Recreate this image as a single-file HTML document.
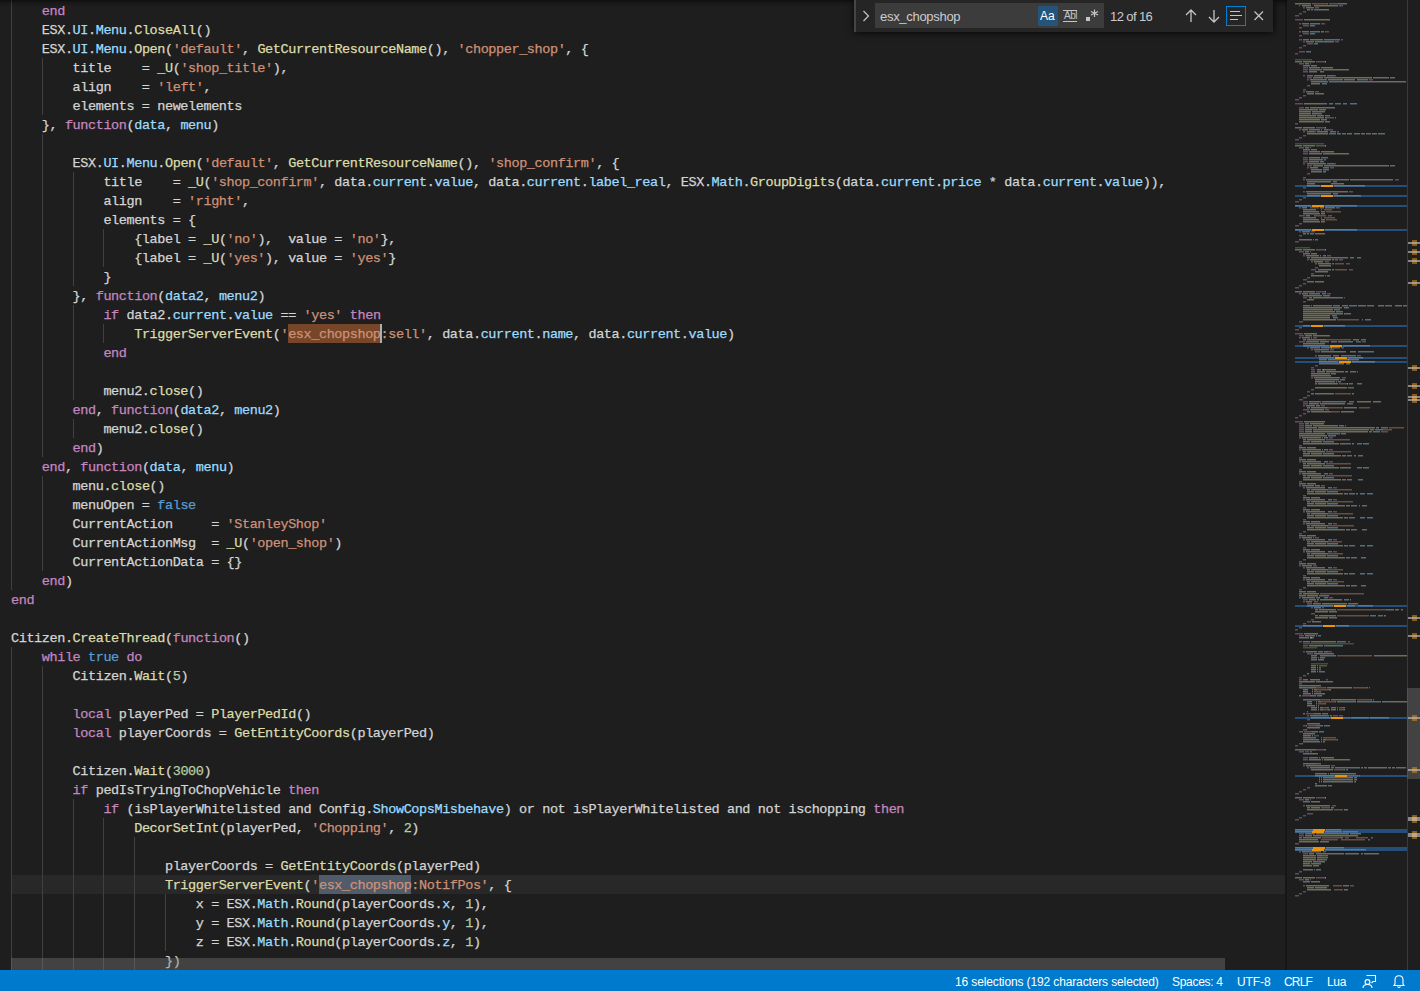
<!DOCTYPE html>
<html><head><meta charset="utf-8">
<style>
html,body{margin:0;padding:0;}
body{width:1420px;height:991px;overflow:hidden;background:#1e1e1e;position:relative;font-family:"Liberation Sans",sans-serif;}
#ed{position:absolute;left:0;top:0;width:1287px;height:970px;overflow:hidden;}
.ln{position:absolute;left:11px;height:19px;line-height:19px;white-space:pre;font-family:"Liberation Mono",monospace;font-size:13.5px;letter-spacing:-0.403px;padding-top:1px;-webkit-text-stroke:0.25px;box-sizing:border-box;height:20px;color:#d4d4d4;}
.ig{position:absolute;width:1px;background:#404040;}
.clh{position:absolute;left:11px;width:1276px;height:19px;background:#282828;}
.fm1{position:absolute;height:19px;background:#774527;}
.fm2{position:absolute;height:19px;background:#515c6a;}
.cur{position:absolute;width:2px;height:19px;background:#aeafad;}
#mmshadow{position:absolute;left:1285px;top:0;width:2px;height:970px;background:#161616;}
#mm{position:absolute;left:1287px;top:0;width:120px;height:958px;overflow:hidden;}
#vs{position:absolute;left:1407px;top:0;width:13px;height:970px;}
#vs .bd{position:absolute;left:0;top:0;width:1px;height:970px;background:#3a3a3a;}
#vs .sl{position:absolute;left:0px;top:688px;width:13px;height:91px;background:rgba(121,121,121,0.4);}
#hs{position:absolute;left:11px;top:958px;width:1274px;height:12px;}
#hs .sl{position:absolute;left:0;top:0;width:1214px;height:12px;background:rgba(121,121,121,0.4);}
#find{position:absolute;left:855px;top:0;width:418px;height:32px;background:#252526;box-shadow:0 0 8px #000;}
#find .sash{position:absolute;left:-1px;top:0;width:2px;height:32px;background:#454545;}
#find .inp{position:absolute;left:20px;top:3px;width:229px;height:25px;background:#3c3c3c;}
#find .txt{position:absolute;left:25px;top:9px;font-size:13px;color:#cccccc;letter-spacing:-0.3px;}
#sb{position:absolute;left:0;top:970px;width:1420px;height:21px;background:#007acc;color:#fff;font-size:12px;}
#sb span{position:absolute;top:5px;white-space:nowrap;letter-spacing:-0.3px;}
</style></head><body>
<div id="ed">
<div class="clh" style="top:875px"></div>
<div class="ig" style="left:11px;top:0px;height:590px"></div>
<div class="ig" style="left:11px;top:647px;height:323px"></div>
<div class="ig" style="left:42px;top:58px;height:57px"></div>
<div class="ig" style="left:42px;top:134px;height:323px"></div>
<div class="ig" style="left:42px;top:476px;height:95px"></div>
<div class="ig" style="left:42px;top:666px;height:304px"></div>
<div class="ig" style="left:73px;top:172px;height:114px"></div>
<div class="ig" style="left:73px;top:305px;height:95px"></div>
<div class="ig" style="left:73px;top:419px;height:19px"></div>
<div class="ig" style="left:73px;top:799px;height:171px"></div>
<div class="ig" style="left:103px;top:229px;height:38px"></div>
<div class="ig" style="left:103px;top:324px;height:19px"></div>
<div class="ig" style="left:103px;top:818px;height:152px"></div>
<div class="ig" style="left:134px;top:837px;height:133px"></div>
<div class="ig" style="left:165px;top:894px;height:57px"></div>
<div class="fm1" style="left:288.09px;top:324px;width:92.36px"></div>
<div class="fm2" style="left:318.88px;top:875px;width:92.36px"></div>
<div class="cur" style="left:380.46px;top:324px"></div>
<div class="ln" style="top:1px">    <span style="color:#c586c0">end</span></div>
<div class="ln" style="top:20px">    ESX.<span style="color:#9cdcfe">UI</span>.<span style="color:#9cdcfe">Menu</span>.<span style="color:#dcdcaa">CloseAll</span>()</div>
<div class="ln" style="top:39px">    ESX.<span style="color:#9cdcfe">UI</span>.<span style="color:#9cdcfe">Menu</span>.<span style="color:#dcdcaa">Open</span>(<span style="color:#ce9178">&#x27;default&#x27;</span>, <span style="color:#dcdcaa">GetCurrentResourceName</span>(), <span style="color:#ce9178">&#x27;chopper_shop&#x27;</span>, {</div>
<div class="ln" style="top:58px">        title    = <span style="color:#dcdcaa">_U</span>(<span style="color:#ce9178">&#x27;shop_title&#x27;</span>),</div>
<div class="ln" style="top:77px">        align    = <span style="color:#ce9178">&#x27;left&#x27;</span>,</div>
<div class="ln" style="top:96px">        elements = newelements</div>
<div class="ln" style="top:115px">    }, <span style="color:#c586c0">function</span>(<span style="color:#9cdcfe">data</span>, <span style="color:#9cdcfe">menu</span>)</div>
<div class="ln" style="top:153px">        ESX.<span style="color:#9cdcfe">UI</span>.<span style="color:#9cdcfe">Menu</span>.<span style="color:#dcdcaa">Open</span>(<span style="color:#ce9178">&#x27;default&#x27;</span>, <span style="color:#dcdcaa">GetCurrentResourceName</span>(), <span style="color:#ce9178">&#x27;shop_confirm&#x27;</span>, {</div>
<div class="ln" style="top:172px">            title    = <span style="color:#dcdcaa">_U</span>(<span style="color:#ce9178">&#x27;shop_confirm&#x27;</span>, data.<span style="color:#9cdcfe">current</span>.<span style="color:#9cdcfe">value</span>, data.<span style="color:#9cdcfe">current</span>.<span style="color:#9cdcfe">label_real</span>, ESX.<span style="color:#9cdcfe">Math</span>.<span style="color:#dcdcaa">GroupDigits</span>(data.<span style="color:#9cdcfe">current</span>.<span style="color:#9cdcfe">price</span> * data.<span style="color:#9cdcfe">current</span>.<span style="color:#9cdcfe">value</span>)),</div>
<div class="ln" style="top:191px">            align    = <span style="color:#ce9178">&#x27;right&#x27;</span>,</div>
<div class="ln" style="top:210px">            elements = {</div>
<div class="ln" style="top:229px">                {label = <span style="color:#dcdcaa">_U</span>(<span style="color:#ce9178">&#x27;no&#x27;</span>),  value = <span style="color:#ce9178">&#x27;no&#x27;</span>},</div>
<div class="ln" style="top:248px">                {label = <span style="color:#dcdcaa">_U</span>(<span style="color:#ce9178">&#x27;yes&#x27;</span>), value = <span style="color:#ce9178">&#x27;yes&#x27;</span>}</div>
<div class="ln" style="top:267px">            }</div>
<div class="ln" style="top:286px">        }, <span style="color:#c586c0">function</span>(<span style="color:#9cdcfe">data2</span>, <span style="color:#9cdcfe">menu2</span>)</div>
<div class="ln" style="top:305px">            <span style="color:#c586c0">if</span> data2.<span style="color:#9cdcfe">current</span>.<span style="color:#9cdcfe">value</span> == <span style="color:#ce9178">&#x27;yes&#x27;</span> <span style="color:#c586c0">then</span></div>
<div class="ln" style="top:324px">                <span style="color:#dcdcaa">TriggerServerEvent</span>(<span style="color:#ce9178">&#x27;esx_chopshop:sell&#x27;</span>, data.<span style="color:#9cdcfe">current</span>.<span style="color:#9cdcfe">name</span>, data.<span style="color:#9cdcfe">current</span>.<span style="color:#9cdcfe">value</span>)</div>
<div class="ln" style="top:343px">            <span style="color:#c586c0">end</span></div>
<div class="ln" style="top:381px">            menu2.<span style="color:#dcdcaa">close</span>()</div>
<div class="ln" style="top:400px">        <span style="color:#c586c0">end</span>, <span style="color:#c586c0">function</span>(<span style="color:#9cdcfe">data2</span>, <span style="color:#9cdcfe">menu2</span>)</div>
<div class="ln" style="top:419px">            menu2.<span style="color:#dcdcaa">close</span>()</div>
<div class="ln" style="top:438px">        <span style="color:#c586c0">end</span>)</div>
<div class="ln" style="top:457px">    <span style="color:#c586c0">end</span>, <span style="color:#c586c0">function</span>(<span style="color:#9cdcfe">data</span>, <span style="color:#9cdcfe">menu</span>)</div>
<div class="ln" style="top:476px">        menu.<span style="color:#dcdcaa">close</span>()</div>
<div class="ln" style="top:495px">        menuOpen = <span style="color:#569cd6">false</span></div>
<div class="ln" style="top:514px">        CurrentAction     = <span style="color:#ce9178">&#x27;StanleyShop&#x27;</span></div>
<div class="ln" style="top:533px">        CurrentActionMsg  = <span style="color:#dcdcaa">_U</span>(<span style="color:#ce9178">&#x27;open_shop&#x27;</span>)</div>
<div class="ln" style="top:552px">        CurrentActionData = {}</div>
<div class="ln" style="top:571px">    <span style="color:#c586c0">end</span>)</div>
<div class="ln" style="top:590px"><span style="color:#c586c0">end</span></div>
<div class="ln" style="top:628px">Citizen.<span style="color:#dcdcaa">CreateThread</span>(<span style="color:#c586c0">function</span>()</div>
<div class="ln" style="top:647px">    <span style="color:#c586c0">while</span> <span style="color:#569cd6">true</span> <span style="color:#c586c0">do</span></div>
<div class="ln" style="top:666px">        Citizen.<span style="color:#dcdcaa">Wait</span>(<span style="color:#b5cea8">5</span>)</div>
<div class="ln" style="top:704px">        <span style="color:#c586c0">local</span> playerPed = <span style="color:#dcdcaa">PlayerPedId</span>()</div>
<div class="ln" style="top:723px">        <span style="color:#c586c0">local</span> playerCoords = <span style="color:#dcdcaa">GetEntityCoords</span>(playerPed)</div>
<div class="ln" style="top:761px">        Citizen.<span style="color:#dcdcaa">Wait</span>(<span style="color:#b5cea8">3000</span>)</div>
<div class="ln" style="top:780px">        <span style="color:#c586c0">if</span> pedIsTryingToChopVehicle <span style="color:#c586c0">then</span></div>
<div class="ln" style="top:799px">            <span style="color:#c586c0">if</span> (isPlayerWhitelisted and Config.<span style="color:#9cdcfe">ShowCopsMisbehave</span>) or not isPlayerWhitelisted and not ischopping <span style="color:#c586c0">then</span></div>
<div class="ln" style="top:818px">                <span style="color:#dcdcaa">DecorSetInt</span>(playerPed, <span style="color:#ce9178">&#x27;Chopping&#x27;</span>, <span style="color:#b5cea8">2</span>)</div>
<div class="ln" style="top:856px">                    playerCoords = <span style="color:#dcdcaa">GetEntityCoords</span>(playerPed)</div>
<div class="ln" style="top:875px">                    <span style="color:#dcdcaa">TriggerServerEvent</span>(<span style="color:#ce9178">&#x27;esx_chopshop:NotifPos&#x27;</span>, {</div>
<div class="ln" style="top:894px">                        x = ESX.<span style="color:#9cdcfe">Math</span>.<span style="color:#dcdcaa">Round</span>(playerCoords.<span style="color:#9cdcfe">x</span>, <span style="color:#b5cea8">1</span>),</div>
<div class="ln" style="top:913px">                        y = ESX.<span style="color:#9cdcfe">Math</span>.<span style="color:#dcdcaa">Round</span>(playerCoords.<span style="color:#9cdcfe">y</span>, <span style="color:#b5cea8">1</span>),</div>
<div class="ln" style="top:932px">                        z = ESX.<span style="color:#9cdcfe">Math</span>.<span style="color:#dcdcaa">Round</span>(playerCoords.<span style="color:#9cdcfe">z</span>, <span style="color:#b5cea8">1</span>)</div>
<div class="ln" style="top:951px">                    })</div>
</div>
<div id="mmshadow"></div>
<div style="position:absolute;left:0;top:0;width:1287px;height:6px;box-shadow:#000 0 6px 6px -6px inset;"></div>
<div id="mm"><svg width="120" height="958" style="position:absolute;left:0;top:0">
<rect x="8" y="3" width="16" height="1" fill="#dcdcaa" fill-opacity="0.42"/><rect x="8" y="4" width="16" height="1" fill="#dcdcaa" fill-opacity="0.2"/>
<rect x="25" y="3" width="15" height="1" fill="#ce9178" fill-opacity="0.42"/><rect x="25" y="4" width="15" height="1" fill="#ce9178" fill-opacity="0.2"/>
<rect x="40" y="3" width="1" height="1" fill="#d4d4d4" fill-opacity="0.42"/><rect x="40" y="4" width="1" height="1" fill="#d4d4d4" fill-opacity="0.2"/>
<rect x="42" y="3" width="9" height="1" fill="#c586c0" fill-opacity="0.42"/><rect x="42" y="4" width="9" height="1" fill="#c586c0" fill-opacity="0.2"/>
<rect x="51" y="3" width="9" height="1" fill="#9cdcfe" fill-opacity="0.42"/><rect x="51" y="4" width="9" height="1" fill="#9cdcfe" fill-opacity="0.2"/>
<rect x="12" y="5" width="1" height="1" fill="#c586c0" fill-opacity="0.42"/><rect x="12" y="6" width="1" height="1" fill="#c586c0" fill-opacity="0.2"/>
<rect x="15" y="5" width="9" height="1" fill="#d4d4d4" fill-opacity="0.42"/><rect x="15" y="6" width="9" height="1" fill="#d4d4d4" fill-opacity="0.2"/>
<rect x="27" y="5" width="24" height="1" fill="#dcdcaa" fill-opacity="0.42"/><rect x="27" y="6" width="24" height="1" fill="#dcdcaa" fill-opacity="0.2"/>
<rect x="52" y="5" width="4" height="1" fill="#c586c0" fill-opacity="0.42"/><rect x="52" y="6" width="4" height="1" fill="#c586c0" fill-opacity="0.2"/>
<rect x="16" y="7" width="2" height="1" fill="#c586c0" fill-opacity="0.42"/><rect x="16" y="8" width="2" height="1" fill="#c586c0" fill-opacity="0.2"/>
<rect x="19" y="7" width="8" height="1" fill="#d4d4d4" fill-opacity="0.42"/><rect x="19" y="8" width="8" height="1" fill="#d4d4d4" fill-opacity="0.2"/>
<rect x="28" y="7" width="4" height="1" fill="#c586c0" fill-opacity="0.42"/><rect x="28" y="8" width="4" height="1" fill="#c586c0" fill-opacity="0.2"/>
<rect x="20" y="9" width="3" height="1" fill="#d4d4d4" fill-opacity="0.42"/><rect x="20" y="10" width="3" height="1" fill="#d4d4d4" fill-opacity="0.2"/>
<rect x="24" y="9" width="2" height="1" fill="#9cdcfe" fill-opacity="0.42"/><rect x="24" y="10" width="2" height="1" fill="#9cdcfe" fill-opacity="0.2"/>
<rect x="27" y="9" width="5" height="1" fill="#9cdcfe" fill-opacity="0.42"/><rect x="27" y="10" width="5" height="1" fill="#9cdcfe" fill-opacity="0.2"/>
<rect x="32" y="9" width="10" height="1" fill="#dcdcaa" fill-opacity="0.42"/><rect x="32" y="10" width="10" height="1" fill="#dcdcaa" fill-opacity="0.2"/>
<rect x="16" y="11" width="3" height="1" fill="#c586c0" fill-opacity="0.42"/><rect x="16" y="12" width="3" height="1" fill="#c586c0" fill-opacity="0.2"/>
<rect x="12" y="13" width="3" height="1" fill="#c586c0" fill-opacity="0.42"/><rect x="12" y="14" width="3" height="1" fill="#c586c0" fill-opacity="0.2"/>
<rect x="8" y="15" width="4" height="1" fill="#c586c0" fill-opacity="0.42"/><rect x="8" y="16" width="4" height="1" fill="#c586c0" fill-opacity="0.2"/>
<rect x="8" y="19" width="8" height="1" fill="#c586c0" fill-opacity="0.42"/><rect x="8" y="20" width="8" height="1" fill="#c586c0" fill-opacity="0.2"/>
<rect x="17" y="19" width="26" height="1" fill="#dcdcaa" fill-opacity="0.42"/><rect x="17" y="20" width="26" height="1" fill="#dcdcaa" fill-opacity="0.2"/>
<rect x="12" y="23" width="2" height="1" fill="#c586c0" fill-opacity="0.42"/><rect x="12" y="24" width="2" height="1" fill="#c586c0" fill-opacity="0.2"/>
<rect x="15" y="23" width="7" height="1" fill="#d4d4d4" fill-opacity="0.42"/><rect x="15" y="24" width="7" height="1" fill="#d4d4d4" fill-opacity="0.2"/>
<rect x="23" y="23" width="10" height="1" fill="#9cdcfe" fill-opacity="0.42"/><rect x="23" y="24" width="10" height="1" fill="#9cdcfe" fill-opacity="0.2"/>
<rect x="34" y="23" width="4" height="1" fill="#c586c0" fill-opacity="0.42"/><rect x="34" y="24" width="4" height="1" fill="#c586c0" fill-opacity="0.2"/>
<rect x="16" y="25" width="6" height="1" fill="#c586c0" fill-opacity="0.42"/><rect x="16" y="26" width="6" height="1" fill="#c586c0" fill-opacity="0.2"/>
<rect x="23" y="25" width="5" height="1" fill="#9cdcfe" fill-opacity="0.42"/><rect x="23" y="26" width="5" height="1" fill="#9cdcfe" fill-opacity="0.2"/>
<rect x="12" y="27" width="3" height="1" fill="#c586c0" fill-opacity="0.42"/><rect x="12" y="28" width="3" height="1" fill="#c586c0" fill-opacity="0.2"/>
<rect x="12" y="31" width="2" height="1" fill="#c586c0" fill-opacity="0.42"/><rect x="12" y="32" width="2" height="1" fill="#c586c0" fill-opacity="0.2"/>
<rect x="15" y="31" width="7" height="1" fill="#d4d4d4" fill-opacity="0.42"/><rect x="15" y="32" width="7" height="1" fill="#d4d4d4" fill-opacity="0.2"/>
<rect x="23" y="31" width="10" height="1" fill="#9cdcfe" fill-opacity="0.42"/><rect x="23" y="32" width="10" height="1" fill="#9cdcfe" fill-opacity="0.2"/>
<rect x="34" y="31" width="3" height="1" fill="#d4d4d4" fill-opacity="0.42"/><rect x="34" y="32" width="3" height="1" fill="#d4d4d4" fill-opacity="0.2"/>
<rect x="38" y="31" width="4" height="1" fill="#c586c0" fill-opacity="0.42"/><rect x="38" y="32" width="4" height="1" fill="#c586c0" fill-opacity="0.2"/>
<rect x="16" y="33" width="6" height="1" fill="#c586c0" fill-opacity="0.42"/><rect x="16" y="34" width="6" height="1" fill="#c586c0" fill-opacity="0.2"/>
<rect x="23" y="33" width="5" height="1" fill="#9cdcfe" fill-opacity="0.42"/><rect x="23" y="34" width="5" height="1" fill="#9cdcfe" fill-opacity="0.2"/>
<rect x="12" y="35" width="3" height="1" fill="#c586c0" fill-opacity="0.42"/><rect x="12" y="36" width="3" height="1" fill="#c586c0" fill-opacity="0.2"/>
<rect x="12" y="39" width="3" height="1" fill="#c586c0" fill-opacity="0.42"/><rect x="12" y="40" width="3" height="1" fill="#c586c0" fill-opacity="0.2"/>
<rect x="16" y="39" width="6" height="1" fill="#d4d4d4" fill-opacity="0.42"/><rect x="16" y="40" width="6" height="1" fill="#d4d4d4" fill-opacity="0.2"/>
<rect x="23" y="39" width="13" height="1" fill="#dcdcaa" fill-opacity="0.42"/><rect x="23" y="40" width="13" height="1" fill="#dcdcaa" fill-opacity="0.2"/>
<rect x="37" y="39" width="16" height="1" fill="#9cdcfe" fill-opacity="0.42"/><rect x="37" y="40" width="16" height="1" fill="#9cdcfe" fill-opacity="0.2"/>
<rect x="54" y="39" width="2" height="1" fill="#c586c0" fill-opacity="0.42"/><rect x="54" y="40" width="2" height="1" fill="#c586c0" fill-opacity="0.2"/>
<rect x="16" y="41" width="2" height="1" fill="#c586c0" fill-opacity="0.42"/><rect x="16" y="42" width="2" height="1" fill="#c586c0" fill-opacity="0.2"/>
<rect x="19" y="41" width="8" height="1" fill="#d4d4d4" fill-opacity="0.42"/><rect x="19" y="42" width="8" height="1" fill="#d4d4d4" fill-opacity="0.2"/>
<rect x="28" y="41" width="10" height="1" fill="#9cdcfe" fill-opacity="0.42"/><rect x="28" y="42" width="10" height="1" fill="#9cdcfe" fill-opacity="0.2"/>
<rect x="38" y="41" width="9" height="1" fill="#d4d4d4" fill-opacity="0.42"/><rect x="38" y="42" width="9" height="1" fill="#d4d4d4" fill-opacity="0.2"/>
<rect x="48" y="41" width="4" height="1" fill="#c586c0" fill-opacity="0.42"/><rect x="48" y="42" width="4" height="1" fill="#c586c0" fill-opacity="0.2"/>
<rect x="20" y="43" width="6" height="1" fill="#c586c0" fill-opacity="0.42"/><rect x="20" y="44" width="6" height="1" fill="#c586c0" fill-opacity="0.2"/>
<rect x="27" y="43" width="4" height="1" fill="#9cdcfe" fill-opacity="0.42"/><rect x="27" y="44" width="4" height="1" fill="#9cdcfe" fill-opacity="0.2"/>
<rect x="16" y="45" width="3" height="1" fill="#c586c0" fill-opacity="0.42"/><rect x="16" y="46" width="3" height="1" fill="#c586c0" fill-opacity="0.2"/>
<rect x="12" y="47" width="3" height="1" fill="#c586c0" fill-opacity="0.42"/><rect x="12" y="48" width="3" height="1" fill="#c586c0" fill-opacity="0.2"/>
<rect x="12" y="51" width="6" height="1" fill="#c586c0" fill-opacity="0.42"/><rect x="12" y="52" width="6" height="1" fill="#c586c0" fill-opacity="0.2"/>
<rect x="19" y="51" width="5" height="1" fill="#9cdcfe" fill-opacity="0.42"/><rect x="19" y="52" width="5" height="1" fill="#9cdcfe" fill-opacity="0.2"/>
<rect x="8" y="53" width="3" height="1" fill="#c586c0" fill-opacity="0.42"/><rect x="8" y="54" width="3" height="1" fill="#c586c0" fill-opacity="0.2"/>
<rect x="8" y="59" width="17" height="1" fill="#6a9955" fill-opacity="0.42"/><rect x="8" y="60" width="17" height="1" fill="#6a9955" fill-opacity="0.2"/>
<rect x="8" y="61" width="7" height="1" fill="#d4d4d4" fill-opacity="0.42"/><rect x="8" y="62" width="7" height="1" fill="#d4d4d4" fill-opacity="0.2"/>
<rect x="16" y="61" width="12" height="1" fill="#dcdcaa" fill-opacity="0.42"/><rect x="16" y="62" width="12" height="1" fill="#dcdcaa" fill-opacity="0.2"/>
<rect x="29" y="61" width="10" height="1" fill="#c586c0" fill-opacity="0.42"/><rect x="29" y="62" width="10" height="1" fill="#c586c0" fill-opacity="0.2"/>
<rect x="38" y="61" width="1" height="1" fill="#d4d4d4" fill-opacity="0.42"/><rect x="38" y="62" width="1" height="1" fill="#d4d4d4" fill-opacity="0.2"/>
<rect x="12" y="63" width="5" height="1" fill="#c586c0" fill-opacity="0.42"/><rect x="12" y="64" width="5" height="1" fill="#c586c0" fill-opacity="0.2"/>
<rect x="18" y="63" width="4" height="1" fill="#9cdcfe" fill-opacity="0.42"/><rect x="18" y="64" width="4" height="1" fill="#9cdcfe" fill-opacity="0.2"/>
<rect x="23" y="63" width="1" height="1" fill="#c586c0" fill-opacity="0.42"/><rect x="23" y="64" width="1" height="1" fill="#c586c0" fill-opacity="0.2"/>
<rect x="16" y="65" width="7" height="1" fill="#d4d4d4" fill-opacity="0.42"/><rect x="16" y="66" width="7" height="1" fill="#d4d4d4" fill-opacity="0.2"/>
<rect x="24" y="65" width="6" height="1" fill="#dcdcaa" fill-opacity="0.42"/><rect x="24" y="66" width="6" height="1" fill="#dcdcaa" fill-opacity="0.2"/>
<rect x="16" y="67" width="5" height="1" fill="#c586c0" fill-opacity="0.42"/><rect x="16" y="68" width="5" height="1" fill="#c586c0" fill-opacity="0.2"/>
<rect x="22" y="67" width="11" height="1" fill="#d4d4d4" fill-opacity="0.42"/><rect x="22" y="68" width="11" height="1" fill="#d4d4d4" fill-opacity="0.2"/>
<rect x="34" y="67" width="12" height="1" fill="#dcdcaa" fill-opacity="0.42"/><rect x="34" y="68" width="12" height="1" fill="#dcdcaa" fill-opacity="0.2"/>
<rect x="16" y="69" width="5" height="1" fill="#c586c0" fill-opacity="0.42"/><rect x="16" y="70" width="5" height="1" fill="#c586c0" fill-opacity="0.2"/>
<rect x="22" y="69" width="13" height="1" fill="#d4d4d4" fill-opacity="0.42"/><rect x="22" y="70" width="13" height="1" fill="#d4d4d4" fill-opacity="0.2"/>
<rect x="36" y="69" width="26" height="1" fill="#dcdcaa" fill-opacity="0.42"/><rect x="36" y="70" width="26" height="1" fill="#dcdcaa" fill-opacity="0.2"/>
<rect x="16" y="71" width="5" height="1" fill="#c586c0" fill-opacity="0.42"/><rect x="16" y="72" width="5" height="1" fill="#c586c0" fill-opacity="0.2"/>
<rect x="22" y="71" width="8" height="1" fill="#d4d4d4" fill-opacity="0.42"/><rect x="22" y="72" width="8" height="1" fill="#d4d4d4" fill-opacity="0.2"/>
<rect x="33" y="71" width="4" height="1" fill="#9cdcfe" fill-opacity="0.42"/><rect x="33" y="72" width="4" height="1" fill="#9cdcfe" fill-opacity="0.2"/>
<rect x="16" y="75" width="2" height="1" fill="#c586c0" fill-opacity="0.42"/><rect x="16" y="76" width="2" height="1" fill="#c586c0" fill-opacity="0.2"/>
<rect x="20" y="75" width="6" height="1" fill="#d4d4d4" fill-opacity="0.42"/><rect x="20" y="76" width="6" height="1" fill="#d4d4d4" fill-opacity="0.2"/>
<rect x="27" y="75" width="12" height="1" fill="#dcdcaa" fill-opacity="0.42"/><rect x="27" y="76" width="12" height="1" fill="#dcdcaa" fill-opacity="0.2"/>
<rect x="40" y="75" width="7" height="1" fill="#9cdcfe" fill-opacity="0.42"/><rect x="40" y="76" width="7" height="1" fill="#9cdcfe" fill-opacity="0.2"/>
<rect x="47" y="75" width="2" height="1" fill="#c586c0" fill-opacity="0.42"/><rect x="47" y="76" width="2" height="1" fill="#c586c0" fill-opacity="0.2"/>
<rect x="20" y="77" width="5" height="1" fill="#c586c0" fill-opacity="0.42"/><rect x="20" y="78" width="5" height="1" fill="#c586c0" fill-opacity="0.2"/>
<rect x="26" y="77" width="10" height="1" fill="#d4d4d4" fill-opacity="0.42"/><rect x="26" y="78" width="10" height="1" fill="#d4d4d4" fill-opacity="0.2"/>
<rect x="37" y="77" width="48" height="1" fill="#dcdcaa" fill-opacity="0.42"/><rect x="37" y="78" width="48" height="1" fill="#dcdcaa" fill-opacity="0.2"/>
<rect x="86" y="77" width="16" height="1" fill="#d4d4d4" fill-opacity="0.42"/><rect x="86" y="78" width="16" height="1" fill="#d4d4d4" fill-opacity="0.2"/>
<rect x="103" y="77" width="5" height="1" fill="#9cdcfe" fill-opacity="0.42"/><rect x="103" y="78" width="5" height="1" fill="#9cdcfe" fill-opacity="0.2"/>
<rect x="20" y="79" width="2" height="1" fill="#c586c0" fill-opacity="0.42"/><rect x="20" y="80" width="2" height="1" fill="#c586c0" fill-opacity="0.2"/>
<rect x="23" y="79" width="7" height="1" fill="#d4d4d4" fill-opacity="0.42"/><rect x="23" y="80" width="7" height="1" fill="#d4d4d4" fill-opacity="0.2"/>
<rect x="30" y="79" width="10" height="1" fill="#9cdcfe" fill-opacity="0.42"/><rect x="30" y="80" width="10" height="1" fill="#9cdcfe" fill-opacity="0.2"/>
<rect x="41" y="79" width="15" height="1" fill="#d4d4d4" fill-opacity="0.42"/><rect x="41" y="80" width="15" height="1" fill="#d4d4d4" fill-opacity="0.2"/>
<rect x="57" y="79" width="11" height="1" fill="#d4d4d4" fill-opacity="0.42"/><rect x="57" y="80" width="11" height="1" fill="#d4d4d4" fill-opacity="0.2"/>
<rect x="70" y="79" width="11" height="1" fill="#9cdcfe" fill-opacity="0.42"/><rect x="70" y="80" width="11" height="1" fill="#9cdcfe" fill-opacity="0.2"/>
<rect x="82" y="79" width="4" height="1" fill="#c586c0" fill-opacity="0.42"/><rect x="82" y="80" width="4" height="1" fill="#c586c0" fill-opacity="0.2"/>
<rect x="24" y="81" width="17" height="1" fill="#dcdcaa" fill-opacity="0.42"/><rect x="24" y="82" width="17" height="1" fill="#dcdcaa" fill-opacity="0.2"/>
<rect x="42" y="81" width="11" height="1" fill="#9cdcfe" fill-opacity="0.42"/><rect x="42" y="82" width="11" height="1" fill="#9cdcfe" fill-opacity="0.2"/>
<rect x="53" y="81" width="66" height="1" fill="#d4d4d4" fill-opacity="0.42"/><rect x="53" y="82" width="66" height="1" fill="#d4d4d4" fill-opacity="0.2"/>
<rect x="24" y="83" width="9" height="1" fill="#d4d4d4" fill-opacity="0.42"/><rect x="24" y="84" width="9" height="1" fill="#d4d4d4" fill-opacity="0.2"/>
<rect x="35" y="83" width="5" height="1" fill="#9cdcfe" fill-opacity="0.42"/><rect x="35" y="84" width="5" height="1" fill="#9cdcfe" fill-opacity="0.2"/>
<rect x="20" y="85" width="3" height="1" fill="#c586c0" fill-opacity="0.42"/><rect x="20" y="86" width="3" height="1" fill="#c586c0" fill-opacity="0.2"/>
<rect x="16" y="89" width="3" height="1" fill="#c586c0" fill-opacity="0.42"/><rect x="16" y="90" width="3" height="1" fill="#c586c0" fill-opacity="0.2"/>
<rect x="16" y="91" width="2" height="1" fill="#c586c0" fill-opacity="0.42"/><rect x="16" y="92" width="2" height="1" fill="#c586c0" fill-opacity="0.2"/>
<rect x="19" y="91" width="8" height="1" fill="#d4d4d4" fill-opacity="0.42"/><rect x="19" y="92" width="8" height="1" fill="#d4d4d4" fill-opacity="0.2"/>
<rect x="28" y="91" width="4" height="1" fill="#c586c0" fill-opacity="0.42"/><rect x="28" y="92" width="4" height="1" fill="#c586c0" fill-opacity="0.2"/>
<rect x="20" y="93" width="7" height="1" fill="#d4d4d4" fill-opacity="0.42"/><rect x="20" y="94" width="7" height="1" fill="#d4d4d4" fill-opacity="0.2"/>
<rect x="28" y="93" width="9" height="1" fill="#dcdcaa" fill-opacity="0.42"/><rect x="28" y="94" width="9" height="1" fill="#dcdcaa" fill-opacity="0.2"/>
<rect x="16" y="95" width="3" height="1" fill="#c586c0" fill-opacity="0.42"/><rect x="16" y="96" width="3" height="1" fill="#c586c0" fill-opacity="0.2"/>
<rect x="12" y="97" width="3" height="1" fill="#c586c0" fill-opacity="0.42"/><rect x="12" y="98" width="3" height="1" fill="#c586c0" fill-opacity="0.2"/>
<rect x="8" y="99" width="4" height="1" fill="#c586c0" fill-opacity="0.42"/><rect x="8" y="100" width="4" height="1" fill="#c586c0" fill-opacity="0.2"/>
<rect x="8" y="103" width="8" height="1" fill="#c586c0" fill-opacity="0.42"/><rect x="8" y="104" width="8" height="1" fill="#c586c0" fill-opacity="0.2"/>
<rect x="17" y="103" width="17" height="1" fill="#dcdcaa" fill-opacity="0.42"/><rect x="17" y="104" width="17" height="1" fill="#dcdcaa" fill-opacity="0.2"/>
<rect x="34" y="103" width="6" height="1" fill="#9cdcfe" fill-opacity="0.42"/><rect x="34" y="104" width="6" height="1" fill="#9cdcfe" fill-opacity="0.2"/>
<rect x="42" y="103" width="4" height="1" fill="#9cdcfe" fill-opacity="0.42"/><rect x="42" y="104" width="4" height="1" fill="#9cdcfe" fill-opacity="0.2"/>
<rect x="48" y="103" width="6" height="1" fill="#9cdcfe" fill-opacity="0.42"/><rect x="48" y="104" width="6" height="1" fill="#9cdcfe" fill-opacity="0.2"/>
<rect x="56" y="103" width="4" height="1" fill="#9cdcfe" fill-opacity="0.42"/><rect x="56" y="104" width="4" height="1" fill="#9cdcfe" fill-opacity="0.2"/>
<rect x="63" y="103" width="7" height="1" fill="#9cdcfe" fill-opacity="0.42"/><rect x="63" y="104" width="7" height="1" fill="#9cdcfe" fill-opacity="0.2"/>
<rect x="12" y="107" width="5" height="1" fill="#c586c0" fill-opacity="0.42"/><rect x="12" y="108" width="5" height="1" fill="#c586c0" fill-opacity="0.2"/>
<rect x="18" y="107" width="4" height="1" fill="#d4d4d4" fill-opacity="0.42"/><rect x="18" y="108" width="4" height="1" fill="#d4d4d4" fill-opacity="0.2"/>
<rect x="23" y="107" width="2" height="1" fill="#d4d4d4" fill-opacity="0.42"/><rect x="23" y="108" width="2" height="1" fill="#d4d4d4" fill-opacity="0.2"/>
<rect x="25" y="107" width="15" height="1" fill="#dcdcaa" fill-opacity="0.42"/><rect x="25" y="108" width="15" height="1" fill="#dcdcaa" fill-opacity="0.2"/>
<rect x="40" y="107" width="8" height="1" fill="#d4d4d4" fill-opacity="0.42"/><rect x="40" y="108" width="8" height="1" fill="#d4d4d4" fill-opacity="0.2"/>
<rect x="12" y="109" width="13" height="1" fill="#dcdcaa" fill-opacity="0.42"/><rect x="12" y="110" width="13" height="1" fill="#dcdcaa" fill-opacity="0.2"/>
<rect x="25" y="109" width="6" height="1" fill="#d4d4d4" fill-opacity="0.42"/><rect x="25" y="110" width="6" height="1" fill="#d4d4d4" fill-opacity="0.2"/>
<rect x="32" y="109" width="7" height="1" fill="#d4d4d4" fill-opacity="0.42"/><rect x="32" y="110" width="7" height="1" fill="#d4d4d4" fill-opacity="0.2"/>
<rect x="12" y="111" width="12" height="1" fill="#dcdcaa" fill-opacity="0.42"/><rect x="12" y="112" width="12" height="1" fill="#dcdcaa" fill-opacity="0.2"/>
<rect x="25" y="111" width="7" height="1" fill="#d4d4d4" fill-opacity="0.42"/><rect x="25" y="112" width="7" height="1" fill="#d4d4d4" fill-opacity="0.2"/>
<rect x="32" y="111" width="6" height="1" fill="#d4d4d4" fill-opacity="0.42"/><rect x="32" y="112" width="6" height="1" fill="#d4d4d4" fill-opacity="0.2"/>
<rect x="12" y="113" width="12" height="1" fill="#dcdcaa" fill-opacity="0.42"/><rect x="12" y="114" width="12" height="1" fill="#dcdcaa" fill-opacity="0.2"/>
<rect x="25" y="113" width="6" height="1" fill="#d4d4d4" fill-opacity="0.42"/><rect x="25" y="114" width="6" height="1" fill="#d4d4d4" fill-opacity="0.2"/>
<rect x="31" y="113" width="4" height="1" fill="#b5cea8" fill-opacity="0.42"/><rect x="31" y="114" width="4" height="1" fill="#b5cea8" fill-opacity="0.2"/>
<rect x="12" y="115" width="17" height="1" fill="#dcdcaa" fill-opacity="0.42"/><rect x="12" y="116" width="17" height="1" fill="#dcdcaa" fill-opacity="0.2"/>
<rect x="30" y="115" width="7" height="1" fill="#d4d4d4" fill-opacity="0.42"/><rect x="30" y="116" width="7" height="1" fill="#d4d4d4" fill-opacity="0.2"/>
<rect x="38" y="115" width="5" height="1" fill="#9cdcfe" fill-opacity="0.42"/><rect x="38" y="116" width="5" height="1" fill="#9cdcfe" fill-opacity="0.2"/>
<rect x="12" y="117" width="25" height="1" fill="#dcdcaa" fill-opacity="0.42"/><rect x="12" y="118" width="25" height="1" fill="#dcdcaa" fill-opacity="0.2"/>
<rect x="38" y="117" width="2" height="1" fill="#d4d4d4" fill-opacity="0.42"/><rect x="38" y="118" width="2" height="1" fill="#d4d4d4" fill-opacity="0.2"/>
<rect x="40" y="117" width="7" height="1" fill="#ce9178" fill-opacity="0.42"/><rect x="40" y="118" width="7" height="1" fill="#ce9178" fill-opacity="0.2"/>
<rect x="48" y="117" width="1" height="1" fill="#d4d4d4" fill-opacity="0.42"/><rect x="48" y="118" width="1" height="1" fill="#d4d4d4" fill-opacity="0.2"/>
<rect x="12" y="119" width="21" height="1" fill="#dcdcaa" fill-opacity="0.42"/><rect x="12" y="120" width="21" height="1" fill="#dcdcaa" fill-opacity="0.2"/>
<rect x="34" y="119" width="6" height="1" fill="#d4d4d4" fill-opacity="0.42"/><rect x="34" y="120" width="6" height="1" fill="#d4d4d4" fill-opacity="0.2"/>
<rect x="12" y="121" width="25" height="1" fill="#dcdcaa" fill-opacity="0.42"/><rect x="12" y="122" width="25" height="1" fill="#dcdcaa" fill-opacity="0.2"/>
<rect x="38" y="121" width="5" height="1" fill="#d4d4d4" fill-opacity="0.42"/><rect x="38" y="122" width="5" height="1" fill="#d4d4d4" fill-opacity="0.2"/>
<rect x="8" y="123" width="3" height="1" fill="#c586c0" fill-opacity="0.42"/><rect x="8" y="124" width="3" height="1" fill="#c586c0" fill-opacity="0.2"/>
<rect x="8" y="127" width="7" height="1" fill="#d4d4d4" fill-opacity="0.42"/><rect x="8" y="128" width="7" height="1" fill="#d4d4d4" fill-opacity="0.2"/>
<rect x="16" y="127" width="12" height="1" fill="#dcdcaa" fill-opacity="0.42"/><rect x="16" y="128" width="12" height="1" fill="#dcdcaa" fill-opacity="0.2"/>
<rect x="29" y="127" width="10" height="1" fill="#c586c0" fill-opacity="0.42"/><rect x="29" y="128" width="10" height="1" fill="#c586c0" fill-opacity="0.2"/>
<rect x="38" y="127" width="1" height="1" fill="#d4d4d4" fill-opacity="0.42"/><rect x="38" y="128" width="1" height="1" fill="#d4d4d4" fill-opacity="0.2"/>
<rect x="12" y="129" width="2" height="1" fill="#c586c0" fill-opacity="0.42"/><rect x="12" y="130" width="2" height="1" fill="#c586c0" fill-opacity="0.2"/>
<rect x="15" y="129" width="6" height="1" fill="#d4d4d4" fill-opacity="0.42"/><rect x="15" y="130" width="6" height="1" fill="#d4d4d4" fill-opacity="0.2"/>
<rect x="22" y="129" width="11" height="1" fill="#9cdcfe" fill-opacity="0.42"/><rect x="22" y="130" width="11" height="1" fill="#9cdcfe" fill-opacity="0.2"/>
<rect x="34" y="129" width="1" height="1" fill="#d4d4d4" fill-opacity="0.42"/><rect x="34" y="130" width="1" height="1" fill="#d4d4d4" fill-opacity="0.2"/>
<rect x="37" y="129" width="4" height="1" fill="#9cdcfe" fill-opacity="0.42"/><rect x="37" y="130" width="4" height="1" fill="#9cdcfe" fill-opacity="0.2"/>
<rect x="41" y="129" width="5" height="1" fill="#c586c0" fill-opacity="0.42"/><rect x="41" y="130" width="5" height="1" fill="#c586c0" fill-opacity="0.2"/>
<rect x="16" y="131" width="2" height="1" fill="#c586c0" fill-opacity="0.42"/><rect x="16" y="132" width="2" height="1" fill="#c586c0" fill-opacity="0.2"/>
<rect x="20" y="131" width="7" height="1" fill="#d4d4d4" fill-opacity="0.42"/><rect x="20" y="132" width="7" height="1" fill="#d4d4d4" fill-opacity="0.2"/>
<rect x="27" y="131" width="2" height="1" fill="#c586c0" fill-opacity="0.42"/><rect x="27" y="132" width="2" height="1" fill="#c586c0" fill-opacity="0.2"/>
<rect x="30" y="131" width="11" height="1" fill="#dcdcaa" fill-opacity="0.42"/><rect x="30" y="132" width="11" height="1" fill="#dcdcaa" fill-opacity="0.2"/>
<rect x="43" y="131" width="6" height="1" fill="#9cdcfe" fill-opacity="0.42"/><rect x="43" y="132" width="6" height="1" fill="#9cdcfe" fill-opacity="0.2"/>
<rect x="50" y="131" width="2" height="1" fill="#c586c0" fill-opacity="0.42"/><rect x="50" y="132" width="2" height="1" fill="#c586c0" fill-opacity="0.2"/>
<rect x="20" y="133" width="21" height="1" fill="#dcdcaa" fill-opacity="0.42"/><rect x="20" y="134" width="21" height="1" fill="#dcdcaa" fill-opacity="0.2"/>
<rect x="42" y="133" width="7" height="1" fill="#9cdcfe" fill-opacity="0.42"/><rect x="42" y="134" width="7" height="1" fill="#9cdcfe" fill-opacity="0.2"/>
<rect x="50" y="133" width="4" height="1" fill="#d4d4d4" fill-opacity="0.42"/><rect x="50" y="134" width="4" height="1" fill="#d4d4d4" fill-opacity="0.2"/>
<rect x="55" y="133" width="4" height="1" fill="#9cdcfe" fill-opacity="0.42"/><rect x="55" y="134" width="4" height="1" fill="#9cdcfe" fill-opacity="0.2"/>
<rect x="60" y="133" width="5" height="1" fill="#d4d4d4" fill-opacity="0.42"/><rect x="60" y="134" width="5" height="1" fill="#d4d4d4" fill-opacity="0.2"/>
<rect x="67" y="133" width="6" height="1" fill="#9cdcfe" fill-opacity="0.42"/><rect x="67" y="134" width="6" height="1" fill="#9cdcfe" fill-opacity="0.2"/>
<rect x="74" y="133" width="4" height="1" fill="#d4d4d4" fill-opacity="0.42"/><rect x="74" y="134" width="4" height="1" fill="#d4d4d4" fill-opacity="0.2"/>
<rect x="79" y="133" width="5" height="1" fill="#9cdcfe" fill-opacity="0.42"/><rect x="79" y="134" width="5" height="1" fill="#9cdcfe" fill-opacity="0.2"/>
<rect x="85" y="133" width="5" height="1" fill="#d4d4d4" fill-opacity="0.42"/><rect x="85" y="134" width="5" height="1" fill="#d4d4d4" fill-opacity="0.2"/>
<rect x="91" y="133" width="7" height="1" fill="#9cdcfe" fill-opacity="0.42"/><rect x="91" y="134" width="7" height="1" fill="#9cdcfe" fill-opacity="0.2"/>
<rect x="16" y="135" width="3" height="1" fill="#c586c0" fill-opacity="0.42"/><rect x="16" y="136" width="3" height="1" fill="#c586c0" fill-opacity="0.2"/>
<rect x="12" y="137" width="3" height="1" fill="#c586c0" fill-opacity="0.42"/><rect x="12" y="138" width="3" height="1" fill="#c586c0" fill-opacity="0.2"/>
<rect x="8" y="139" width="4" height="1" fill="#c586c0" fill-opacity="0.42"/><rect x="8" y="140" width="4" height="1" fill="#c586c0" fill-opacity="0.2"/>
<rect x="8" y="143" width="29" height="1" fill="#6a9955" fill-opacity="0.42"/><rect x="8" y="144" width="29" height="1" fill="#6a9955" fill-opacity="0.2"/>
<rect x="8" y="145" width="7" height="1" fill="#d4d4d4" fill-opacity="0.42"/><rect x="8" y="146" width="7" height="1" fill="#d4d4d4" fill-opacity="0.2"/>
<rect x="16" y="145" width="12" height="1" fill="#dcdcaa" fill-opacity="0.42"/><rect x="16" y="146" width="12" height="1" fill="#dcdcaa" fill-opacity="0.2"/>
<rect x="29" y="145" width="10" height="1" fill="#c586c0" fill-opacity="0.42"/><rect x="29" y="146" width="10" height="1" fill="#c586c0" fill-opacity="0.2"/>
<rect x="38" y="145" width="1" height="1" fill="#d4d4d4" fill-opacity="0.42"/><rect x="38" y="146" width="1" height="1" fill="#d4d4d4" fill-opacity="0.2"/>
<rect x="12" y="147" width="5" height="1" fill="#c586c0" fill-opacity="0.42"/><rect x="12" y="148" width="5" height="1" fill="#c586c0" fill-opacity="0.2"/>
<rect x="18" y="147" width="4" height="1" fill="#9cdcfe" fill-opacity="0.42"/><rect x="18" y="148" width="4" height="1" fill="#9cdcfe" fill-opacity="0.2"/>
<rect x="23" y="147" width="1" height="1" fill="#c586c0" fill-opacity="0.42"/><rect x="23" y="148" width="1" height="1" fill="#c586c0" fill-opacity="0.2"/>
<rect x="16" y="149" width="7" height="1" fill="#d4d4d4" fill-opacity="0.42"/><rect x="16" y="150" width="7" height="1" fill="#d4d4d4" fill-opacity="0.2"/>
<rect x="24" y="149" width="6" height="1" fill="#dcdcaa" fill-opacity="0.42"/><rect x="24" y="150" width="6" height="1" fill="#dcdcaa" fill-opacity="0.2"/>
<rect x="16" y="151" width="5" height="1" fill="#c586c0" fill-opacity="0.42"/><rect x="16" y="152" width="5" height="1" fill="#c586c0" fill-opacity="0.2"/>
<rect x="22" y="151" width="11" height="1" fill="#d4d4d4" fill-opacity="0.42"/><rect x="22" y="152" width="11" height="1" fill="#d4d4d4" fill-opacity="0.2"/>
<rect x="34" y="151" width="13" height="1" fill="#dcdcaa" fill-opacity="0.42"/><rect x="34" y="152" width="13" height="1" fill="#dcdcaa" fill-opacity="0.2"/>
<rect x="16" y="153" width="5" height="1" fill="#c586c0" fill-opacity="0.42"/><rect x="16" y="154" width="5" height="1" fill="#c586c0" fill-opacity="0.2"/>
<rect x="22" y="153" width="13" height="1" fill="#d4d4d4" fill-opacity="0.42"/><rect x="22" y="154" width="13" height="1" fill="#d4d4d4" fill-opacity="0.2"/>
<rect x="36" y="153" width="26" height="1" fill="#dcdcaa" fill-opacity="0.42"/><rect x="36" y="154" width="26" height="1" fill="#dcdcaa" fill-opacity="0.2"/>
<rect x="16" y="157" width="5" height="1" fill="#c586c0" fill-opacity="0.42"/><rect x="16" y="158" width="5" height="1" fill="#c586c0" fill-opacity="0.2"/>
<rect x="22" y="157" width="11" height="1" fill="#d4d4d4" fill-opacity="0.42"/><rect x="22" y="158" width="11" height="1" fill="#d4d4d4" fill-opacity="0.2"/>
<rect x="34" y="157" width="7" height="1" fill="#9cdcfe" fill-opacity="0.42"/><rect x="34" y="158" width="7" height="1" fill="#9cdcfe" fill-opacity="0.2"/>
<rect x="16" y="159" width="5" height="1" fill="#c586c0" fill-opacity="0.42"/><rect x="16" y="160" width="5" height="1" fill="#c586c0" fill-opacity="0.2"/>
<rect x="22" y="159" width="14" height="1" fill="#d4d4d4" fill-opacity="0.42"/><rect x="22" y="160" width="14" height="1" fill="#d4d4d4" fill-opacity="0.2"/>
<rect x="37" y="159" width="2" height="1" fill="#9cdcfe" fill-opacity="0.42"/><rect x="37" y="160" width="2" height="1" fill="#9cdcfe" fill-opacity="0.2"/>
<rect x="16" y="161" width="5" height="1" fill="#c586c0" fill-opacity="0.42"/><rect x="16" y="162" width="5" height="1" fill="#c586c0" fill-opacity="0.2"/>
<rect x="22" y="161" width="10" height="1" fill="#d4d4d4" fill-opacity="0.42"/><rect x="22" y="162" width="10" height="1" fill="#d4d4d4" fill-opacity="0.2"/>
<rect x="33" y="161" width="4" height="1" fill="#9cdcfe" fill-opacity="0.42"/><rect x="33" y="162" width="4" height="1" fill="#9cdcfe" fill-opacity="0.2"/>
<rect x="16" y="163" width="2" height="1" fill="#c586c0" fill-opacity="0.42"/><rect x="16" y="164" width="2" height="1" fill="#c586c0" fill-opacity="0.2"/>
<rect x="20" y="163" width="7" height="1" fill="#d4d4d4" fill-opacity="0.42"/><rect x="20" y="164" width="7" height="1" fill="#d4d4d4" fill-opacity="0.2"/>
<rect x="27" y="163" width="12" height="1" fill="#dcdcaa" fill-opacity="0.42"/><rect x="27" y="164" width="12" height="1" fill="#dcdcaa" fill-opacity="0.2"/>
<rect x="40" y="163" width="7" height="1" fill="#9cdcfe" fill-opacity="0.42"/><rect x="40" y="164" width="7" height="1" fill="#9cdcfe" fill-opacity="0.2"/>
<rect x="47" y="163" width="2" height="1" fill="#c586c0" fill-opacity="0.42"/><rect x="47" y="164" width="2" height="1" fill="#c586c0" fill-opacity="0.2"/>
<rect x="20" y="165" width="5" height="1" fill="#c586c0" fill-opacity="0.42"/><rect x="20" y="166" width="5" height="1" fill="#c586c0" fill-opacity="0.2"/>
<rect x="26" y="165" width="10" height="1" fill="#d4d4d4" fill-opacity="0.42"/><rect x="26" y="166" width="10" height="1" fill="#d4d4d4" fill-opacity="0.2"/>
<rect x="37" y="165" width="24" height="1" fill="#dcdcaa" fill-opacity="0.42"/><rect x="37" y="166" width="24" height="1" fill="#dcdcaa" fill-opacity="0.2"/>
<rect x="61" y="165" width="41" height="1" fill="#d4d4d4" fill-opacity="0.42"/><rect x="61" y="166" width="41" height="1" fill="#d4d4d4" fill-opacity="0.2"/>
<rect x="103" y="165" width="5" height="1" fill="#9cdcfe" fill-opacity="0.42"/><rect x="103" y="166" width="5" height="1" fill="#9cdcfe" fill-opacity="0.2"/>
<rect x="20" y="167" width="2" height="1" fill="#c586c0" fill-opacity="0.42"/><rect x="20" y="168" width="2" height="1" fill="#c586c0" fill-opacity="0.2"/>
<rect x="23" y="167" width="8" height="1" fill="#d4d4d4" fill-opacity="0.42"/><rect x="23" y="168" width="8" height="1" fill="#d4d4d4" fill-opacity="0.2"/>
<rect x="36" y="167" width="6" height="1" fill="#9cdcfe" fill-opacity="0.42"/><rect x="36" y="168" width="6" height="1" fill="#9cdcfe" fill-opacity="0.2"/>
<rect x="43" y="167" width="4" height="1" fill="#c586c0" fill-opacity="0.42"/><rect x="43" y="168" width="4" height="1" fill="#c586c0" fill-opacity="0.2"/>
<rect x="24" y="169" width="11" height="1" fill="#d4d4d4" fill-opacity="0.42"/><rect x="24" y="170" width="11" height="1" fill="#d4d4d4" fill-opacity="0.2"/>
<rect x="36" y="169" width="6" height="1" fill="#9cdcfe" fill-opacity="0.42"/><rect x="36" y="170" width="6" height="1" fill="#9cdcfe" fill-opacity="0.2"/>
<rect x="24" y="171" width="11" height="1" fill="#d4d4d4" fill-opacity="0.42"/><rect x="24" y="172" width="11" height="1" fill="#d4d4d4" fill-opacity="0.2"/>
<rect x="36" y="171" width="3" height="1" fill="#d4d4d4" fill-opacity="0.42"/><rect x="36" y="172" width="3" height="1" fill="#d4d4d4" fill-opacity="0.2"/>
<rect x="20" y="173" width="3" height="1" fill="#c586c0" fill-opacity="0.42"/><rect x="20" y="174" width="3" height="1" fill="#c586c0" fill-opacity="0.2"/>
<rect x="16" y="177" width="3" height="1" fill="#c586c0" fill-opacity="0.42"/><rect x="16" y="178" width="3" height="1" fill="#c586c0" fill-opacity="0.2"/>
<rect x="16" y="179" width="2" height="1" fill="#c586c0" fill-opacity="0.42"/><rect x="16" y="180" width="2" height="1" fill="#c586c0" fill-opacity="0.2"/>
<rect x="19" y="179" width="43" height="1" fill="#d4d4d4" fill-opacity="0.42"/><rect x="19" y="180" width="43" height="1" fill="#d4d4d4" fill-opacity="0.2"/>
<rect x="63" y="179" width="43" height="1" fill="#d4d4d4" fill-opacity="0.42"/><rect x="63" y="180" width="43" height="1" fill="#d4d4d4" fill-opacity="0.2"/>
<rect x="108" y="179" width="4" height="1" fill="#c586c0" fill-opacity="0.42"/><rect x="108" y="180" width="4" height="1" fill="#c586c0" fill-opacity="0.2"/>
<rect x="20" y="181" width="24" height="1" fill="#d4d4d4" fill-opacity="0.42"/><rect x="20" y="182" width="24" height="1" fill="#d4d4d4" fill-opacity="0.2"/>
<rect x="46" y="181" width="4" height="1" fill="#9cdcfe" fill-opacity="0.42"/><rect x="46" y="182" width="4" height="1" fill="#9cdcfe" fill-opacity="0.2"/>
<rect x="20" y="183" width="8" height="1" fill="#d4d4d4" fill-opacity="0.42"/><rect x="20" y="184" width="8" height="1" fill="#d4d4d4" fill-opacity="0.2"/>
<rect x="44" y="183" width="13" height="1" fill="#d4d4d4" fill-opacity="0.42"/><rect x="44" y="184" width="13" height="1" fill="#d4d4d4" fill-opacity="0.2"/>
<rect x="8" y="185" width="112" height="2" fill="#264f78"/>
<rect x="20" y="185" width="13" height="1" fill="#d4d4d4" fill-opacity="0.32"/><rect x="20" y="186" width="13" height="1" fill="#d4d4d4" fill-opacity="0.16"/>
<rect x="34" y="185" width="12" height="2" fill="#e8940f"/>
<rect x="47" y="185" width="31" height="1" fill="#d4d4d4" fill-opacity="0.32"/><rect x="47" y="186" width="31" height="1" fill="#d4d4d4" fill-opacity="0.16"/>
<rect x="16" y="187" width="3" height="1" fill="#c586c0" fill-opacity="0.42"/><rect x="16" y="188" width="3" height="1" fill="#c586c0" fill-opacity="0.2"/>
<rect x="16" y="191" width="2" height="1" fill="#c586c0" fill-opacity="0.42"/><rect x="16" y="192" width="2" height="1" fill="#c586c0" fill-opacity="0.2"/>
<rect x="19" y="191" width="42" height="1" fill="#d4d4d4" fill-opacity="0.42"/><rect x="19" y="192" width="42" height="1" fill="#d4d4d4" fill-opacity="0.2"/>
<rect x="62" y="191" width="4" height="1" fill="#c586c0" fill-opacity="0.42"/><rect x="62" y="192" width="4" height="1" fill="#c586c0" fill-opacity="0.2"/>
<rect x="20" y="193" width="24" height="1" fill="#d4d4d4" fill-opacity="0.42"/><rect x="20" y="194" width="24" height="1" fill="#d4d4d4" fill-opacity="0.2"/>
<rect x="46" y="193" width="5" height="1" fill="#9cdcfe" fill-opacity="0.42"/><rect x="46" y="194" width="5" height="1" fill="#9cdcfe" fill-opacity="0.2"/>
<rect x="8" y="195" width="112" height="2" fill="#264f78"/>
<rect x="20" y="195" width="13" height="1" fill="#d4d4d4" fill-opacity="0.32"/><rect x="20" y="196" width="13" height="1" fill="#d4d4d4" fill-opacity="0.16"/>
<rect x="34" y="195" width="12" height="2" fill="#e8940f"/>
<rect x="47" y="195" width="27" height="1" fill="#d4d4d4" fill-opacity="0.32"/><rect x="47" y="196" width="27" height="1" fill="#d4d4d4" fill-opacity="0.16"/>
<rect x="16" y="197" width="3" height="1" fill="#c586c0" fill-opacity="0.42"/><rect x="16" y="198" width="3" height="1" fill="#c586c0" fill-opacity="0.2"/>
<rect x="12" y="199" width="3" height="1" fill="#c586c0" fill-opacity="0.42"/><rect x="12" y="200" width="3" height="1" fill="#c586c0" fill-opacity="0.2"/>
<rect x="8" y="201" width="4" height="1" fill="#c586c0" fill-opacity="0.42"/><rect x="8" y="202" width="4" height="1" fill="#c586c0" fill-opacity="0.2"/>
<rect x="8" y="205" width="112" height="2" fill="#264f78"/>
<rect x="8" y="205" width="16" height="1" fill="#d4d4d4" fill-opacity="0.32"/><rect x="8" y="206" width="16" height="1" fill="#d4d4d4" fill-opacity="0.16"/>
<rect x="25" y="205" width="12" height="2" fill="#e8940f"/>
<rect x="38" y="205" width="18" height="1" fill="#d4d4d4" fill-opacity="0.32"/><rect x="38" y="206" width="18" height="1" fill="#d4d4d4" fill-opacity="0.16"/>
<rect x="56" y="205" width="14" height="1" fill="#9cdcfe" fill-opacity="0.32"/><rect x="56" y="206" width="14" height="1" fill="#9cdcfe" fill-opacity="0.16"/>
<rect x="12" y="207" width="2" height="1" fill="#c586c0" fill-opacity="0.42"/><rect x="12" y="208" width="2" height="1" fill="#c586c0" fill-opacity="0.2"/>
<rect x="15" y="207" width="5" height="1" fill="#d4d4d4" fill-opacity="0.42"/><rect x="15" y="208" width="5" height="1" fill="#d4d4d4" fill-opacity="0.2"/>
<rect x="23" y="207" width="9" height="1" fill="#ce9178" fill-opacity="0.42"/><rect x="23" y="208" width="9" height="1" fill="#ce9178" fill-opacity="0.2"/>
<rect x="33" y="207" width="4" height="1" fill="#d4d4d4" fill-opacity="0.42"/><rect x="33" y="208" width="4" height="1" fill="#d4d4d4" fill-opacity="0.2"/>
<rect x="38" y="207" width="10" height="1" fill="#dcdcaa" fill-opacity="0.42"/><rect x="38" y="208" width="10" height="1" fill="#dcdcaa" fill-opacity="0.2"/>
<rect x="49" y="207" width="4" height="1" fill="#c586c0" fill-opacity="0.42"/><rect x="49" y="208" width="4" height="1" fill="#c586c0" fill-opacity="0.2"/>
<rect x="16" y="209" width="13" height="1" fill="#d4d4d4" fill-opacity="0.42"/><rect x="16" y="210" width="13" height="1" fill="#d4d4d4" fill-opacity="0.2"/>
<rect x="34" y="209" width="1" height="1" fill="#d4d4d4" fill-opacity="0.42"/><rect x="34" y="210" width="1" height="1" fill="#d4d4d4" fill-opacity="0.2"/>
<rect x="37" y="209" width="8" height="1" fill="#ce9178" fill-opacity="0.42"/><rect x="37" y="210" width="8" height="1" fill="#ce9178" fill-opacity="0.2"/>
<rect x="16" y="211" width="16" height="1" fill="#d4d4d4" fill-opacity="0.42"/><rect x="16" y="212" width="16" height="1" fill="#d4d4d4" fill-opacity="0.2"/>
<rect x="34" y="211" width="2" height="1" fill="#d4d4d4" fill-opacity="0.42"/><rect x="34" y="212" width="2" height="1" fill="#d4d4d4" fill-opacity="0.2"/>
<rect x="36" y="211" width="2" height="1" fill="#dcdcaa" fill-opacity="0.42"/><rect x="36" y="212" width="2" height="1" fill="#dcdcaa" fill-opacity="0.2"/>
<rect x="39" y="211" width="15" height="1" fill="#ce9178" fill-opacity="0.42"/><rect x="39" y="212" width="15" height="1" fill="#ce9178" fill-opacity="0.2"/>
<rect x="16" y="213" width="17" height="1" fill="#d4d4d4" fill-opacity="0.42"/><rect x="16" y="214" width="17" height="1" fill="#d4d4d4" fill-opacity="0.2"/>
<rect x="34" y="213" width="4" height="1" fill="#d4d4d4" fill-opacity="0.42"/><rect x="34" y="214" width="4" height="1" fill="#d4d4d4" fill-opacity="0.2"/>
<rect x="12" y="215" width="6" height="1" fill="#c586c0" fill-opacity="0.42"/><rect x="12" y="216" width="6" height="1" fill="#c586c0" fill-opacity="0.2"/>
<rect x="19" y="215" width="4" height="1" fill="#d4d4d4" fill-opacity="0.42"/><rect x="19" y="216" width="4" height="1" fill="#d4d4d4" fill-opacity="0.2"/>
<rect x="27" y="215" width="12" height="1" fill="#ce9178" fill-opacity="0.42"/><rect x="27" y="216" width="12" height="1" fill="#ce9178" fill-opacity="0.2"/>
<rect x="41" y="215" width="4" height="1" fill="#c586c0" fill-opacity="0.42"/><rect x="41" y="216" width="4" height="1" fill="#c586c0" fill-opacity="0.2"/>
<rect x="16" y="217" width="13" height="1" fill="#d4d4d4" fill-opacity="0.42"/><rect x="16" y="218" width="13" height="1" fill="#d4d4d4" fill-opacity="0.2"/>
<rect x="34" y="217" width="1" height="1" fill="#d4d4d4" fill-opacity="0.42"/><rect x="34" y="218" width="1" height="1" fill="#d4d4d4" fill-opacity="0.2"/>
<rect x="37" y="217" width="11" height="1" fill="#ce9178" fill-opacity="0.42"/><rect x="37" y="218" width="11" height="1" fill="#ce9178" fill-opacity="0.2"/>
<rect x="16" y="219" width="16" height="1" fill="#d4d4d4" fill-opacity="0.42"/><rect x="16" y="220" width="16" height="1" fill="#d4d4d4" fill-opacity="0.2"/>
<rect x="34" y="219" width="2" height="1" fill="#d4d4d4" fill-opacity="0.42"/><rect x="34" y="220" width="2" height="1" fill="#d4d4d4" fill-opacity="0.2"/>
<rect x="36" y="219" width="2" height="1" fill="#dcdcaa" fill-opacity="0.42"/><rect x="36" y="220" width="2" height="1" fill="#dcdcaa" fill-opacity="0.2"/>
<rect x="39" y="219" width="11" height="1" fill="#ce9178" fill-opacity="0.42"/><rect x="39" y="220" width="11" height="1" fill="#ce9178" fill-opacity="0.2"/>
<rect x="16" y="221" width="17" height="1" fill="#d4d4d4" fill-opacity="0.42"/><rect x="16" y="222" width="17" height="1" fill="#d4d4d4" fill-opacity="0.2"/>
<rect x="34" y="221" width="4" height="1" fill="#d4d4d4" fill-opacity="0.42"/><rect x="34" y="222" width="4" height="1" fill="#d4d4d4" fill-opacity="0.2"/>
<rect x="12" y="223" width="3" height="1" fill="#c586c0" fill-opacity="0.42"/><rect x="12" y="224" width="3" height="1" fill="#c586c0" fill-opacity="0.2"/>
<rect x="8" y="225" width="4" height="1" fill="#c586c0" fill-opacity="0.42"/><rect x="8" y="226" width="4" height="1" fill="#c586c0" fill-opacity="0.2"/>
<rect x="8" y="229" width="112" height="2" fill="#264f78"/>
<rect x="8" y="229" width="16" height="1" fill="#d4d4d4" fill-opacity="0.32"/><rect x="8" y="230" width="16" height="1" fill="#d4d4d4" fill-opacity="0.16"/>
<rect x="25" y="229" width="12" height="2" fill="#e8940f"/>
<rect x="38" y="229" width="18" height="1" fill="#d4d4d4" fill-opacity="0.32"/><rect x="38" y="230" width="18" height="1" fill="#d4d4d4" fill-opacity="0.16"/>
<rect x="56" y="229" width="14" height="1" fill="#9cdcfe" fill-opacity="0.32"/><rect x="56" y="230" width="14" height="1" fill="#9cdcfe" fill-opacity="0.16"/>
<rect x="12" y="231" width="2" height="1" fill="#c586c0" fill-opacity="0.42"/><rect x="12" y="232" width="2" height="1" fill="#c586c0" fill-opacity="0.2"/>
<rect x="15" y="231" width="8" height="1" fill="#d4d4d4" fill-opacity="0.42"/><rect x="15" y="232" width="8" height="1" fill="#d4d4d4" fill-opacity="0.2"/>
<rect x="24" y="231" width="4" height="1" fill="#c586c0" fill-opacity="0.42"/><rect x="24" y="232" width="4" height="1" fill="#c586c0" fill-opacity="0.2"/>
<rect x="16" y="233" width="3" height="1" fill="#d4d4d4" fill-opacity="0.42"/><rect x="16" y="234" width="3" height="1" fill="#d4d4d4" fill-opacity="0.2"/>
<rect x="20" y="233" width="2" height="1" fill="#9cdcfe" fill-opacity="0.42"/><rect x="20" y="234" width="2" height="1" fill="#9cdcfe" fill-opacity="0.2"/>
<rect x="23" y="233" width="4" height="1" fill="#9cdcfe" fill-opacity="0.42"/><rect x="23" y="234" width="4" height="1" fill="#9cdcfe" fill-opacity="0.2"/>
<rect x="28" y="233" width="10" height="1" fill="#dcdcaa" fill-opacity="0.42"/><rect x="28" y="234" width="10" height="1" fill="#dcdcaa" fill-opacity="0.2"/>
<rect x="12" y="235" width="3" height="1" fill="#c586c0" fill-opacity="0.42"/><rect x="12" y="236" width="3" height="1" fill="#c586c0" fill-opacity="0.2"/>
<rect x="12" y="239" width="13" height="1" fill="#d4d4d4" fill-opacity="0.42"/><rect x="12" y="240" width="13" height="1" fill="#d4d4d4" fill-opacity="0.2"/>
<rect x="26" y="239" width="1" height="1" fill="#d4d4d4" fill-opacity="0.42"/><rect x="26" y="240" width="1" height="1" fill="#d4d4d4" fill-opacity="0.2"/>
<rect x="28" y="239" width="3" height="1" fill="#9cdcfe" fill-opacity="0.42"/><rect x="28" y="240" width="3" height="1" fill="#9cdcfe" fill-opacity="0.2"/>
<rect x="8" y="241" width="4" height="1" fill="#c586c0" fill-opacity="0.42"/><rect x="8" y="242" width="4" height="1" fill="#c586c0" fill-opacity="0.2"/>
<rect x="8" y="247" width="15" height="1" fill="#6a9955" fill-opacity="0.42"/><rect x="8" y="248" width="15" height="1" fill="#6a9955" fill-opacity="0.2"/>
<rect x="8" y="249" width="7" height="1" fill="#d4d4d4" fill-opacity="0.42"/><rect x="8" y="250" width="7" height="1" fill="#d4d4d4" fill-opacity="0.2"/>
<rect x="16" y="249" width="12" height="1" fill="#dcdcaa" fill-opacity="0.42"/><rect x="16" y="250" width="12" height="1" fill="#dcdcaa" fill-opacity="0.2"/>
<rect x="29" y="249" width="10" height="1" fill="#c586c0" fill-opacity="0.42"/><rect x="29" y="250" width="10" height="1" fill="#c586c0" fill-opacity="0.2"/>
<rect x="38" y="249" width="1" height="1" fill="#d4d4d4" fill-opacity="0.42"/><rect x="38" y="250" width="1" height="1" fill="#d4d4d4" fill-opacity="0.2"/>
<rect x="12" y="251" width="5" height="1" fill="#c586c0" fill-opacity="0.42"/><rect x="12" y="252" width="5" height="1" fill="#c586c0" fill-opacity="0.2"/>
<rect x="18" y="251" width="4" height="1" fill="#9cdcfe" fill-opacity="0.42"/><rect x="18" y="252" width="4" height="1" fill="#9cdcfe" fill-opacity="0.2"/>
<rect x="23" y="251" width="1" height="1" fill="#c586c0" fill-opacity="0.42"/><rect x="23" y="252" width="1" height="1" fill="#c586c0" fill-opacity="0.2"/>
<rect x="16" y="253" width="7" height="1" fill="#d4d4d4" fill-opacity="0.42"/><rect x="16" y="254" width="7" height="1" fill="#d4d4d4" fill-opacity="0.2"/>
<rect x="24" y="253" width="6" height="1" fill="#dcdcaa" fill-opacity="0.42"/><rect x="24" y="254" width="6" height="1" fill="#dcdcaa" fill-opacity="0.2"/>
<rect x="16" y="255" width="2" height="1" fill="#c586c0" fill-opacity="0.42"/><rect x="16" y="256" width="2" height="1" fill="#c586c0" fill-opacity="0.2"/>
<rect x="19" y="255" width="13" height="1" fill="#d4d4d4" fill-opacity="0.42"/><rect x="19" y="256" width="13" height="1" fill="#d4d4d4" fill-opacity="0.2"/>
<rect x="33" y="255" width="1" height="1" fill="#d4d4d4" fill-opacity="0.42"/><rect x="33" y="256" width="1" height="1" fill="#d4d4d4" fill-opacity="0.2"/>
<rect x="36" y="255" width="3" height="1" fill="#9cdcfe" fill-opacity="0.42"/><rect x="36" y="256" width="3" height="1" fill="#9cdcfe" fill-opacity="0.2"/>
<rect x="40" y="255" width="4" height="1" fill="#c586c0" fill-opacity="0.42"/><rect x="40" y="256" width="4" height="1" fill="#c586c0" fill-opacity="0.2"/>
<rect x="20" y="257" width="3" height="1" fill="#d4d4d4" fill-opacity="0.42"/><rect x="20" y="258" width="3" height="1" fill="#d4d4d4" fill-opacity="0.2"/>
<rect x="24" y="257" width="20" height="1" fill="#dcdcaa" fill-opacity="0.42"/><rect x="24" y="258" width="20" height="1" fill="#dcdcaa" fill-opacity="0.2"/>
<rect x="44" y="257" width="17" height="1" fill="#d4d4d4" fill-opacity="0.42"/><rect x="44" y="258" width="17" height="1" fill="#d4d4d4" fill-opacity="0.2"/>
<rect x="63" y="257" width="4" height="1" fill="#9cdcfe" fill-opacity="0.42"/><rect x="63" y="258" width="4" height="1" fill="#9cdcfe" fill-opacity="0.2"/>
<rect x="70" y="257" width="4" height="1" fill="#9cdcfe" fill-opacity="0.42"/><rect x="70" y="258" width="4" height="1" fill="#9cdcfe" fill-opacity="0.2"/>
<rect x="20" y="259" width="2" height="1" fill="#c586c0" fill-opacity="0.42"/><rect x="20" y="260" width="2" height="1" fill="#c586c0" fill-opacity="0.2"/>
<rect x="23" y="259" width="21" height="1" fill="#dcdcaa" fill-opacity="0.42"/><rect x="23" y="260" width="21" height="1" fill="#dcdcaa" fill-opacity="0.2"/>
<rect x="45" y="259" width="2" height="1" fill="#d4d4d4" fill-opacity="0.42"/><rect x="45" y="260" width="2" height="1" fill="#d4d4d4" fill-opacity="0.2"/>
<rect x="48" y="259" width="3" height="1" fill="#b5cea8" fill-opacity="0.42"/><rect x="48" y="260" width="3" height="1" fill="#b5cea8" fill-opacity="0.2"/>
<rect x="52" y="259" width="4" height="1" fill="#c586c0" fill-opacity="0.42"/><rect x="52" y="260" width="4" height="1" fill="#c586c0" fill-opacity="0.2"/>
<rect x="24" y="261" width="2" height="1" fill="#c586c0" fill-opacity="0.42"/><rect x="24" y="262" width="2" height="1" fill="#c586c0" fill-opacity="0.2"/>
<rect x="27" y="261" width="9" height="1" fill="#dcdcaa" fill-opacity="0.42"/><rect x="27" y="262" width="9" height="1" fill="#dcdcaa" fill-opacity="0.2"/>
<rect x="38" y="261" width="4" height="1" fill="#c586c0" fill-opacity="0.42"/><rect x="38" y="262" width="4" height="1" fill="#c586c0" fill-opacity="0.2"/>
<rect x="28" y="263" width="2" height="1" fill="#c586c0" fill-opacity="0.42"/><rect x="28" y="264" width="2" height="1" fill="#c586c0" fill-opacity="0.2"/>
<rect x="31" y="263" width="13" height="1" fill="#d4d4d4" fill-opacity="0.42"/><rect x="31" y="264" width="13" height="1" fill="#d4d4d4" fill-opacity="0.2"/>
<rect x="45" y="263" width="2" height="1" fill="#d4d4d4" fill-opacity="0.42"/><rect x="45" y="264" width="2" height="1" fill="#d4d4d4" fill-opacity="0.2"/>
<rect x="48" y="263" width="9" height="1" fill="#ce9178" fill-opacity="0.42"/><rect x="48" y="264" width="9" height="1" fill="#ce9178" fill-opacity="0.2"/>
<rect x="59" y="263" width="4" height="1" fill="#c586c0" fill-opacity="0.42"/><rect x="59" y="264" width="4" height="1" fill="#c586c0" fill-opacity="0.2"/>
<rect x="32" y="265" width="12" height="1" fill="#dcdcaa" fill-opacity="0.42"/><rect x="32" y="266" width="12" height="1" fill="#dcdcaa" fill-opacity="0.2"/>
<rect x="28" y="267" width="3" height="1" fill="#c586c0" fill-opacity="0.42"/><rect x="28" y="268" width="3" height="1" fill="#c586c0" fill-opacity="0.2"/>
<rect x="24" y="269" width="5" height="1" fill="#c586c0" fill-opacity="0.42"/><rect x="24" y="270" width="5" height="1" fill="#c586c0" fill-opacity="0.2"/>
<rect x="31" y="269" width="13" height="1" fill="#d4d4d4" fill-opacity="0.42"/><rect x="31" y="270" width="13" height="1" fill="#d4d4d4" fill-opacity="0.2"/>
<rect x="45" y="269" width="2" height="1" fill="#d4d4d4" fill-opacity="0.42"/><rect x="45" y="270" width="2" height="1" fill="#d4d4d4" fill-opacity="0.2"/>
<rect x="48" y="269" width="12" height="1" fill="#ce9178" fill-opacity="0.42"/><rect x="48" y="270" width="12" height="1" fill="#ce9178" fill-opacity="0.2"/>
<rect x="62" y="269" width="4" height="1" fill="#c586c0" fill-opacity="0.42"/><rect x="62" y="270" width="4" height="1" fill="#c586c0" fill-opacity="0.2"/>
<rect x="28" y="271" width="13" height="1" fill="#dcdcaa" fill-opacity="0.42"/><rect x="28" y="272" width="13" height="1" fill="#dcdcaa" fill-opacity="0.2"/>
<rect x="24" y="273" width="3" height="1" fill="#c586c0" fill-opacity="0.42"/><rect x="24" y="274" width="3" height="1" fill="#c586c0" fill-opacity="0.2"/>
<rect x="24" y="275" width="13" height="1" fill="#d4d4d4" fill-opacity="0.42"/><rect x="24" y="276" width="13" height="1" fill="#d4d4d4" fill-opacity="0.2"/>
<rect x="38" y="275" width="1" height="1" fill="#d4d4d4" fill-opacity="0.42"/><rect x="38" y="276" width="1" height="1" fill="#d4d4d4" fill-opacity="0.2"/>
<rect x="40" y="275" width="3" height="1" fill="#9cdcfe" fill-opacity="0.42"/><rect x="40" y="276" width="3" height="1" fill="#9cdcfe" fill-opacity="0.2"/>
<rect x="20" y="277" width="3" height="1" fill="#c586c0" fill-opacity="0.42"/><rect x="20" y="278" width="3" height="1" fill="#c586c0" fill-opacity="0.2"/>
<rect x="16" y="279" width="4" height="1" fill="#c586c0" fill-opacity="0.42"/><rect x="16" y="280" width="4" height="1" fill="#c586c0" fill-opacity="0.2"/>
<rect x="20" y="281" width="7" height="1" fill="#d4d4d4" fill-opacity="0.42"/><rect x="20" y="282" width="7" height="1" fill="#d4d4d4" fill-opacity="0.2"/>
<rect x="28" y="281" width="9" height="1" fill="#dcdcaa" fill-opacity="0.42"/><rect x="28" y="282" width="9" height="1" fill="#dcdcaa" fill-opacity="0.2"/>
<rect x="16" y="283" width="3" height="1" fill="#c586c0" fill-opacity="0.42"/><rect x="16" y="284" width="3" height="1" fill="#c586c0" fill-opacity="0.2"/>
<rect x="12" y="285" width="3" height="1" fill="#c586c0" fill-opacity="0.42"/><rect x="12" y="286" width="3" height="1" fill="#c586c0" fill-opacity="0.2"/>
<rect x="8" y="287" width="4" height="1" fill="#c586c0" fill-opacity="0.42"/><rect x="8" y="288" width="4" height="1" fill="#c586c0" fill-opacity="0.2"/>
<rect x="8" y="291" width="7" height="1" fill="#d4d4d4" fill-opacity="0.42"/><rect x="8" y="292" width="7" height="1" fill="#d4d4d4" fill-opacity="0.2"/>
<rect x="16" y="291" width="12" height="1" fill="#dcdcaa" fill-opacity="0.42"/><rect x="16" y="292" width="12" height="1" fill="#dcdcaa" fill-opacity="0.2"/>
<rect x="29" y="291" width="10" height="1" fill="#c586c0" fill-opacity="0.42"/><rect x="29" y="292" width="10" height="1" fill="#c586c0" fill-opacity="0.2"/>
<rect x="38" y="291" width="1" height="1" fill="#d4d4d4" fill-opacity="0.42"/><rect x="38" y="292" width="1" height="1" fill="#d4d4d4" fill-opacity="0.2"/>
<rect x="12" y="293" width="2" height="1" fill="#c586c0" fill-opacity="0.42"/><rect x="12" y="294" width="2" height="1" fill="#c586c0" fill-opacity="0.2"/>
<rect x="15" y="293" width="6" height="1" fill="#d4d4d4" fill-opacity="0.42"/><rect x="15" y="294" width="6" height="1" fill="#d4d4d4" fill-opacity="0.2"/>
<rect x="22" y="293" width="10" height="1" fill="#9cdcfe" fill-opacity="0.42"/><rect x="22" y="294" width="10" height="1" fill="#9cdcfe" fill-opacity="0.2"/>
<rect x="32" y="293" width="1" height="1" fill="#d4d4d4" fill-opacity="0.42"/><rect x="32" y="294" width="1" height="1" fill="#d4d4d4" fill-opacity="0.2"/>
<rect x="35" y="293" width="4" height="1" fill="#9cdcfe" fill-opacity="0.42"/><rect x="35" y="294" width="4" height="1" fill="#9cdcfe" fill-opacity="0.2"/>
<rect x="40" y="293" width="4" height="1" fill="#c586c0" fill-opacity="0.42"/><rect x="40" y="294" width="4" height="1" fill="#c586c0" fill-opacity="0.2"/>
<rect x="16" y="295" width="19" height="1" fill="#dcdcaa" fill-opacity="0.42"/><rect x="16" y="296" width="19" height="1" fill="#dcdcaa" fill-opacity="0.2"/>
<rect x="36" y="295" width="7" height="1" fill="#9cdcfe" fill-opacity="0.42"/><rect x="36" y="296" width="7" height="1" fill="#9cdcfe" fill-opacity="0.2"/>
<rect x="16" y="297" width="4" height="1" fill="#c586c0" fill-opacity="0.42"/><rect x="16" y="298" width="4" height="1" fill="#c586c0" fill-opacity="0.2"/>
<rect x="22" y="297" width="3" height="1" fill="#d4d4d4" fill-opacity="0.42"/><rect x="22" y="298" width="3" height="1" fill="#d4d4d4" fill-opacity="0.2"/>
<rect x="26" y="297" width="15" height="1" fill="#dcdcaa" fill-opacity="0.42"/><rect x="26" y="298" width="15" height="1" fill="#dcdcaa" fill-opacity="0.2"/>
<rect x="41" y="297" width="7" height="1" fill="#d4d4d4" fill-opacity="0.42"/><rect x="41" y="298" width="7" height="1" fill="#d4d4d4" fill-opacity="0.2"/>
<rect x="48" y="297" width="8" height="1" fill="#9cdcfe" fill-opacity="0.42"/><rect x="48" y="298" width="8" height="1" fill="#9cdcfe" fill-opacity="0.2"/>
<rect x="57" y="297" width="1" height="1" fill="#c586c0" fill-opacity="0.42"/><rect x="57" y="298" width="1" height="1" fill="#c586c0" fill-opacity="0.2"/>
<rect x="20" y="299" width="7" height="1" fill="#d4d4d4" fill-opacity="0.42"/><rect x="20" y="300" width="7" height="1" fill="#d4d4d4" fill-opacity="0.2"/>
<rect x="16" y="301" width="3" height="1" fill="#c586c0" fill-opacity="0.42"/><rect x="16" y="302" width="3" height="1" fill="#c586c0" fill-opacity="0.2"/>
<rect x="16" y="305" width="7" height="1" fill="#d4d4d4" fill-opacity="0.42"/><rect x="16" y="306" width="7" height="1" fill="#d4d4d4" fill-opacity="0.2"/>
<rect x="24" y="305" width="1" height="1" fill="#d4d4d4" fill-opacity="0.42"/><rect x="24" y="306" width="1" height="1" fill="#d4d4d4" fill-opacity="0.2"/>
<rect x="26" y="305" width="12" height="1" fill="#dcdcaa" fill-opacity="0.42"/><rect x="26" y="306" width="12" height="1" fill="#dcdcaa" fill-opacity="0.2"/>
<rect x="38" y="305" width="7" height="1" fill="#d4d4d4" fill-opacity="0.42"/><rect x="38" y="306" width="7" height="1" fill="#d4d4d4" fill-opacity="0.2"/>
<rect x="46" y="305" width="7" height="1" fill="#9cdcfe" fill-opacity="0.42"/><rect x="46" y="306" width="7" height="1" fill="#9cdcfe" fill-opacity="0.2"/>
<rect x="55" y="305" width="6" height="1" fill="#d4d4d4" fill-opacity="0.42"/><rect x="55" y="306" width="6" height="1" fill="#d4d4d4" fill-opacity="0.2"/>
<rect x="62" y="305" width="8" height="1" fill="#9cdcfe" fill-opacity="0.42"/><rect x="62" y="306" width="8" height="1" fill="#9cdcfe" fill-opacity="0.2"/>
<rect x="71" y="305" width="8" height="1" fill="#d4d4d4" fill-opacity="0.42"/><rect x="71" y="306" width="8" height="1" fill="#d4d4d4" fill-opacity="0.2"/>
<rect x="80" y="305" width="7" height="1" fill="#9cdcfe" fill-opacity="0.42"/><rect x="80" y="306" width="7" height="1" fill="#9cdcfe" fill-opacity="0.2"/>
<rect x="91" y="305" width="6" height="1" fill="#d4d4d4" fill-opacity="0.42"/><rect x="91" y="306" width="6" height="1" fill="#d4d4d4" fill-opacity="0.2"/>
<rect x="98" y="305" width="7" height="1" fill="#9cdcfe" fill-opacity="0.42"/><rect x="98" y="306" width="7" height="1" fill="#9cdcfe" fill-opacity="0.2"/>
<rect x="108" y="305" width="7" height="1" fill="#d4d4d4" fill-opacity="0.42"/><rect x="108" y="306" width="7" height="1" fill="#d4d4d4" fill-opacity="0.2"/>
<rect x="116" y="305" width="4" height="1" fill="#9cdcfe" fill-opacity="0.42"/><rect x="116" y="306" width="4" height="1" fill="#9cdcfe" fill-opacity="0.2"/>
<rect x="16" y="307" width="39" height="1" fill="#dcdcaa" fill-opacity="0.42"/><rect x="16" y="308" width="39" height="1" fill="#dcdcaa" fill-opacity="0.2"/>
<rect x="57" y="307" width="5" height="1" fill="#9cdcfe" fill-opacity="0.42"/><rect x="57" y="308" width="5" height="1" fill="#9cdcfe" fill-opacity="0.2"/>
<rect x="16" y="309" width="28" height="1" fill="#dcdcaa" fill-opacity="0.42"/><rect x="16" y="310" width="28" height="1" fill="#dcdcaa" fill-opacity="0.2"/>
<rect x="44" y="309" width="2" height="1" fill="#d4d4d4" fill-opacity="0.42"/><rect x="44" y="310" width="2" height="1" fill="#d4d4d4" fill-opacity="0.2"/>
<rect x="47" y="309" width="6" height="1" fill="#9cdcfe" fill-opacity="0.42"/><rect x="47" y="310" width="6" height="1" fill="#9cdcfe" fill-opacity="0.2"/>
<rect x="16" y="311" width="32" height="1" fill="#dcdcaa" fill-opacity="0.42"/><rect x="16" y="312" width="32" height="1" fill="#dcdcaa" fill-opacity="0.2"/>
<rect x="49" y="311" width="2" height="1" fill="#d4d4d4" fill-opacity="0.42"/><rect x="49" y="312" width="2" height="1" fill="#d4d4d4" fill-opacity="0.2"/>
<rect x="51" y="311" width="5" height="1" fill="#9cdcfe" fill-opacity="0.42"/><rect x="51" y="312" width="5" height="1" fill="#9cdcfe" fill-opacity="0.2"/>
<rect x="16" y="313" width="40" height="1" fill="#dcdcaa" fill-opacity="0.42"/><rect x="16" y="314" width="40" height="1" fill="#dcdcaa" fill-opacity="0.2"/>
<rect x="57" y="313" width="1" height="1" fill="#d4d4d4" fill-opacity="0.42"/><rect x="57" y="314" width="1" height="1" fill="#d4d4d4" fill-opacity="0.2"/>
<rect x="58" y="313" width="6" height="1" fill="#9cdcfe" fill-opacity="0.42"/><rect x="58" y="314" width="6" height="1" fill="#9cdcfe" fill-opacity="0.2"/>
<rect x="16" y="315" width="27" height="1" fill="#dcdcaa" fill-opacity="0.42"/><rect x="16" y="316" width="27" height="1" fill="#dcdcaa" fill-opacity="0.2"/>
<rect x="45" y="315" width="5" height="1" fill="#9cdcfe" fill-opacity="0.42"/><rect x="45" y="316" width="5" height="1" fill="#9cdcfe" fill-opacity="0.2"/>
<rect x="16" y="317" width="27" height="1" fill="#dcdcaa" fill-opacity="0.42"/><rect x="16" y="318" width="27" height="1" fill="#dcdcaa" fill-opacity="0.2"/>
<rect x="46" y="317" width="5" height="1" fill="#9cdcfe" fill-opacity="0.42"/><rect x="46" y="318" width="5" height="1" fill="#9cdcfe" fill-opacity="0.2"/>
<rect x="16" y="319" width="33" height="1" fill="#dcdcaa" fill-opacity="0.42"/><rect x="16" y="320" width="33" height="1" fill="#dcdcaa" fill-opacity="0.2"/>
<rect x="50" y="319" width="22" height="1" fill="#ce9178" fill-opacity="0.42"/><rect x="50" y="320" width="22" height="1" fill="#ce9178" fill-opacity="0.2"/>
<rect x="75" y="319" width="1" height="1" fill="#d4d4d4" fill-opacity="0.42"/><rect x="75" y="320" width="1" height="1" fill="#d4d4d4" fill-opacity="0.2"/>
<rect x="78" y="319" width="6" height="1" fill="#9cdcfe" fill-opacity="0.42"/><rect x="78" y="320" width="6" height="1" fill="#9cdcfe" fill-opacity="0.2"/>
<rect x="12" y="321" width="4" height="1" fill="#c586c0" fill-opacity="0.42"/><rect x="12" y="322" width="4" height="1" fill="#c586c0" fill-opacity="0.2"/>
<rect x="8" y="325" width="112" height="2" fill="#264f78"/>
<rect x="16" y="325" width="7" height="1" fill="#d4d4d4" fill-opacity="0.32"/><rect x="16" y="326" width="7" height="1" fill="#d4d4d4" fill-opacity="0.16"/>
<rect x="24" y="325" width="12" height="2" fill="#e8940f"/>
<rect x="37" y="325" width="21" height="1" fill="#d4d4d4" fill-opacity="0.32"/><rect x="37" y="326" width="21" height="1" fill="#d4d4d4" fill-opacity="0.16"/>
<rect x="12" y="327" width="3" height="1" fill="#c586c0" fill-opacity="0.42"/><rect x="12" y="328" width="3" height="1" fill="#c586c0" fill-opacity="0.2"/>
<rect x="8" y="329" width="4" height="1" fill="#c586c0" fill-opacity="0.42"/><rect x="8" y="330" width="4" height="1" fill="#c586c0" fill-opacity="0.2"/>
<rect x="8" y="333" width="8" height="1" fill="#c586c0" fill-opacity="0.42"/><rect x="8" y="334" width="8" height="1" fill="#c586c0" fill-opacity="0.2"/>
<rect x="17" y="333" width="13" height="1" fill="#dcdcaa" fill-opacity="0.42"/><rect x="17" y="334" width="13" height="1" fill="#dcdcaa" fill-opacity="0.2"/>
<rect x="12" y="335" width="5" height="1" fill="#c586c0" fill-opacity="0.42"/><rect x="12" y="336" width="5" height="1" fill="#c586c0" fill-opacity="0.2"/>
<rect x="18" y="335" width="7" height="1" fill="#d4d4d4" fill-opacity="0.42"/><rect x="18" y="336" width="7" height="1" fill="#d4d4d4" fill-opacity="0.2"/>
<rect x="26" y="335" width="17" height="1" fill="#dcdcaa" fill-opacity="0.42"/><rect x="26" y="336" width="17" height="1" fill="#dcdcaa" fill-opacity="0.2"/>
<rect x="12" y="337" width="2" height="1" fill="#c586c0" fill-opacity="0.42"/><rect x="12" y="338" width="2" height="1" fill="#c586c0" fill-opacity="0.2"/>
<rect x="15" y="337" width="8" height="1" fill="#d4d4d4" fill-opacity="0.42"/><rect x="15" y="338" width="8" height="1" fill="#d4d4d4" fill-opacity="0.2"/>
<rect x="24" y="337" width="1" height="1" fill="#d4d4d4" fill-opacity="0.42"/><rect x="24" y="338" width="1" height="1" fill="#d4d4d4" fill-opacity="0.2"/>
<rect x="26" y="337" width="4" height="1" fill="#c586c0" fill-opacity="0.42"/><rect x="26" y="338" width="4" height="1" fill="#c586c0" fill-opacity="0.2"/>
<rect x="16" y="339" width="3" height="1" fill="#d4d4d4" fill-opacity="0.42"/><rect x="16" y="340" width="3" height="1" fill="#d4d4d4" fill-opacity="0.2"/>
<rect x="20" y="339" width="19" height="1" fill="#dcdcaa" fill-opacity="0.42"/><rect x="20" y="340" width="19" height="1" fill="#dcdcaa" fill-opacity="0.2"/>
<rect x="39" y="339" width="25" height="1" fill="#ce9178" fill-opacity="0.42"/><rect x="39" y="340" width="25" height="1" fill="#ce9178" fill-opacity="0.2"/>
<rect x="66" y="339" width="1" height="1" fill="#d4d4d4" fill-opacity="0.42"/><rect x="66" y="340" width="1" height="1" fill="#d4d4d4" fill-opacity="0.2"/>
<rect x="67" y="339" width="5" height="1" fill="#9cdcfe" fill-opacity="0.42"/><rect x="67" y="340" width="5" height="1" fill="#9cdcfe" fill-opacity="0.2"/>
<rect x="74" y="339" width="5" height="1" fill="#9cdcfe" fill-opacity="0.42"/><rect x="74" y="340" width="5" height="1" fill="#9cdcfe" fill-opacity="0.2"/>
<rect x="12" y="341" width="6" height="1" fill="#c586c0" fill-opacity="0.42"/><rect x="12" y="342" width="6" height="1" fill="#c586c0" fill-opacity="0.2"/>
<rect x="19" y="341" width="13" height="1" fill="#d4d4d4" fill-opacity="0.42"/><rect x="19" y="342" width="13" height="1" fill="#d4d4d4" fill-opacity="0.2"/>
<rect x="33" y="341" width="9" height="1" fill="#d4d4d4" fill-opacity="0.42"/><rect x="33" y="342" width="9" height="1" fill="#d4d4d4" fill-opacity="0.2"/>
<rect x="44" y="341" width="6" height="1" fill="#9cdcfe" fill-opacity="0.42"/><rect x="44" y="342" width="6" height="1" fill="#9cdcfe" fill-opacity="0.2"/>
<rect x="51" y="341" width="15" height="1" fill="#9cdcfe" fill-opacity="0.42"/><rect x="51" y="342" width="15" height="1" fill="#9cdcfe" fill-opacity="0.2"/>
<rect x="69" y="341" width="5" height="1" fill="#b5cea8" fill-opacity="0.42"/><rect x="69" y="342" width="5" height="1" fill="#b5cea8" fill-opacity="0.2"/>
<rect x="75" y="341" width="4" height="1" fill="#c586c0" fill-opacity="0.42"/><rect x="75" y="342" width="4" height="1" fill="#c586c0" fill-opacity="0.2"/>
<rect x="16" y="343" width="22" height="1" fill="#d4d4d4" fill-opacity="0.42"/><rect x="16" y="344" width="22" height="1" fill="#d4d4d4" fill-opacity="0.2"/>
<rect x="8" y="345" width="112" height="2" fill="#264f78"/>
<rect x="16" y="345" width="26" height="1" fill="#d4d4d4" fill-opacity="0.32"/><rect x="16" y="346" width="26" height="1" fill="#d4d4d4" fill-opacity="0.16"/>
<rect x="43" y="345" width="12" height="2" fill="#e8940f"/>
<rect x="56" y="345" width="27" height="1" fill="#d4d4d4" fill-opacity="0.32"/><rect x="56" y="346" width="27" height="1" fill="#d4d4d4" fill-opacity="0.16"/>
<rect x="20" y="347" width="2" height="1" fill="#c586c0" fill-opacity="0.42"/><rect x="20" y="348" width="2" height="1" fill="#c586c0" fill-opacity="0.2"/>
<rect x="23" y="347" width="10" height="1" fill="#d4d4d4" fill-opacity="0.42"/><rect x="23" y="348" width="10" height="1" fill="#d4d4d4" fill-opacity="0.2"/>
<rect x="34" y="347" width="11" height="1" fill="#d4d4d4" fill-opacity="0.42"/><rect x="34" y="348" width="11" height="1" fill="#d4d4d4" fill-opacity="0.2"/>
<rect x="44" y="347" width="9" height="1" fill="#9cdcfe" fill-opacity="0.42"/><rect x="44" y="348" width="9" height="1" fill="#9cdcfe" fill-opacity="0.2"/>
<rect x="54" y="347" width="3" height="1" fill="#c586c0" fill-opacity="0.42"/><rect x="54" y="348" width="3" height="1" fill="#c586c0" fill-opacity="0.2"/>
<rect x="24" y="349" width="2" height="1" fill="#c586c0" fill-opacity="0.42"/><rect x="24" y="350" width="2" height="1" fill="#c586c0" fill-opacity="0.2"/>
<rect x="27" y="349" width="7" height="1" fill="#d4d4d4" fill-opacity="0.42"/><rect x="27" y="350" width="7" height="1" fill="#d4d4d4" fill-opacity="0.2"/>
<rect x="34" y="349" width="8" height="1" fill="#9cdcfe" fill-opacity="0.42"/><rect x="34" y="350" width="8" height="1" fill="#9cdcfe" fill-opacity="0.2"/>
<rect x="43" y="349" width="4" height="1" fill="#c586c0" fill-opacity="0.42"/><rect x="43" y="350" width="4" height="1" fill="#c586c0" fill-opacity="0.2"/>
<rect x="28" y="351" width="5" height="1" fill="#c586c0" fill-opacity="0.42"/><rect x="28" y="352" width="5" height="1" fill="#c586c0" fill-opacity="0.2"/>
<rect x="34" y="351" width="14" height="1" fill="#d4d4d4" fill-opacity="0.42"/><rect x="34" y="352" width="14" height="1" fill="#d4d4d4" fill-opacity="0.2"/>
<rect x="48" y="351" width="11" height="1" fill="#d4d4d4" fill-opacity="0.42"/><rect x="48" y="352" width="11" height="1" fill="#d4d4d4" fill-opacity="0.2"/>
<rect x="63" y="351" width="6" height="1" fill="#d4d4d4" fill-opacity="0.42"/><rect x="63" y="352" width="6" height="1" fill="#d4d4d4" fill-opacity="0.2"/>
<rect x="71" y="351" width="16" height="1" fill="#9cdcfe" fill-opacity="0.42"/><rect x="71" y="352" width="16" height="1" fill="#9cdcfe" fill-opacity="0.2"/>
<rect x="28" y="355" width="2" height="1" fill="#c586c0" fill-opacity="0.42"/><rect x="28" y="356" width="2" height="1" fill="#c586c0" fill-opacity="0.2"/>
<rect x="31" y="355" width="12" height="1" fill="#d4d4d4" fill-opacity="0.42"/><rect x="31" y="356" width="12" height="1" fill="#d4d4d4" fill-opacity="0.2"/>
<rect x="43" y="355" width="1" height="1" fill="#d4d4d4" fill-opacity="0.42"/><rect x="43" y="356" width="1" height="1" fill="#d4d4d4" fill-opacity="0.2"/>
<rect x="46" y="355" width="6" height="1" fill="#d4d4d4" fill-opacity="0.42"/><rect x="46" y="356" width="6" height="1" fill="#d4d4d4" fill-opacity="0.2"/>
<rect x="54" y="355" width="15" height="1" fill="#9cdcfe" fill-opacity="0.42"/><rect x="54" y="356" width="15" height="1" fill="#9cdcfe" fill-opacity="0.2"/>
<rect x="70" y="355" width="4" height="1" fill="#c586c0" fill-opacity="0.42"/><rect x="70" y="356" width="4" height="1" fill="#c586c0" fill-opacity="0.2"/>
<rect x="8" y="357" width="112" height="2" fill="#264f78"/>
<rect x="32" y="357" width="15" height="1" fill="#d4d4d4" fill-opacity="0.32"/><rect x="32" y="358" width="15" height="1" fill="#d4d4d4" fill-opacity="0.16"/>
<rect x="48" y="357" width="12" height="2" fill="#e8940f"/>
<rect x="61" y="357" width="15" height="1" fill="#d4d4d4" fill-opacity="0.32"/><rect x="61" y="358" width="15" height="1" fill="#d4d4d4" fill-opacity="0.16"/>
<rect x="32" y="359" width="8" height="1" fill="#d4d4d4" fill-opacity="0.42"/><rect x="32" y="360" width="8" height="1" fill="#d4d4d4" fill-opacity="0.2"/>
<rect x="41" y="359" width="2" height="1" fill="#d4d4d4" fill-opacity="0.42"/><rect x="41" y="360" width="2" height="1" fill="#d4d4d4" fill-opacity="0.2"/>
<rect x="43" y="359" width="19" height="1" fill="#dcdcaa" fill-opacity="0.42"/><rect x="43" y="360" width="19" height="1" fill="#dcdcaa" fill-opacity="0.2"/>
<rect x="61" y="359" width="11" height="1" fill="#d4d4d4" fill-opacity="0.42"/><rect x="61" y="360" width="11" height="1" fill="#d4d4d4" fill-opacity="0.2"/>
<rect x="8" y="361" width="112" height="2" fill="#264f78"/>
<rect x="32" y="361" width="19" height="1" fill="#d4d4d4" fill-opacity="0.32"/><rect x="32" y="362" width="19" height="1" fill="#d4d4d4" fill-opacity="0.16"/>
<rect x="52" y="361" width="12" height="2" fill="#e8940f"/>
<rect x="65" y="361" width="23" height="1" fill="#d4d4d4" fill-opacity="0.32"/><rect x="65" y="362" width="23" height="1" fill="#d4d4d4" fill-opacity="0.16"/>
<rect x="32" y="363" width="24" height="1" fill="#d4d4d4" fill-opacity="0.42"/><rect x="32" y="364" width="24" height="1" fill="#d4d4d4" fill-opacity="0.2"/>
<rect x="56" y="363" width="1" height="1" fill="#d4d4d4" fill-opacity="0.42"/><rect x="56" y="364" width="1" height="1" fill="#d4d4d4" fill-opacity="0.2"/>
<rect x="59" y="363" width="4" height="1" fill="#9cdcfe" fill-opacity="0.42"/><rect x="59" y="364" width="4" height="1" fill="#9cdcfe" fill-opacity="0.2"/>
<rect x="28" y="365" width="3" height="1" fill="#c586c0" fill-opacity="0.42"/><rect x="28" y="366" width="3" height="1" fill="#c586c0" fill-opacity="0.2"/>
<rect x="24" y="367" width="3" height="1" fill="#c586c0" fill-opacity="0.42"/><rect x="24" y="368" width="3" height="1" fill="#c586c0" fill-opacity="0.2"/>
<rect x="24" y="369" width="4" height="1" fill="#c586c0" fill-opacity="0.42"/><rect x="24" y="370" width="4" height="1" fill="#c586c0" fill-opacity="0.2"/>
<rect x="30" y="369" width="4" height="1" fill="#d4d4d4" fill-opacity="0.42"/><rect x="30" y="370" width="4" height="1" fill="#d4d4d4" fill-opacity="0.2"/>
<rect x="35" y="369" width="2" height="1" fill="#d4d4d4" fill-opacity="0.42"/><rect x="35" y="370" width="2" height="1" fill="#d4d4d4" fill-opacity="0.2"/>
<rect x="36" y="369" width="13" height="1" fill="#dcdcaa" fill-opacity="0.42"/><rect x="36" y="370" width="13" height="1" fill="#dcdcaa" fill-opacity="0.2"/>
<rect x="24" y="371" width="4" height="1" fill="#c586c0" fill-opacity="0.42"/><rect x="24" y="372" width="4" height="1" fill="#c586c0" fill-opacity="0.2"/>
<rect x="30" y="371" width="8" height="1" fill="#d4d4d4" fill-opacity="0.42"/><rect x="30" y="372" width="8" height="1" fill="#d4d4d4" fill-opacity="0.2"/>
<rect x="39" y="371" width="18" height="1" fill="#dcdcaa" fill-opacity="0.42"/><rect x="39" y="372" width="18" height="1" fill="#dcdcaa" fill-opacity="0.2"/>
<rect x="58" y="371" width="3" height="1" fill="#d4d4d4" fill-opacity="0.42"/><rect x="58" y="372" width="3" height="1" fill="#d4d4d4" fill-opacity="0.2"/>
<rect x="63" y="371" width="6" height="1" fill="#9cdcfe" fill-opacity="0.42"/><rect x="63" y="372" width="6" height="1" fill="#9cdcfe" fill-opacity="0.2"/>
<rect x="70" y="371" width="1" height="1" fill="#d4d4d4" fill-opacity="0.42"/><rect x="70" y="372" width="1" height="1" fill="#d4d4d4" fill-opacity="0.2"/>
<rect x="24" y="373" width="19" height="1" fill="#d4d4d4" fill-opacity="0.42"/><rect x="24" y="374" width="19" height="1" fill="#d4d4d4" fill-opacity="0.2"/>
<rect x="44" y="373" width="1" height="1" fill="#d4d4d4" fill-opacity="0.42"/><rect x="44" y="374" width="1" height="1" fill="#d4d4d4" fill-opacity="0.2"/>
<rect x="45" y="373" width="4" height="1" fill="#9cdcfe" fill-opacity="0.42"/><rect x="45" y="374" width="4" height="1" fill="#9cdcfe" fill-opacity="0.2"/>
<rect x="24" y="375" width="20" height="1" fill="#dcdcaa" fill-opacity="0.42"/><rect x="24" y="376" width="20" height="1" fill="#dcdcaa" fill-opacity="0.2"/>
<rect x="24" y="377" width="2" height="1" fill="#c586c0" fill-opacity="0.42"/><rect x="24" y="378" width="2" height="1" fill="#c586c0" fill-opacity="0.2"/>
<rect x="27" y="377" width="26" height="1" fill="#d4d4d4" fill-opacity="0.42"/><rect x="27" y="378" width="26" height="1" fill="#d4d4d4" fill-opacity="0.2"/>
<rect x="55" y="377" width="4" height="1" fill="#c586c0" fill-opacity="0.42"/><rect x="55" y="378" width="4" height="1" fill="#c586c0" fill-opacity="0.2"/>
<rect x="28" y="379" width="24" height="1" fill="#d4d4d4" fill-opacity="0.42"/><rect x="28" y="380" width="24" height="1" fill="#d4d4d4" fill-opacity="0.2"/>
<rect x="53" y="379" width="1" height="1" fill="#d4d4d4" fill-opacity="0.42"/><rect x="53" y="380" width="1" height="1" fill="#d4d4d4" fill-opacity="0.2"/>
<rect x="54" y="379" width="4" height="1" fill="#9cdcfe" fill-opacity="0.42"/><rect x="54" y="380" width="4" height="1" fill="#9cdcfe" fill-opacity="0.2"/>
<rect x="28" y="381" width="20" height="1" fill="#d4d4d4" fill-opacity="0.42"/><rect x="28" y="382" width="20" height="1" fill="#d4d4d4" fill-opacity="0.2"/>
<rect x="49" y="381" width="1" height="1" fill="#d4d4d4" fill-opacity="0.42"/><rect x="49" y="382" width="1" height="1" fill="#d4d4d4" fill-opacity="0.2"/>
<rect x="51" y="381" width="3" height="1" fill="#9cdcfe" fill-opacity="0.42"/><rect x="51" y="382" width="3" height="1" fill="#9cdcfe" fill-opacity="0.2"/>
<rect x="28" y="383" width="2" height="1" fill="#d4d4d4" fill-opacity="0.42"/><rect x="28" y="384" width="2" height="1" fill="#d4d4d4" fill-opacity="0.2"/>
<rect x="31" y="383" width="20" height="1" fill="#dcdcaa" fill-opacity="0.42"/><rect x="31" y="384" width="20" height="1" fill="#dcdcaa" fill-opacity="0.2"/>
<rect x="52" y="383" width="9" height="1" fill="#ce9178" fill-opacity="0.42"/><rect x="52" y="384" width="9" height="1" fill="#ce9178" fill-opacity="0.2"/>
<rect x="60" y="383" width="1" height="1" fill="#d4d4d4" fill-opacity="0.42"/><rect x="60" y="384" width="1" height="1" fill="#d4d4d4" fill-opacity="0.2"/>
<rect x="62" y="383" width="4" height="1" fill="#9cdcfe" fill-opacity="0.42"/><rect x="62" y="384" width="4" height="1" fill="#9cdcfe" fill-opacity="0.2"/>
<rect x="70" y="383" width="5" height="1" fill="#9cdcfe" fill-opacity="0.42"/><rect x="70" y="384" width="5" height="1" fill="#9cdcfe" fill-opacity="0.2"/>
<rect x="28" y="387" width="32" height="1" fill="#dcdcaa" fill-opacity="0.42"/><rect x="28" y="388" width="32" height="1" fill="#dcdcaa" fill-opacity="0.2"/>
<rect x="61" y="387" width="6" height="1" fill="#b5cea8" fill-opacity="0.42"/><rect x="61" y="388" width="6" height="1" fill="#b5cea8" fill-opacity="0.2"/>
<rect x="24" y="389" width="3" height="1" fill="#c586c0" fill-opacity="0.42"/><rect x="24" y="390" width="3" height="1" fill="#c586c0" fill-opacity="0.2"/>
<rect x="20" y="391" width="3" height="1" fill="#c586c0" fill-opacity="0.42"/><rect x="20" y="392" width="3" height="1" fill="#c586c0" fill-opacity="0.2"/>
<rect x="24" y="393" width="3" height="1" fill="#d4d4d4" fill-opacity="0.42"/><rect x="24" y="394" width="3" height="1" fill="#d4d4d4" fill-opacity="0.2"/>
<rect x="28" y="393" width="19" height="1" fill="#dcdcaa" fill-opacity="0.42"/><rect x="28" y="394" width="19" height="1" fill="#dcdcaa" fill-opacity="0.2"/>
<rect x="48" y="393" width="16" height="1" fill="#ce9178" fill-opacity="0.42"/><rect x="48" y="394" width="16" height="1" fill="#ce9178" fill-opacity="0.2"/>
<rect x="65" y="393" width="2" height="1" fill="#d4d4d4" fill-opacity="0.42"/><rect x="65" y="394" width="2" height="1" fill="#d4d4d4" fill-opacity="0.2"/>
<rect x="20" y="395" width="3" height="1" fill="#c586c0" fill-opacity="0.42"/><rect x="20" y="396" width="3" height="1" fill="#c586c0" fill-opacity="0.2"/>
<rect x="16" y="397" width="4" height="1" fill="#c586c0" fill-opacity="0.42"/><rect x="16" y="398" width="4" height="1" fill="#c586c0" fill-opacity="0.2"/>
<rect x="12" y="399" width="4" height="1" fill="#c586c0" fill-opacity="0.42"/><rect x="12" y="400" width="4" height="1" fill="#c586c0" fill-opacity="0.2"/>
<rect x="16" y="401" width="5" height="1" fill="#c586c0" fill-opacity="0.42"/><rect x="16" y="402" width="5" height="1" fill="#c586c0" fill-opacity="0.2"/>
<rect x="22" y="401" width="12" height="1" fill="#d4d4d4" fill-opacity="0.42"/><rect x="22" y="402" width="12" height="1" fill="#d4d4d4" fill-opacity="0.2"/>
<rect x="35" y="401" width="9" height="1" fill="#d4d4d4" fill-opacity="0.42"/><rect x="35" y="402" width="9" height="1" fill="#d4d4d4" fill-opacity="0.2"/>
<rect x="44" y="401" width="15" height="1" fill="#9cdcfe" fill-opacity="0.42"/><rect x="44" y="402" width="15" height="1" fill="#9cdcfe" fill-opacity="0.2"/>
<rect x="62" y="401" width="5" height="1" fill="#b5cea8" fill-opacity="0.42"/><rect x="62" y="402" width="5" height="1" fill="#b5cea8" fill-opacity="0.2"/>
<rect x="70" y="401" width="14" height="1" fill="#dcdcaa" fill-opacity="0.42"/><rect x="70" y="402" width="14" height="1" fill="#dcdcaa" fill-opacity="0.2"/>
<rect x="86" y="401" width="8" height="1" fill="#d4d4d4" fill-opacity="0.42"/><rect x="86" y="402" width="8" height="1" fill="#d4d4d4" fill-opacity="0.2"/>
<rect x="16" y="403" width="5" height="1" fill="#c586c0" fill-opacity="0.42"/><rect x="16" y="404" width="5" height="1" fill="#c586c0" fill-opacity="0.2"/>
<rect x="22" y="403" width="10" height="1" fill="#d4d4d4" fill-opacity="0.42"/><rect x="22" y="404" width="10" height="1" fill="#d4d4d4" fill-opacity="0.2"/>
<rect x="33" y="403" width="5" height="1" fill="#d4d4d4" fill-opacity="0.42"/><rect x="33" y="404" width="5" height="1" fill="#d4d4d4" fill-opacity="0.2"/>
<rect x="38" y="403" width="20" height="1" fill="#dcdcaa" fill-opacity="0.42"/><rect x="38" y="404" width="20" height="1" fill="#dcdcaa" fill-opacity="0.2"/>
<rect x="60" y="403" width="6" height="1" fill="#b5cea8" fill-opacity="0.42"/><rect x="60" y="404" width="6" height="1" fill="#b5cea8" fill-opacity="0.2"/>
<rect x="16" y="405" width="2" height="1" fill="#c586c0" fill-opacity="0.42"/><rect x="16" y="406" width="2" height="1" fill="#c586c0" fill-opacity="0.2"/>
<rect x="19" y="405" width="9" height="1" fill="#d4d4d4" fill-opacity="0.42"/><rect x="19" y="406" width="9" height="1" fill="#d4d4d4" fill-opacity="0.2"/>
<rect x="29" y="405" width="4" height="1" fill="#d4d4d4" fill-opacity="0.42"/><rect x="29" y="406" width="4" height="1" fill="#d4d4d4" fill-opacity="0.2"/>
<rect x="34" y="405" width="4" height="1" fill="#c586c0" fill-opacity="0.42"/><rect x="34" y="406" width="4" height="1" fill="#c586c0" fill-opacity="0.2"/>
<rect x="20" y="407" width="3" height="1" fill="#d4d4d4" fill-opacity="0.42"/><rect x="20" y="408" width="3" height="1" fill="#d4d4d4" fill-opacity="0.2"/>
<rect x="24" y="407" width="17" height="1" fill="#dcdcaa" fill-opacity="0.42"/><rect x="24" y="408" width="17" height="1" fill="#dcdcaa" fill-opacity="0.2"/>
<rect x="41" y="407" width="15" height="1" fill="#ce9178" fill-opacity="0.42"/><rect x="41" y="408" width="15" height="1" fill="#ce9178" fill-opacity="0.2"/>
<rect x="57" y="407" width="13" height="1" fill="#d4d4d4" fill-opacity="0.42"/><rect x="57" y="408" width="13" height="1" fill="#d4d4d4" fill-opacity="0.2"/>
<rect x="72" y="407" width="11" height="1" fill="#ce9178" fill-opacity="0.42"/><rect x="72" y="408" width="11" height="1" fill="#ce9178" fill-opacity="0.2"/>
<rect x="16" y="409" width="6" height="1" fill="#c586c0" fill-opacity="0.42"/><rect x="16" y="410" width="6" height="1" fill="#c586c0" fill-opacity="0.2"/>
<rect x="23" y="409" width="10" height="1" fill="#d4d4d4" fill-opacity="0.42"/><rect x="23" y="410" width="10" height="1" fill="#d4d4d4" fill-opacity="0.2"/>
<rect x="33" y="409" width="4" height="1" fill="#d4d4d4" fill-opacity="0.42"/><rect x="33" y="410" width="4" height="1" fill="#d4d4d4" fill-opacity="0.2"/>
<rect x="38" y="409" width="4" height="1" fill="#c586c0" fill-opacity="0.42"/><rect x="38" y="410" width="4" height="1" fill="#c586c0" fill-opacity="0.2"/>
<rect x="20" y="411" width="3" height="1" fill="#d4d4d4" fill-opacity="0.42"/><rect x="20" y="412" width="3" height="1" fill="#d4d4d4" fill-opacity="0.2"/>
<rect x="24" y="411" width="20" height="1" fill="#dcdcaa" fill-opacity="0.42"/><rect x="24" y="412" width="20" height="1" fill="#dcdcaa" fill-opacity="0.2"/>
<rect x="44" y="411" width="9" height="1" fill="#ce9178" fill-opacity="0.42"/><rect x="44" y="412" width="9" height="1" fill="#ce9178" fill-opacity="0.2"/>
<rect x="54" y="411" width="13" height="1" fill="#d4d4d4" fill-opacity="0.42"/><rect x="54" y="412" width="13" height="1" fill="#d4d4d4" fill-opacity="0.2"/>
<rect x="16" y="413" width="3" height="1" fill="#c586c0" fill-opacity="0.42"/><rect x="16" y="414" width="3" height="1" fill="#c586c0" fill-opacity="0.2"/>
<rect x="12" y="415" width="3" height="1" fill="#c586c0" fill-opacity="0.42"/><rect x="12" y="416" width="3" height="1" fill="#c586c0" fill-opacity="0.2"/>
<rect x="8" y="417" width="3" height="1" fill="#c586c0" fill-opacity="0.42"/><rect x="8" y="418" width="3" height="1" fill="#c586c0" fill-opacity="0.2"/>
<rect x="8" y="421" width="8" height="1" fill="#c586c0" fill-opacity="0.42"/><rect x="8" y="422" width="8" height="1" fill="#c586c0" fill-opacity="0.2"/>
<rect x="17" y="421" width="21" height="1" fill="#dcdcaa" fill-opacity="0.42"/><rect x="17" y="422" width="21" height="1" fill="#dcdcaa" fill-opacity="0.2"/>
<rect x="12" y="423" width="5" height="1" fill="#c586c0" fill-opacity="0.42"/><rect x="12" y="424" width="5" height="1" fill="#c586c0" fill-opacity="0.2"/>
<rect x="18" y="423" width="4" height="1" fill="#d4d4d4" fill-opacity="0.42"/><rect x="18" y="424" width="4" height="1" fill="#d4d4d4" fill-opacity="0.2"/>
<rect x="23" y="423" width="2" height="1" fill="#d4d4d4" fill-opacity="0.42"/><rect x="23" y="424" width="2" height="1" fill="#d4d4d4" fill-opacity="0.2"/>
<rect x="25" y="423" width="12" height="1" fill="#dcdcaa" fill-opacity="0.42"/><rect x="25" y="424" width="12" height="1" fill="#dcdcaa" fill-opacity="0.2"/>
<rect x="12" y="425" width="5" height="1" fill="#c586c0" fill-opacity="0.42"/><rect x="12" y="426" width="5" height="1" fill="#c586c0" fill-opacity="0.2"/>
<rect x="18" y="425" width="7" height="1" fill="#d4d4d4" fill-opacity="0.42"/><rect x="18" y="426" width="7" height="1" fill="#d4d4d4" fill-opacity="0.2"/>
<rect x="26" y="425" width="2" height="1" fill="#d4d4d4" fill-opacity="0.42"/><rect x="26" y="426" width="2" height="1" fill="#d4d4d4" fill-opacity="0.2"/>
<rect x="28" y="425" width="19" height="1" fill="#dcdcaa" fill-opacity="0.42"/><rect x="28" y="426" width="19" height="1" fill="#dcdcaa" fill-opacity="0.2"/>
<rect x="47" y="425" width="4" height="1" fill="#d4d4d4" fill-opacity="0.42"/><rect x="47" y="426" width="4" height="1" fill="#d4d4d4" fill-opacity="0.2"/>
<rect x="52" y="425" width="5" height="1" fill="#9cdcfe" fill-opacity="0.42"/><rect x="52" y="426" width="5" height="1" fill="#9cdcfe" fill-opacity="0.2"/>
<rect x="58" y="425" width="1" height="1" fill="#d4d4d4" fill-opacity="0.42"/><rect x="58" y="426" width="1" height="1" fill="#d4d4d4" fill-opacity="0.2"/>
<rect x="12" y="427" width="5" height="1" fill="#c586c0" fill-opacity="0.42"/><rect x="12" y="428" width="5" height="1" fill="#c586c0" fill-opacity="0.2"/>
<rect x="18" y="427" width="12" height="1" fill="#d4d4d4" fill-opacity="0.42"/><rect x="18" y="428" width="12" height="1" fill="#d4d4d4" fill-opacity="0.2"/>
<rect x="31" y="427" width="2" height="1" fill="#d4d4d4" fill-opacity="0.42"/><rect x="31" y="428" width="2" height="1" fill="#d4d4d4" fill-opacity="0.2"/>
<rect x="33" y="427" width="55" height="1" fill="#dcdcaa" fill-opacity="0.42"/><rect x="33" y="428" width="55" height="1" fill="#dcdcaa" fill-opacity="0.2"/>
<rect x="89" y="427" width="3" height="1" fill="#d4d4d4" fill-opacity="0.42"/><rect x="89" y="428" width="3" height="1" fill="#d4d4d4" fill-opacity="0.2"/>
<rect x="94" y="427" width="7" height="1" fill="#9cdcfe" fill-opacity="0.42"/><rect x="94" y="428" width="7" height="1" fill="#9cdcfe" fill-opacity="0.2"/>
<rect x="102" y="427" width="15" height="1" fill="#ce9178" fill-opacity="0.42"/><rect x="102" y="428" width="15" height="1" fill="#ce9178" fill-opacity="0.2"/>
<rect x="12" y="429" width="5" height="1" fill="#c586c0" fill-opacity="0.42"/><rect x="12" y="430" width="5" height="1" fill="#c586c0" fill-opacity="0.2"/>
<rect x="18" y="429" width="7" height="1" fill="#d4d4d4" fill-opacity="0.42"/><rect x="18" y="430" width="7" height="1" fill="#d4d4d4" fill-opacity="0.2"/>
<rect x="26" y="429" width="1" height="1" fill="#d4d4d4" fill-opacity="0.42"/><rect x="26" y="430" width="1" height="1" fill="#d4d4d4" fill-opacity="0.2"/>
<rect x="27" y="429" width="55" height="1" fill="#dcdcaa" fill-opacity="0.42"/><rect x="27" y="430" width="55" height="1" fill="#dcdcaa" fill-opacity="0.2"/>
<rect x="83" y="429" width="4" height="1" fill="#d4d4d4" fill-opacity="0.42"/><rect x="83" y="430" width="4" height="1" fill="#d4d4d4" fill-opacity="0.2"/>
<rect x="88" y="429" width="8" height="1" fill="#9cdcfe" fill-opacity="0.42"/><rect x="88" y="430" width="8" height="1" fill="#9cdcfe" fill-opacity="0.2"/>
<rect x="96" y="429" width="9" height="1" fill="#ce9178" fill-opacity="0.42"/><rect x="96" y="430" width="9" height="1" fill="#ce9178" fill-opacity="0.2"/>
<rect x="12" y="431" width="5" height="1" fill="#c586c0" fill-opacity="0.42"/><rect x="12" y="432" width="5" height="1" fill="#c586c0" fill-opacity="0.2"/>
<rect x="18" y="431" width="7" height="1" fill="#d4d4d4" fill-opacity="0.42"/><rect x="18" y="432" width="7" height="1" fill="#d4d4d4" fill-opacity="0.2"/>
<rect x="26" y="431" width="1" height="1" fill="#d4d4d4" fill-opacity="0.42"/><rect x="26" y="432" width="1" height="1" fill="#d4d4d4" fill-opacity="0.2"/>
<rect x="27" y="431" width="54" height="1" fill="#dcdcaa" fill-opacity="0.42"/><rect x="27" y="432" width="54" height="1" fill="#dcdcaa" fill-opacity="0.2"/>
<rect x="82" y="431" width="3" height="1" fill="#d4d4d4" fill-opacity="0.42"/><rect x="82" y="432" width="3" height="1" fill="#d4d4d4" fill-opacity="0.2"/>
<rect x="86" y="431" width="7" height="1" fill="#9cdcfe" fill-opacity="0.42"/><rect x="86" y="432" width="7" height="1" fill="#9cdcfe" fill-opacity="0.2"/>
<rect x="94" y="431" width="7" height="1" fill="#ce9178" fill-opacity="0.42"/><rect x="94" y="432" width="7" height="1" fill="#ce9178" fill-opacity="0.2"/>
<rect x="12" y="433" width="26" height="1" fill="#dcdcaa" fill-opacity="0.42"/><rect x="12" y="434" width="26" height="1" fill="#dcdcaa" fill-opacity="0.2"/>
<rect x="40" y="433" width="7" height="1" fill="#9cdcfe" fill-opacity="0.42"/><rect x="40" y="434" width="7" height="1" fill="#9cdcfe" fill-opacity="0.2"/>
<rect x="47" y="433" width="6" height="1" fill="#9cdcfe" fill-opacity="0.42"/><rect x="47" y="434" width="6" height="1" fill="#9cdcfe" fill-opacity="0.2"/>
<rect x="54" y="433" width="5" height="1" fill="#9cdcfe" fill-opacity="0.42"/><rect x="54" y="434" width="5" height="1" fill="#9cdcfe" fill-opacity="0.2"/>
<rect x="12" y="435" width="28" height="1" fill="#dcdcaa" fill-opacity="0.42"/><rect x="12" y="436" width="28" height="1" fill="#dcdcaa" fill-opacity="0.2"/>
<rect x="41" y="435" width="2" height="1" fill="#d4d4d4" fill-opacity="0.42"/><rect x="41" y="436" width="2" height="1" fill="#d4d4d4" fill-opacity="0.2"/>
<rect x="43" y="435" width="6" height="1" fill="#9cdcfe" fill-opacity="0.42"/><rect x="43" y="436" width="6" height="1" fill="#9cdcfe" fill-opacity="0.2"/>
<rect x="12" y="437" width="2" height="1" fill="#c586c0" fill-opacity="0.42"/><rect x="12" y="438" width="2" height="1" fill="#c586c0" fill-opacity="0.2"/>
<rect x="15" y="437" width="19" height="1" fill="#d4d4d4" fill-opacity="0.42"/><rect x="15" y="438" width="19" height="1" fill="#d4d4d4" fill-opacity="0.2"/>
<rect x="35" y="437" width="1" height="1" fill="#d4d4d4" fill-opacity="0.42"/><rect x="35" y="438" width="1" height="1" fill="#d4d4d4" fill-opacity="0.2"/>
<rect x="37" y="437" width="4" height="1" fill="#9cdcfe" fill-opacity="0.42"/><rect x="37" y="438" width="4" height="1" fill="#9cdcfe" fill-opacity="0.2"/>
<rect x="42" y="437" width="4" height="1" fill="#c586c0" fill-opacity="0.42"/><rect x="42" y="438" width="4" height="1" fill="#c586c0" fill-opacity="0.2"/>
<rect x="16" y="439" width="3" height="1" fill="#d4d4d4" fill-opacity="0.42"/><rect x="16" y="440" width="3" height="1" fill="#d4d4d4" fill-opacity="0.2"/>
<rect x="20" y="439" width="18" height="1" fill="#dcdcaa" fill-opacity="0.42"/><rect x="20" y="440" width="18" height="1" fill="#dcdcaa" fill-opacity="0.2"/>
<rect x="39" y="439" width="24" height="1" fill="#ce9178" fill-opacity="0.42"/><rect x="39" y="440" width="24" height="1" fill="#ce9178" fill-opacity="0.2"/>
<rect x="16" y="441" width="7" height="1" fill="#d4d4d4" fill-opacity="0.42"/><rect x="16" y="442" width="7" height="1" fill="#d4d4d4" fill-opacity="0.2"/>
<rect x="24" y="441" width="11" height="1" fill="#dcdcaa" fill-opacity="0.42"/><rect x="24" y="442" width="11" height="1" fill="#dcdcaa" fill-opacity="0.2"/>
<rect x="36" y="441" width="11" height="1" fill="#9cdcfe" fill-opacity="0.42"/><rect x="36" y="442" width="11" height="1" fill="#9cdcfe" fill-opacity="0.2"/>
<rect x="16" y="443" width="36" height="1" fill="#dcdcaa" fill-opacity="0.42"/><rect x="16" y="444" width="36" height="1" fill="#dcdcaa" fill-opacity="0.2"/>
<rect x="53" y="443" width="5" height="1" fill="#d4d4d4" fill-opacity="0.42"/><rect x="53" y="444" width="5" height="1" fill="#d4d4d4" fill-opacity="0.2"/>
<rect x="58" y="443" width="6" height="1" fill="#9cdcfe" fill-opacity="0.42"/><rect x="58" y="444" width="6" height="1" fill="#9cdcfe" fill-opacity="0.2"/>
<rect x="65" y="443" width="2" height="1" fill="#d4d4d4" fill-opacity="0.42"/><rect x="65" y="444" width="2" height="1" fill="#d4d4d4" fill-opacity="0.2"/>
<rect x="70" y="443" width="5" height="1" fill="#9cdcfe" fill-opacity="0.42"/><rect x="70" y="444" width="5" height="1" fill="#9cdcfe" fill-opacity="0.2"/>
<rect x="76" y="443" width="6" height="1" fill="#9cdcfe" fill-opacity="0.42"/><rect x="76" y="444" width="6" height="1" fill="#9cdcfe" fill-opacity="0.2"/>
<rect x="12" y="445" width="3" height="1" fill="#c586c0" fill-opacity="0.42"/><rect x="12" y="446" width="3" height="1" fill="#c586c0" fill-opacity="0.2"/>
<rect x="12" y="447" width="7" height="1" fill="#d4d4d4" fill-opacity="0.42"/><rect x="12" y="448" width="7" height="1" fill="#d4d4d4" fill-opacity="0.2"/>
<rect x="20" y="447" width="9" height="1" fill="#dcdcaa" fill-opacity="0.42"/><rect x="20" y="448" width="9" height="1" fill="#dcdcaa" fill-opacity="0.2"/>
<rect x="12" y="449" width="2" height="1" fill="#c586c0" fill-opacity="0.42"/><rect x="12" y="450" width="2" height="1" fill="#c586c0" fill-opacity="0.2"/>
<rect x="15" y="449" width="19" height="1" fill="#d4d4d4" fill-opacity="0.42"/><rect x="15" y="450" width="19" height="1" fill="#d4d4d4" fill-opacity="0.2"/>
<rect x="35" y="449" width="1" height="1" fill="#d4d4d4" fill-opacity="0.42"/><rect x="35" y="450" width="1" height="1" fill="#d4d4d4" fill-opacity="0.2"/>
<rect x="37" y="449" width="4" height="1" fill="#9cdcfe" fill-opacity="0.42"/><rect x="37" y="450" width="4" height="1" fill="#9cdcfe" fill-opacity="0.2"/>
<rect x="42" y="449" width="4" height="1" fill="#c586c0" fill-opacity="0.42"/><rect x="42" y="450" width="4" height="1" fill="#c586c0" fill-opacity="0.2"/>
<rect x="16" y="451" width="3" height="1" fill="#d4d4d4" fill-opacity="0.42"/><rect x="16" y="452" width="3" height="1" fill="#d4d4d4" fill-opacity="0.2"/>
<rect x="20" y="451" width="18" height="1" fill="#dcdcaa" fill-opacity="0.42"/><rect x="20" y="452" width="18" height="1" fill="#dcdcaa" fill-opacity="0.2"/>
<rect x="39" y="451" width="25" height="1" fill="#ce9178" fill-opacity="0.42"/><rect x="39" y="452" width="25" height="1" fill="#ce9178" fill-opacity="0.2"/>
<rect x="16" y="453" width="7" height="1" fill="#d4d4d4" fill-opacity="0.42"/><rect x="16" y="454" width="7" height="1" fill="#d4d4d4" fill-opacity="0.2"/>
<rect x="24" y="453" width="11" height="1" fill="#dcdcaa" fill-opacity="0.42"/><rect x="24" y="454" width="11" height="1" fill="#dcdcaa" fill-opacity="0.2"/>
<rect x="36" y="453" width="11" height="1" fill="#9cdcfe" fill-opacity="0.42"/><rect x="36" y="454" width="11" height="1" fill="#9cdcfe" fill-opacity="0.2"/>
<rect x="16" y="455" width="38" height="1" fill="#dcdcaa" fill-opacity="0.42"/><rect x="16" y="456" width="38" height="1" fill="#dcdcaa" fill-opacity="0.2"/>
<rect x="55" y="455" width="4" height="1" fill="#d4d4d4" fill-opacity="0.42"/><rect x="55" y="456" width="4" height="1" fill="#d4d4d4" fill-opacity="0.2"/>
<rect x="60" y="455" width="5" height="1" fill="#9cdcfe" fill-opacity="0.42"/><rect x="60" y="456" width="5" height="1" fill="#9cdcfe" fill-opacity="0.2"/>
<rect x="67" y="455" width="2" height="1" fill="#d4d4d4" fill-opacity="0.42"/><rect x="67" y="456" width="2" height="1" fill="#d4d4d4" fill-opacity="0.2"/>
<rect x="71" y="455" width="5" height="1" fill="#9cdcfe" fill-opacity="0.42"/><rect x="71" y="456" width="5" height="1" fill="#9cdcfe" fill-opacity="0.2"/>
<rect x="12" y="457" width="3" height="1" fill="#c586c0" fill-opacity="0.42"/><rect x="12" y="458" width="3" height="1" fill="#c586c0" fill-opacity="0.2"/>
<rect x="12" y="459" width="7" height="1" fill="#d4d4d4" fill-opacity="0.42"/><rect x="12" y="460" width="7" height="1" fill="#d4d4d4" fill-opacity="0.2"/>
<rect x="20" y="459" width="9" height="1" fill="#dcdcaa" fill-opacity="0.42"/><rect x="20" y="460" width="9" height="1" fill="#dcdcaa" fill-opacity="0.2"/>
<rect x="12" y="461" width="2" height="1" fill="#c586c0" fill-opacity="0.42"/><rect x="12" y="462" width="2" height="1" fill="#c586c0" fill-opacity="0.2"/>
<rect x="15" y="461" width="19" height="1" fill="#d4d4d4" fill-opacity="0.42"/><rect x="15" y="462" width="19" height="1" fill="#d4d4d4" fill-opacity="0.2"/>
<rect x="37" y="461" width="4" height="1" fill="#9cdcfe" fill-opacity="0.42"/><rect x="37" y="462" width="4" height="1" fill="#9cdcfe" fill-opacity="0.2"/>
<rect x="42" y="461" width="4" height="1" fill="#c586c0" fill-opacity="0.42"/><rect x="42" y="462" width="4" height="1" fill="#c586c0" fill-opacity="0.2"/>
<rect x="16" y="463" width="3" height="1" fill="#d4d4d4" fill-opacity="0.42"/><rect x="16" y="464" width="3" height="1" fill="#d4d4d4" fill-opacity="0.2"/>
<rect x="20" y="463" width="18" height="1" fill="#dcdcaa" fill-opacity="0.42"/><rect x="20" y="464" width="18" height="1" fill="#dcdcaa" fill-opacity="0.2"/>
<rect x="39" y="463" width="25" height="1" fill="#ce9178" fill-opacity="0.42"/><rect x="39" y="464" width="25" height="1" fill="#ce9178" fill-opacity="0.2"/>
<rect x="16" y="465" width="7" height="1" fill="#d4d4d4" fill-opacity="0.42"/><rect x="16" y="466" width="7" height="1" fill="#d4d4d4" fill-opacity="0.2"/>
<rect x="24" y="465" width="11" height="1" fill="#dcdcaa" fill-opacity="0.42"/><rect x="24" y="466" width="11" height="1" fill="#dcdcaa" fill-opacity="0.2"/>
<rect x="36" y="465" width="11" height="1" fill="#9cdcfe" fill-opacity="0.42"/><rect x="36" y="466" width="11" height="1" fill="#9cdcfe" fill-opacity="0.2"/>
<rect x="16" y="467" width="36" height="1" fill="#dcdcaa" fill-opacity="0.42"/><rect x="16" y="468" width="36" height="1" fill="#dcdcaa" fill-opacity="0.2"/>
<rect x="53" y="467" width="5" height="1" fill="#d4d4d4" fill-opacity="0.42"/><rect x="53" y="468" width="5" height="1" fill="#d4d4d4" fill-opacity="0.2"/>
<rect x="58" y="467" width="6" height="1" fill="#9cdcfe" fill-opacity="0.42"/><rect x="58" y="468" width="6" height="1" fill="#9cdcfe" fill-opacity="0.2"/>
<rect x="70" y="467" width="5" height="1" fill="#9cdcfe" fill-opacity="0.42"/><rect x="70" y="468" width="5" height="1" fill="#9cdcfe" fill-opacity="0.2"/>
<rect x="76" y="467" width="6" height="1" fill="#9cdcfe" fill-opacity="0.42"/><rect x="76" y="468" width="6" height="1" fill="#9cdcfe" fill-opacity="0.2"/>
<rect x="12" y="469" width="3" height="1" fill="#c586c0" fill-opacity="0.42"/><rect x="12" y="470" width="3" height="1" fill="#c586c0" fill-opacity="0.2"/>
<rect x="12" y="471" width="7" height="1" fill="#d4d4d4" fill-opacity="0.42"/><rect x="12" y="472" width="7" height="1" fill="#d4d4d4" fill-opacity="0.2"/>
<rect x="20" y="471" width="9" height="1" fill="#dcdcaa" fill-opacity="0.42"/><rect x="20" y="472" width="9" height="1" fill="#dcdcaa" fill-opacity="0.2"/>
<rect x="12" y="473" width="2" height="1" fill="#c586c0" fill-opacity="0.42"/><rect x="12" y="474" width="2" height="1" fill="#c586c0" fill-opacity="0.2"/>
<rect x="15" y="473" width="19" height="1" fill="#d4d4d4" fill-opacity="0.42"/><rect x="15" y="474" width="19" height="1" fill="#d4d4d4" fill-opacity="0.2"/>
<rect x="37" y="473" width="4" height="1" fill="#9cdcfe" fill-opacity="0.42"/><rect x="37" y="474" width="4" height="1" fill="#9cdcfe" fill-opacity="0.2"/>
<rect x="42" y="473" width="4" height="1" fill="#c586c0" fill-opacity="0.42"/><rect x="42" y="474" width="4" height="1" fill="#c586c0" fill-opacity="0.2"/>
<rect x="16" y="475" width="3" height="1" fill="#d4d4d4" fill-opacity="0.42"/><rect x="16" y="476" width="3" height="1" fill="#d4d4d4" fill-opacity="0.2"/>
<rect x="20" y="475" width="18" height="1" fill="#dcdcaa" fill-opacity="0.42"/><rect x="20" y="476" width="18" height="1" fill="#dcdcaa" fill-opacity="0.2"/>
<rect x="39" y="475" width="26" height="1" fill="#ce9178" fill-opacity="0.42"/><rect x="39" y="476" width="26" height="1" fill="#ce9178" fill-opacity="0.2"/>
<rect x="16" y="477" width="7" height="1" fill="#d4d4d4" fill-opacity="0.42"/><rect x="16" y="478" width="7" height="1" fill="#d4d4d4" fill-opacity="0.2"/>
<rect x="24" y="477" width="11" height="1" fill="#dcdcaa" fill-opacity="0.42"/><rect x="24" y="478" width="11" height="1" fill="#dcdcaa" fill-opacity="0.2"/>
<rect x="36" y="477" width="11" height="1" fill="#9cdcfe" fill-opacity="0.42"/><rect x="36" y="478" width="11" height="1" fill="#9cdcfe" fill-opacity="0.2"/>
<rect x="16" y="479" width="38" height="1" fill="#dcdcaa" fill-opacity="0.42"/><rect x="16" y="480" width="38" height="1" fill="#dcdcaa" fill-opacity="0.2"/>
<rect x="55" y="479" width="4" height="1" fill="#d4d4d4" fill-opacity="0.42"/><rect x="55" y="480" width="4" height="1" fill="#d4d4d4" fill-opacity="0.2"/>
<rect x="60" y="479" width="5" height="1" fill="#9cdcfe" fill-opacity="0.42"/><rect x="60" y="480" width="5" height="1" fill="#9cdcfe" fill-opacity="0.2"/>
<rect x="71" y="479" width="5" height="1" fill="#9cdcfe" fill-opacity="0.42"/><rect x="71" y="480" width="5" height="1" fill="#9cdcfe" fill-opacity="0.2"/>
<rect x="12" y="481" width="3" height="1" fill="#c586c0" fill-opacity="0.42"/><rect x="12" y="482" width="3" height="1" fill="#c586c0" fill-opacity="0.2"/>
<rect x="12" y="483" width="7" height="1" fill="#d4d4d4" fill-opacity="0.42"/><rect x="12" y="484" width="7" height="1" fill="#d4d4d4" fill-opacity="0.2"/>
<rect x="20" y="483" width="9" height="1" fill="#dcdcaa" fill-opacity="0.42"/><rect x="20" y="484" width="9" height="1" fill="#dcdcaa" fill-opacity="0.2"/>
<rect x="12" y="485" width="2" height="1" fill="#c586c0" fill-opacity="0.42"/><rect x="12" y="486" width="2" height="1" fill="#c586c0" fill-opacity="0.2"/>
<rect x="15" y="485" width="12" height="1" fill="#d4d4d4" fill-opacity="0.42"/><rect x="15" y="486" width="12" height="1" fill="#d4d4d4" fill-opacity="0.2"/>
<rect x="28" y="485" width="5" height="1" fill="#d4d4d4" fill-opacity="0.42"/><rect x="28" y="486" width="5" height="1" fill="#d4d4d4" fill-opacity="0.2"/>
<rect x="34" y="485" width="4" height="1" fill="#c586c0" fill-opacity="0.42"/><rect x="34" y="486" width="4" height="1" fill="#c586c0" fill-opacity="0.2"/>
<rect x="16" y="487" width="2" height="1" fill="#c586c0" fill-opacity="0.42"/><rect x="16" y="488" width="2" height="1" fill="#c586c0" fill-opacity="0.2"/>
<rect x="19" y="487" width="19" height="1" fill="#d4d4d4" fill-opacity="0.42"/><rect x="19" y="488" width="19" height="1" fill="#d4d4d4" fill-opacity="0.2"/>
<rect x="41" y="487" width="4" height="1" fill="#9cdcfe" fill-opacity="0.42"/><rect x="41" y="488" width="4" height="1" fill="#9cdcfe" fill-opacity="0.2"/>
<rect x="46" y="487" width="4" height="1" fill="#c586c0" fill-opacity="0.42"/><rect x="46" y="488" width="4" height="1" fill="#c586c0" fill-opacity="0.2"/>
<rect x="20" y="489" width="3" height="1" fill="#d4d4d4" fill-opacity="0.42"/><rect x="20" y="490" width="3" height="1" fill="#d4d4d4" fill-opacity="0.2"/>
<rect x="24" y="489" width="17" height="1" fill="#dcdcaa" fill-opacity="0.42"/><rect x="24" y="490" width="17" height="1" fill="#dcdcaa" fill-opacity="0.2"/>
<rect x="41" y="489" width="24" height="1" fill="#ce9178" fill-opacity="0.42"/><rect x="41" y="490" width="24" height="1" fill="#ce9178" fill-opacity="0.2"/>
<rect x="20" y="491" width="7" height="1" fill="#d4d4d4" fill-opacity="0.42"/><rect x="20" y="492" width="7" height="1" fill="#d4d4d4" fill-opacity="0.2"/>
<rect x="28" y="491" width="11" height="1" fill="#dcdcaa" fill-opacity="0.42"/><rect x="28" y="492" width="11" height="1" fill="#dcdcaa" fill-opacity="0.2"/>
<rect x="40" y="491" width="11" height="1" fill="#9cdcfe" fill-opacity="0.42"/><rect x="40" y="492" width="11" height="1" fill="#9cdcfe" fill-opacity="0.2"/>
<rect x="20" y="493" width="36" height="1" fill="#dcdcaa" fill-opacity="0.42"/><rect x="20" y="494" width="36" height="1" fill="#dcdcaa" fill-opacity="0.2"/>
<rect x="57" y="493" width="4" height="1" fill="#d4d4d4" fill-opacity="0.42"/><rect x="57" y="494" width="4" height="1" fill="#d4d4d4" fill-opacity="0.2"/>
<rect x="62" y="493" width="6" height="1" fill="#9cdcfe" fill-opacity="0.42"/><rect x="62" y="494" width="6" height="1" fill="#9cdcfe" fill-opacity="0.2"/>
<rect x="69" y="493" width="2" height="1" fill="#d4d4d4" fill-opacity="0.42"/><rect x="69" y="494" width="2" height="1" fill="#d4d4d4" fill-opacity="0.2"/>
<rect x="73" y="493" width="5" height="1" fill="#9cdcfe" fill-opacity="0.42"/><rect x="73" y="494" width="5" height="1" fill="#9cdcfe" fill-opacity="0.2"/>
<rect x="80" y="493" width="6" height="1" fill="#9cdcfe" fill-opacity="0.42"/><rect x="80" y="494" width="6" height="1" fill="#9cdcfe" fill-opacity="0.2"/>
<rect x="16" y="495" width="3" height="1" fill="#c586c0" fill-opacity="0.42"/><rect x="16" y="496" width="3" height="1" fill="#c586c0" fill-opacity="0.2"/>
<rect x="16" y="497" width="7" height="1" fill="#d4d4d4" fill-opacity="0.42"/><rect x="16" y="498" width="7" height="1" fill="#d4d4d4" fill-opacity="0.2"/>
<rect x="24" y="497" width="9" height="1" fill="#dcdcaa" fill-opacity="0.42"/><rect x="24" y="498" width="9" height="1" fill="#dcdcaa" fill-opacity="0.2"/>
<rect x="16" y="499" width="2" height="1" fill="#c586c0" fill-opacity="0.42"/><rect x="16" y="500" width="2" height="1" fill="#c586c0" fill-opacity="0.2"/>
<rect x="19" y="499" width="19" height="1" fill="#d4d4d4" fill-opacity="0.42"/><rect x="19" y="500" width="19" height="1" fill="#d4d4d4" fill-opacity="0.2"/>
<rect x="41" y="499" width="4" height="1" fill="#9cdcfe" fill-opacity="0.42"/><rect x="41" y="500" width="4" height="1" fill="#9cdcfe" fill-opacity="0.2"/>
<rect x="46" y="499" width="4" height="1" fill="#c586c0" fill-opacity="0.42"/><rect x="46" y="500" width="4" height="1" fill="#c586c0" fill-opacity="0.2"/>
<rect x="20" y="501" width="3" height="1" fill="#d4d4d4" fill-opacity="0.42"/><rect x="20" y="502" width="3" height="1" fill="#d4d4d4" fill-opacity="0.2"/>
<rect x="24" y="501" width="17" height="1" fill="#dcdcaa" fill-opacity="0.42"/><rect x="24" y="502" width="17" height="1" fill="#dcdcaa" fill-opacity="0.2"/>
<rect x="41" y="501" width="25" height="1" fill="#ce9178" fill-opacity="0.42"/><rect x="41" y="502" width="25" height="1" fill="#ce9178" fill-opacity="0.2"/>
<rect x="20" y="503" width="7" height="1" fill="#d4d4d4" fill-opacity="0.42"/><rect x="20" y="504" width="7" height="1" fill="#d4d4d4" fill-opacity="0.2"/>
<rect x="28" y="503" width="11" height="1" fill="#dcdcaa" fill-opacity="0.42"/><rect x="28" y="504" width="11" height="1" fill="#dcdcaa" fill-opacity="0.2"/>
<rect x="40" y="503" width="11" height="1" fill="#9cdcfe" fill-opacity="0.42"/><rect x="40" y="504" width="11" height="1" fill="#9cdcfe" fill-opacity="0.2"/>
<rect x="20" y="505" width="38" height="1" fill="#dcdcaa" fill-opacity="0.42"/><rect x="20" y="506" width="38" height="1" fill="#dcdcaa" fill-opacity="0.2"/>
<rect x="59" y="505" width="4" height="1" fill="#d4d4d4" fill-opacity="0.42"/><rect x="59" y="506" width="4" height="1" fill="#d4d4d4" fill-opacity="0.2"/>
<rect x="64" y="505" width="6" height="1" fill="#9cdcfe" fill-opacity="0.42"/><rect x="64" y="506" width="6" height="1" fill="#9cdcfe" fill-opacity="0.2"/>
<rect x="72" y="505" width="1" height="1" fill="#d4d4d4" fill-opacity="0.42"/><rect x="72" y="506" width="1" height="1" fill="#d4d4d4" fill-opacity="0.2"/>
<rect x="75" y="505" width="5" height="1" fill="#9cdcfe" fill-opacity="0.42"/><rect x="75" y="506" width="5" height="1" fill="#9cdcfe" fill-opacity="0.2"/>
<rect x="16" y="507" width="3" height="1" fill="#c586c0" fill-opacity="0.42"/><rect x="16" y="508" width="3" height="1" fill="#c586c0" fill-opacity="0.2"/>
<rect x="16" y="509" width="7" height="1" fill="#d4d4d4" fill-opacity="0.42"/><rect x="16" y="510" width="7" height="1" fill="#d4d4d4" fill-opacity="0.2"/>
<rect x="24" y="509" width="9" height="1" fill="#dcdcaa" fill-opacity="0.42"/><rect x="24" y="510" width="9" height="1" fill="#dcdcaa" fill-opacity="0.2"/>
<rect x="16" y="511" width="2" height="1" fill="#c586c0" fill-opacity="0.42"/><rect x="16" y="512" width="2" height="1" fill="#c586c0" fill-opacity="0.2"/>
<rect x="19" y="511" width="19" height="1" fill="#d4d4d4" fill-opacity="0.42"/><rect x="19" y="512" width="19" height="1" fill="#d4d4d4" fill-opacity="0.2"/>
<rect x="41" y="511" width="4" height="1" fill="#9cdcfe" fill-opacity="0.42"/><rect x="41" y="512" width="4" height="1" fill="#9cdcfe" fill-opacity="0.2"/>
<rect x="46" y="511" width="4" height="1" fill="#c586c0" fill-opacity="0.42"/><rect x="46" y="512" width="4" height="1" fill="#c586c0" fill-opacity="0.2"/>
<rect x="20" y="513" width="3" height="1" fill="#d4d4d4" fill-opacity="0.42"/><rect x="20" y="514" width="3" height="1" fill="#d4d4d4" fill-opacity="0.2"/>
<rect x="24" y="513" width="17" height="1" fill="#dcdcaa" fill-opacity="0.42"/><rect x="24" y="514" width="17" height="1" fill="#dcdcaa" fill-opacity="0.2"/>
<rect x="41" y="513" width="25" height="1" fill="#ce9178" fill-opacity="0.42"/><rect x="41" y="514" width="25" height="1" fill="#ce9178" fill-opacity="0.2"/>
<rect x="20" y="515" width="7" height="1" fill="#d4d4d4" fill-opacity="0.42"/><rect x="20" y="516" width="7" height="1" fill="#d4d4d4" fill-opacity="0.2"/>
<rect x="28" y="515" width="11" height="1" fill="#dcdcaa" fill-opacity="0.42"/><rect x="28" y="516" width="11" height="1" fill="#dcdcaa" fill-opacity="0.2"/>
<rect x="40" y="515" width="11" height="1" fill="#9cdcfe" fill-opacity="0.42"/><rect x="40" y="516" width="11" height="1" fill="#9cdcfe" fill-opacity="0.2"/>
<rect x="20" y="517" width="36" height="1" fill="#dcdcaa" fill-opacity="0.42"/><rect x="20" y="518" width="36" height="1" fill="#dcdcaa" fill-opacity="0.2"/>
<rect x="57" y="517" width="4" height="1" fill="#d4d4d4" fill-opacity="0.42"/><rect x="57" y="518" width="4" height="1" fill="#d4d4d4" fill-opacity="0.2"/>
<rect x="62" y="517" width="6" height="1" fill="#9cdcfe" fill-opacity="0.42"/><rect x="62" y="518" width="6" height="1" fill="#9cdcfe" fill-opacity="0.2"/>
<rect x="73" y="517" width="5" height="1" fill="#9cdcfe" fill-opacity="0.42"/><rect x="73" y="518" width="5" height="1" fill="#9cdcfe" fill-opacity="0.2"/>
<rect x="80" y="517" width="6" height="1" fill="#9cdcfe" fill-opacity="0.42"/><rect x="80" y="518" width="6" height="1" fill="#9cdcfe" fill-opacity="0.2"/>
<rect x="16" y="519" width="3" height="1" fill="#c586c0" fill-opacity="0.42"/><rect x="16" y="520" width="3" height="1" fill="#c586c0" fill-opacity="0.2"/>
<rect x="16" y="521" width="7" height="1" fill="#d4d4d4" fill-opacity="0.42"/><rect x="16" y="522" width="7" height="1" fill="#d4d4d4" fill-opacity="0.2"/>
<rect x="24" y="521" width="9" height="1" fill="#dcdcaa" fill-opacity="0.42"/><rect x="24" y="522" width="9" height="1" fill="#dcdcaa" fill-opacity="0.2"/>
<rect x="16" y="523" width="2" height="1" fill="#c586c0" fill-opacity="0.42"/><rect x="16" y="524" width="2" height="1" fill="#c586c0" fill-opacity="0.2"/>
<rect x="19" y="523" width="19" height="1" fill="#d4d4d4" fill-opacity="0.42"/><rect x="19" y="524" width="19" height="1" fill="#d4d4d4" fill-opacity="0.2"/>
<rect x="41" y="523" width="4" height="1" fill="#9cdcfe" fill-opacity="0.42"/><rect x="41" y="524" width="4" height="1" fill="#9cdcfe" fill-opacity="0.2"/>
<rect x="46" y="523" width="4" height="1" fill="#c586c0" fill-opacity="0.42"/><rect x="46" y="524" width="4" height="1" fill="#c586c0" fill-opacity="0.2"/>
<rect x="20" y="525" width="3" height="1" fill="#d4d4d4" fill-opacity="0.42"/><rect x="20" y="526" width="3" height="1" fill="#d4d4d4" fill-opacity="0.2"/>
<rect x="24" y="525" width="17" height="1" fill="#dcdcaa" fill-opacity="0.42"/><rect x="24" y="526" width="17" height="1" fill="#dcdcaa" fill-opacity="0.2"/>
<rect x="41" y="525" width="26" height="1" fill="#ce9178" fill-opacity="0.42"/><rect x="41" y="526" width="26" height="1" fill="#ce9178" fill-opacity="0.2"/>
<rect x="20" y="527" width="7" height="1" fill="#d4d4d4" fill-opacity="0.42"/><rect x="20" y="528" width="7" height="1" fill="#d4d4d4" fill-opacity="0.2"/>
<rect x="28" y="527" width="11" height="1" fill="#dcdcaa" fill-opacity="0.42"/><rect x="28" y="528" width="11" height="1" fill="#dcdcaa" fill-opacity="0.2"/>
<rect x="40" y="527" width="11" height="1" fill="#9cdcfe" fill-opacity="0.42"/><rect x="40" y="528" width="11" height="1" fill="#9cdcfe" fill-opacity="0.2"/>
<rect x="20" y="529" width="38" height="1" fill="#dcdcaa" fill-opacity="0.42"/><rect x="20" y="530" width="38" height="1" fill="#dcdcaa" fill-opacity="0.2"/>
<rect x="59" y="529" width="4" height="1" fill="#d4d4d4" fill-opacity="0.42"/><rect x="59" y="530" width="4" height="1" fill="#d4d4d4" fill-opacity="0.2"/>
<rect x="64" y="529" width="6" height="1" fill="#9cdcfe" fill-opacity="0.42"/><rect x="64" y="530" width="6" height="1" fill="#9cdcfe" fill-opacity="0.2"/>
<rect x="75" y="529" width="5" height="1" fill="#9cdcfe" fill-opacity="0.42"/><rect x="75" y="530" width="5" height="1" fill="#9cdcfe" fill-opacity="0.2"/>
<rect x="16" y="531" width="3" height="1" fill="#c586c0" fill-opacity="0.42"/><rect x="16" y="532" width="3" height="1" fill="#c586c0" fill-opacity="0.2"/>
<rect x="12" y="533" width="3" height="1" fill="#c586c0" fill-opacity="0.42"/><rect x="12" y="534" width="3" height="1" fill="#c586c0" fill-opacity="0.2"/>
<rect x="12" y="535" width="7" height="1" fill="#d4d4d4" fill-opacity="0.42"/><rect x="12" y="536" width="7" height="1" fill="#d4d4d4" fill-opacity="0.2"/>
<rect x="20" y="535" width="9" height="1" fill="#dcdcaa" fill-opacity="0.42"/><rect x="20" y="536" width="9" height="1" fill="#dcdcaa" fill-opacity="0.2"/>
<rect x="12" y="537" width="2" height="1" fill="#c586c0" fill-opacity="0.42"/><rect x="12" y="538" width="2" height="1" fill="#c586c0" fill-opacity="0.2"/>
<rect x="15" y="537" width="10" height="1" fill="#d4d4d4" fill-opacity="0.42"/><rect x="15" y="538" width="10" height="1" fill="#d4d4d4" fill-opacity="0.2"/>
<rect x="26" y="537" width="1" height="1" fill="#d4d4d4" fill-opacity="0.42"/><rect x="26" y="538" width="1" height="1" fill="#d4d4d4" fill-opacity="0.2"/>
<rect x="28" y="537" width="4" height="1" fill="#c586c0" fill-opacity="0.42"/><rect x="28" y="538" width="4" height="1" fill="#c586c0" fill-opacity="0.2"/>
<rect x="16" y="539" width="2" height="1" fill="#c586c0" fill-opacity="0.42"/><rect x="16" y="540" width="2" height="1" fill="#c586c0" fill-opacity="0.2"/>
<rect x="19" y="539" width="19" height="1" fill="#d4d4d4" fill-opacity="0.42"/><rect x="19" y="540" width="19" height="1" fill="#d4d4d4" fill-opacity="0.2"/>
<rect x="41" y="539" width="4" height="1" fill="#9cdcfe" fill-opacity="0.42"/><rect x="41" y="540" width="4" height="1" fill="#9cdcfe" fill-opacity="0.2"/>
<rect x="46" y="539" width="4" height="1" fill="#c586c0" fill-opacity="0.42"/><rect x="46" y="540" width="4" height="1" fill="#c586c0" fill-opacity="0.2"/>
<rect x="20" y="541" width="3" height="1" fill="#d4d4d4" fill-opacity="0.42"/><rect x="20" y="542" width="3" height="1" fill="#d4d4d4" fill-opacity="0.2"/>
<rect x="24" y="541" width="17" height="1" fill="#dcdcaa" fill-opacity="0.42"/><rect x="24" y="542" width="17" height="1" fill="#dcdcaa" fill-opacity="0.2"/>
<rect x="41" y="541" width="14" height="1" fill="#ce9178" fill-opacity="0.42"/><rect x="41" y="542" width="14" height="1" fill="#ce9178" fill-opacity="0.2"/>
<rect x="20" y="543" width="7" height="1" fill="#d4d4d4" fill-opacity="0.42"/><rect x="20" y="544" width="7" height="1" fill="#d4d4d4" fill-opacity="0.2"/>
<rect x="28" y="543" width="11" height="1" fill="#dcdcaa" fill-opacity="0.42"/><rect x="28" y="544" width="11" height="1" fill="#dcdcaa" fill-opacity="0.2"/>
<rect x="40" y="543" width="11" height="1" fill="#9cdcfe" fill-opacity="0.42"/><rect x="40" y="544" width="11" height="1" fill="#9cdcfe" fill-opacity="0.2"/>
<rect x="20" y="545" width="36" height="1" fill="#dcdcaa" fill-opacity="0.42"/><rect x="20" y="546" width="36" height="1" fill="#dcdcaa" fill-opacity="0.2"/>
<rect x="57" y="545" width="4" height="1" fill="#d4d4d4" fill-opacity="0.42"/><rect x="57" y="546" width="4" height="1" fill="#d4d4d4" fill-opacity="0.2"/>
<rect x="62" y="545" width="6" height="1" fill="#9cdcfe" fill-opacity="0.42"/><rect x="62" y="546" width="6" height="1" fill="#9cdcfe" fill-opacity="0.2"/>
<rect x="73" y="545" width="5" height="1" fill="#9cdcfe" fill-opacity="0.42"/><rect x="73" y="546" width="5" height="1" fill="#9cdcfe" fill-opacity="0.2"/>
<rect x="80" y="545" width="6" height="1" fill="#9cdcfe" fill-opacity="0.42"/><rect x="80" y="546" width="6" height="1" fill="#9cdcfe" fill-opacity="0.2"/>
<rect x="16" y="547" width="3" height="1" fill="#c586c0" fill-opacity="0.42"/><rect x="16" y="548" width="3" height="1" fill="#c586c0" fill-opacity="0.2"/>
<rect x="16" y="549" width="7" height="1" fill="#d4d4d4" fill-opacity="0.42"/><rect x="16" y="550" width="7" height="1" fill="#d4d4d4" fill-opacity="0.2"/>
<rect x="24" y="549" width="9" height="1" fill="#dcdcaa" fill-opacity="0.42"/><rect x="24" y="550" width="9" height="1" fill="#dcdcaa" fill-opacity="0.2"/>
<rect x="16" y="551" width="2" height="1" fill="#c586c0" fill-opacity="0.42"/><rect x="16" y="552" width="2" height="1" fill="#c586c0" fill-opacity="0.2"/>
<rect x="19" y="551" width="19" height="1" fill="#d4d4d4" fill-opacity="0.42"/><rect x="19" y="552" width="19" height="1" fill="#d4d4d4" fill-opacity="0.2"/>
<rect x="41" y="551" width="4" height="1" fill="#9cdcfe" fill-opacity="0.42"/><rect x="41" y="552" width="4" height="1" fill="#9cdcfe" fill-opacity="0.2"/>
<rect x="46" y="551" width="4" height="1" fill="#c586c0" fill-opacity="0.42"/><rect x="46" y="552" width="4" height="1" fill="#c586c0" fill-opacity="0.2"/>
<rect x="20" y="553" width="3" height="1" fill="#d4d4d4" fill-opacity="0.42"/><rect x="20" y="554" width="3" height="1" fill="#d4d4d4" fill-opacity="0.2"/>
<rect x="24" y="553" width="17" height="1" fill="#dcdcaa" fill-opacity="0.42"/><rect x="24" y="554" width="17" height="1" fill="#dcdcaa" fill-opacity="0.2"/>
<rect x="41" y="553" width="15" height="1" fill="#ce9178" fill-opacity="0.42"/><rect x="41" y="554" width="15" height="1" fill="#ce9178" fill-opacity="0.2"/>
<rect x="20" y="555" width="7" height="1" fill="#d4d4d4" fill-opacity="0.42"/><rect x="20" y="556" width="7" height="1" fill="#d4d4d4" fill-opacity="0.2"/>
<rect x="28" y="555" width="11" height="1" fill="#dcdcaa" fill-opacity="0.42"/><rect x="28" y="556" width="11" height="1" fill="#dcdcaa" fill-opacity="0.2"/>
<rect x="40" y="555" width="11" height="1" fill="#9cdcfe" fill-opacity="0.42"/><rect x="40" y="556" width="11" height="1" fill="#9cdcfe" fill-opacity="0.2"/>
<rect x="20" y="557" width="38" height="1" fill="#dcdcaa" fill-opacity="0.42"/><rect x="20" y="558" width="38" height="1" fill="#dcdcaa" fill-opacity="0.2"/>
<rect x="59" y="557" width="4" height="1" fill="#d4d4d4" fill-opacity="0.42"/><rect x="59" y="558" width="4" height="1" fill="#d4d4d4" fill-opacity="0.2"/>
<rect x="64" y="557" width="6" height="1" fill="#9cdcfe" fill-opacity="0.42"/><rect x="64" y="558" width="6" height="1" fill="#9cdcfe" fill-opacity="0.2"/>
<rect x="74" y="557" width="5" height="1" fill="#9cdcfe" fill-opacity="0.42"/><rect x="74" y="558" width="5" height="1" fill="#9cdcfe" fill-opacity="0.2"/>
<rect x="16" y="559" width="3" height="1" fill="#c586c0" fill-opacity="0.42"/><rect x="16" y="560" width="3" height="1" fill="#c586c0" fill-opacity="0.2"/>
<rect x="12" y="561" width="3" height="1" fill="#c586c0" fill-opacity="0.42"/><rect x="12" y="562" width="3" height="1" fill="#c586c0" fill-opacity="0.2"/>
<rect x="12" y="563" width="7" height="1" fill="#d4d4d4" fill-opacity="0.42"/><rect x="12" y="564" width="7" height="1" fill="#d4d4d4" fill-opacity="0.2"/>
<rect x="20" y="563" width="9" height="1" fill="#dcdcaa" fill-opacity="0.42"/><rect x="20" y="564" width="9" height="1" fill="#dcdcaa" fill-opacity="0.2"/>
<rect x="12" y="565" width="2" height="1" fill="#c586c0" fill-opacity="0.42"/><rect x="12" y="566" width="2" height="1" fill="#c586c0" fill-opacity="0.2"/>
<rect x="15" y="565" width="10" height="1" fill="#d4d4d4" fill-opacity="0.42"/><rect x="15" y="566" width="10" height="1" fill="#d4d4d4" fill-opacity="0.2"/>
<rect x="26" y="565" width="4" height="1" fill="#c586c0" fill-opacity="0.42"/><rect x="26" y="566" width="4" height="1" fill="#c586c0" fill-opacity="0.2"/>
<rect x="16" y="567" width="2" height="1" fill="#c586c0" fill-opacity="0.42"/><rect x="16" y="568" width="2" height="1" fill="#c586c0" fill-opacity="0.2"/>
<rect x="19" y="567" width="19" height="1" fill="#d4d4d4" fill-opacity="0.42"/><rect x="19" y="568" width="19" height="1" fill="#d4d4d4" fill-opacity="0.2"/>
<rect x="41" y="567" width="4" height="1" fill="#9cdcfe" fill-opacity="0.42"/><rect x="41" y="568" width="4" height="1" fill="#9cdcfe" fill-opacity="0.2"/>
<rect x="46" y="567" width="4" height="1" fill="#c586c0" fill-opacity="0.42"/><rect x="46" y="568" width="4" height="1" fill="#c586c0" fill-opacity="0.2"/>
<rect x="20" y="569" width="3" height="1" fill="#d4d4d4" fill-opacity="0.42"/><rect x="20" y="570" width="3" height="1" fill="#d4d4d4" fill-opacity="0.2"/>
<rect x="24" y="569" width="17" height="1" fill="#dcdcaa" fill-opacity="0.42"/><rect x="24" y="570" width="17" height="1" fill="#dcdcaa" fill-opacity="0.2"/>
<rect x="41" y="569" width="15" height="1" fill="#ce9178" fill-opacity="0.42"/><rect x="41" y="570" width="15" height="1" fill="#ce9178" fill-opacity="0.2"/>
<rect x="20" y="571" width="7" height="1" fill="#d4d4d4" fill-opacity="0.42"/><rect x="20" y="572" width="7" height="1" fill="#d4d4d4" fill-opacity="0.2"/>
<rect x="28" y="571" width="11" height="1" fill="#dcdcaa" fill-opacity="0.42"/><rect x="28" y="572" width="11" height="1" fill="#dcdcaa" fill-opacity="0.2"/>
<rect x="40" y="571" width="11" height="1" fill="#9cdcfe" fill-opacity="0.42"/><rect x="40" y="572" width="11" height="1" fill="#9cdcfe" fill-opacity="0.2"/>
<rect x="20" y="573" width="36" height="1" fill="#dcdcaa" fill-opacity="0.42"/><rect x="20" y="574" width="36" height="1" fill="#dcdcaa" fill-opacity="0.2"/>
<rect x="57" y="573" width="4" height="1" fill="#d4d4d4" fill-opacity="0.42"/><rect x="57" y="574" width="4" height="1" fill="#d4d4d4" fill-opacity="0.2"/>
<rect x="62" y="573" width="6" height="1" fill="#9cdcfe" fill-opacity="0.42"/><rect x="62" y="574" width="6" height="1" fill="#9cdcfe" fill-opacity="0.2"/>
<rect x="73" y="573" width="5" height="1" fill="#9cdcfe" fill-opacity="0.42"/><rect x="73" y="574" width="5" height="1" fill="#9cdcfe" fill-opacity="0.2"/>
<rect x="80" y="573" width="6" height="1" fill="#9cdcfe" fill-opacity="0.42"/><rect x="80" y="574" width="6" height="1" fill="#9cdcfe" fill-opacity="0.2"/>
<rect x="16" y="575" width="3" height="1" fill="#c586c0" fill-opacity="0.42"/><rect x="16" y="576" width="3" height="1" fill="#c586c0" fill-opacity="0.2"/>
<rect x="16" y="577" width="7" height="1" fill="#d4d4d4" fill-opacity="0.42"/><rect x="16" y="578" width="7" height="1" fill="#d4d4d4" fill-opacity="0.2"/>
<rect x="24" y="577" width="9" height="1" fill="#dcdcaa" fill-opacity="0.42"/><rect x="24" y="578" width="9" height="1" fill="#dcdcaa" fill-opacity="0.2"/>
<rect x="16" y="579" width="2" height="1" fill="#c586c0" fill-opacity="0.42"/><rect x="16" y="580" width="2" height="1" fill="#c586c0" fill-opacity="0.2"/>
<rect x="19" y="579" width="19" height="1" fill="#d4d4d4" fill-opacity="0.42"/><rect x="19" y="580" width="19" height="1" fill="#d4d4d4" fill-opacity="0.2"/>
<rect x="41" y="579" width="4" height="1" fill="#9cdcfe" fill-opacity="0.42"/><rect x="41" y="580" width="4" height="1" fill="#9cdcfe" fill-opacity="0.2"/>
<rect x="46" y="579" width="4" height="1" fill="#c586c0" fill-opacity="0.42"/><rect x="46" y="580" width="4" height="1" fill="#c586c0" fill-opacity="0.2"/>
<rect x="20" y="581" width="3" height="1" fill="#d4d4d4" fill-opacity="0.42"/><rect x="20" y="582" width="3" height="1" fill="#d4d4d4" fill-opacity="0.2"/>
<rect x="24" y="581" width="17" height="1" fill="#dcdcaa" fill-opacity="0.42"/><rect x="24" y="582" width="17" height="1" fill="#dcdcaa" fill-opacity="0.2"/>
<rect x="41" y="581" width="16" height="1" fill="#ce9178" fill-opacity="0.42"/><rect x="41" y="582" width="16" height="1" fill="#ce9178" fill-opacity="0.2"/>
<rect x="20" y="583" width="7" height="1" fill="#d4d4d4" fill-opacity="0.42"/><rect x="20" y="584" width="7" height="1" fill="#d4d4d4" fill-opacity="0.2"/>
<rect x="28" y="583" width="11" height="1" fill="#dcdcaa" fill-opacity="0.42"/><rect x="28" y="584" width="11" height="1" fill="#dcdcaa" fill-opacity="0.2"/>
<rect x="40" y="583" width="11" height="1" fill="#9cdcfe" fill-opacity="0.42"/><rect x="40" y="584" width="11" height="1" fill="#9cdcfe" fill-opacity="0.2"/>
<rect x="20" y="585" width="38" height="1" fill="#dcdcaa" fill-opacity="0.42"/><rect x="20" y="586" width="38" height="1" fill="#dcdcaa" fill-opacity="0.2"/>
<rect x="59" y="585" width="4" height="1" fill="#d4d4d4" fill-opacity="0.42"/><rect x="59" y="586" width="4" height="1" fill="#d4d4d4" fill-opacity="0.2"/>
<rect x="64" y="585" width="6" height="1" fill="#9cdcfe" fill-opacity="0.42"/><rect x="64" y="586" width="6" height="1" fill="#9cdcfe" fill-opacity="0.2"/>
<rect x="74" y="585" width="5" height="1" fill="#9cdcfe" fill-opacity="0.42"/><rect x="74" y="586" width="5" height="1" fill="#9cdcfe" fill-opacity="0.2"/>
<rect x="16" y="587" width="3" height="1" fill="#c586c0" fill-opacity="0.42"/><rect x="16" y="588" width="3" height="1" fill="#c586c0" fill-opacity="0.2"/>
<rect x="12" y="589" width="3" height="1" fill="#c586c0" fill-opacity="0.42"/><rect x="12" y="590" width="3" height="1" fill="#c586c0" fill-opacity="0.2"/>
<rect x="12" y="591" width="7" height="1" fill="#d4d4d4" fill-opacity="0.42"/><rect x="12" y="592" width="7" height="1" fill="#d4d4d4" fill-opacity="0.2"/>
<rect x="20" y="591" width="9" height="1" fill="#dcdcaa" fill-opacity="0.42"/><rect x="20" y="592" width="9" height="1" fill="#dcdcaa" fill-opacity="0.2"/>
<rect x="12" y="593" width="3" height="1" fill="#d4d4d4" fill-opacity="0.42"/><rect x="12" y="594" width="3" height="1" fill="#d4d4d4" fill-opacity="0.2"/>
<rect x="16" y="593" width="16" height="1" fill="#dcdcaa" fill-opacity="0.42"/><rect x="16" y="594" width="16" height="1" fill="#dcdcaa" fill-opacity="0.2"/>
<rect x="33" y="593" width="44" height="1" fill="#ce9178" fill-opacity="0.42"/><rect x="33" y="594" width="44" height="1" fill="#ce9178" fill-opacity="0.2"/>
<rect x="12" y="595" width="7" height="1" fill="#d4d4d4" fill-opacity="0.42"/><rect x="12" y="596" width="7" height="1" fill="#d4d4d4" fill-opacity="0.2"/>
<rect x="20" y="595" width="11" height="1" fill="#dcdcaa" fill-opacity="0.42"/><rect x="20" y="596" width="11" height="1" fill="#dcdcaa" fill-opacity="0.2"/>
<rect x="32" y="595" width="10" height="1" fill="#9cdcfe" fill-opacity="0.42"/><rect x="32" y="596" width="10" height="1" fill="#9cdcfe" fill-opacity="0.2"/>
<rect x="12" y="597" width="2" height="1" fill="#c586c0" fill-opacity="0.42"/><rect x="12" y="598" width="2" height="1" fill="#c586c0" fill-opacity="0.2"/>
<rect x="15" y="597" width="13" height="1" fill="#d4d4d4" fill-opacity="0.42"/><rect x="15" y="598" width="13" height="1" fill="#d4d4d4" fill-opacity="0.2"/>
<rect x="29" y="597" width="4" height="1" fill="#d4d4d4" fill-opacity="0.42"/><rect x="29" y="598" width="4" height="1" fill="#d4d4d4" fill-opacity="0.2"/>
<rect x="37" y="597" width="4" height="1" fill="#9cdcfe" fill-opacity="0.42"/><rect x="37" y="598" width="4" height="1" fill="#9cdcfe" fill-opacity="0.2"/>
<rect x="42" y="597" width="4" height="1" fill="#c586c0" fill-opacity="0.42"/><rect x="42" y="598" width="4" height="1" fill="#c586c0" fill-opacity="0.2"/>
<rect x="16" y="599" width="5" height="1" fill="#c586c0" fill-opacity="0.42"/><rect x="16" y="600" width="5" height="1" fill="#c586c0" fill-opacity="0.2"/>
<rect x="22" y="599" width="7" height="1" fill="#d4d4d4" fill-opacity="0.42"/><rect x="22" y="600" width="7" height="1" fill="#d4d4d4" fill-opacity="0.2"/>
<rect x="30" y="599" width="2" height="1" fill="#d4d4d4" fill-opacity="0.42"/><rect x="30" y="600" width="2" height="1" fill="#d4d4d4" fill-opacity="0.2"/>
<rect x="33" y="599" width="18" height="1" fill="#dcdcaa" fill-opacity="0.42"/><rect x="33" y="600" width="18" height="1" fill="#dcdcaa" fill-opacity="0.2"/>
<rect x="51" y="599" width="4" height="1" fill="#d4d4d4" fill-opacity="0.42"/><rect x="51" y="600" width="4" height="1" fill="#d4d4d4" fill-opacity="0.2"/>
<rect x="57" y="599" width="5" height="1" fill="#9cdcfe" fill-opacity="0.42"/><rect x="57" y="600" width="5" height="1" fill="#9cdcfe" fill-opacity="0.2"/>
<rect x="63" y="599" width="1" height="1" fill="#d4d4d4" fill-opacity="0.42"/><rect x="63" y="600" width="1" height="1" fill="#d4d4d4" fill-opacity="0.2"/>
<rect x="16" y="601" width="2" height="1" fill="#c586c0" fill-opacity="0.42"/><rect x="16" y="602" width="2" height="1" fill="#c586c0" fill-opacity="0.2"/>
<rect x="19" y="601" width="6" height="1" fill="#d4d4d4" fill-opacity="0.42"/><rect x="19" y="602" width="6" height="1" fill="#d4d4d4" fill-opacity="0.2"/>
<rect x="27" y="601" width="4" height="1" fill="#c586c0" fill-opacity="0.42"/><rect x="27" y="602" width="4" height="1" fill="#c586c0" fill-opacity="0.2"/>
<rect x="20" y="603" width="5" height="1" fill="#c586c0" fill-opacity="0.42"/><rect x="20" y="604" width="5" height="1" fill="#c586c0" fill-opacity="0.2"/>
<rect x="26" y="603" width="8" height="1" fill="#d4d4d4" fill-opacity="0.42"/><rect x="26" y="604" width="8" height="1" fill="#d4d4d4" fill-opacity="0.2"/>
<rect x="35" y="603" width="2" height="1" fill="#d4d4d4" fill-opacity="0.42"/><rect x="35" y="604" width="2" height="1" fill="#d4d4d4" fill-opacity="0.2"/>
<rect x="37" y="603" width="23" height="1" fill="#dcdcaa" fill-opacity="0.42"/><rect x="37" y="604" width="23" height="1" fill="#dcdcaa" fill-opacity="0.2"/>
<rect x="61" y="603" width="10" height="1" fill="#d4d4d4" fill-opacity="0.42"/><rect x="61" y="604" width="10" height="1" fill="#d4d4d4" fill-opacity="0.2"/>
<rect x="8" y="605" width="112" height="2" fill="#264f78"/>
<rect x="20" y="605" width="26" height="1" fill="#d4d4d4" fill-opacity="0.32"/><rect x="20" y="606" width="26" height="1" fill="#d4d4d4" fill-opacity="0.16"/>
<rect x="47" y="605" width="12" height="2" fill="#e8940f"/>
<rect x="60" y="605" width="8" height="1" fill="#d4d4d4" fill-opacity="0.32"/><rect x="60" y="606" width="8" height="1" fill="#d4d4d4" fill-opacity="0.16"/>
<rect x="71" y="605" width="15" height="1" fill="#9cdcfe" fill-opacity="0.32"/><rect x="71" y="606" width="15" height="1" fill="#9cdcfe" fill-opacity="0.16"/>
<rect x="24" y="607" width="2" height="1" fill="#c586c0" fill-opacity="0.42"/><rect x="24" y="608" width="2" height="1" fill="#c586c0" fill-opacity="0.2"/>
<rect x="27" y="607" width="7" height="1" fill="#d4d4d4" fill-opacity="0.42"/><rect x="27" y="608" width="7" height="1" fill="#d4d4d4" fill-opacity="0.2"/>
<rect x="35" y="607" width="2" height="1" fill="#c586c0" fill-opacity="0.42"/><rect x="35" y="608" width="2" height="1" fill="#c586c0" fill-opacity="0.2"/>
<rect x="28" y="609" width="3" height="1" fill="#d4d4d4" fill-opacity="0.42"/><rect x="28" y="610" width="3" height="1" fill="#d4d4d4" fill-opacity="0.2"/>
<rect x="32" y="609" width="17" height="1" fill="#dcdcaa" fill-opacity="0.42"/><rect x="32" y="610" width="17" height="1" fill="#dcdcaa" fill-opacity="0.2"/>
<rect x="50" y="609" width="49" height="1" fill="#ce9178" fill-opacity="0.42"/><rect x="50" y="610" width="49" height="1" fill="#ce9178" fill-opacity="0.2"/>
<rect x="99" y="609" width="2" height="1" fill="#d4d4d4" fill-opacity="0.42"/><rect x="99" y="610" width="2" height="1" fill="#d4d4d4" fill-opacity="0.2"/>
<rect x="101" y="609" width="6" height="1" fill="#9cdcfe" fill-opacity="0.42"/><rect x="101" y="610" width="6" height="1" fill="#9cdcfe" fill-opacity="0.2"/>
<rect x="108" y="609" width="4" height="1" fill="#9cdcfe" fill-opacity="0.42"/><rect x="108" y="610" width="4" height="1" fill="#9cdcfe" fill-opacity="0.2"/>
<rect x="114" y="609" width="2" height="1" fill="#d4d4d4" fill-opacity="0.42"/><rect x="114" y="610" width="2" height="1" fill="#d4d4d4" fill-opacity="0.2"/>
<rect x="28" y="611" width="13" height="1" fill="#dcdcaa" fill-opacity="0.42"/><rect x="28" y="612" width="13" height="1" fill="#dcdcaa" fill-opacity="0.2"/>
<rect x="42" y="611" width="8" height="1" fill="#d4d4d4" fill-opacity="0.42"/><rect x="42" y="612" width="8" height="1" fill="#d4d4d4" fill-opacity="0.2"/>
<rect x="24" y="613" width="4" height="1" fill="#c586c0" fill-opacity="0.42"/><rect x="24" y="614" width="4" height="1" fill="#c586c0" fill-opacity="0.2"/>
<rect x="28" y="615" width="3" height="1" fill="#d4d4d4" fill-opacity="0.42"/><rect x="28" y="616" width="3" height="1" fill="#d4d4d4" fill-opacity="0.2"/>
<rect x="32" y="615" width="17" height="1" fill="#dcdcaa" fill-opacity="0.42"/><rect x="32" y="616" width="17" height="1" fill="#dcdcaa" fill-opacity="0.2"/>
<rect x="50" y="615" width="32" height="1" fill="#ce9178" fill-opacity="0.42"/><rect x="50" y="616" width="32" height="1" fill="#ce9178" fill-opacity="0.2"/>
<rect x="83" y="615" width="1" height="1" fill="#d4d4d4" fill-opacity="0.42"/><rect x="83" y="616" width="1" height="1" fill="#d4d4d4" fill-opacity="0.2"/>
<rect x="84" y="615" width="5" height="1" fill="#9cdcfe" fill-opacity="0.42"/><rect x="84" y="616" width="5" height="1" fill="#9cdcfe" fill-opacity="0.2"/>
<rect x="91" y="615" width="5" height="1" fill="#9cdcfe" fill-opacity="0.42"/><rect x="91" y="616" width="5" height="1" fill="#9cdcfe" fill-opacity="0.2"/>
<rect x="97" y="615" width="2" height="1" fill="#d4d4d4" fill-opacity="0.42"/><rect x="97" y="616" width="2" height="1" fill="#d4d4d4" fill-opacity="0.2"/>
<rect x="28" y="617" width="13" height="1" fill="#dcdcaa" fill-opacity="0.42"/><rect x="28" y="618" width="13" height="1" fill="#dcdcaa" fill-opacity="0.2"/>
<rect x="42" y="617" width="8" height="1" fill="#d4d4d4" fill-opacity="0.42"/><rect x="42" y="618" width="8" height="1" fill="#d4d4d4" fill-opacity="0.2"/>
<rect x="24" y="619" width="3" height="1" fill="#c586c0" fill-opacity="0.42"/><rect x="24" y="620" width="3" height="1" fill="#c586c0" fill-opacity="0.2"/>
<rect x="20" y="621" width="4" height="1" fill="#c586c0" fill-opacity="0.42"/><rect x="20" y="622" width="4" height="1" fill="#c586c0" fill-opacity="0.2"/>
<rect x="25" y="621" width="9" height="1" fill="#d4d4d4" fill-opacity="0.42"/><rect x="25" y="622" width="9" height="1" fill="#d4d4d4" fill-opacity="0.2"/>
<rect x="16" y="623" width="3" height="1" fill="#c586c0" fill-opacity="0.42"/><rect x="16" y="624" width="3" height="1" fill="#c586c0" fill-opacity="0.2"/>
<rect x="8" y="625" width="112" height="2" fill="#264f78"/>
<rect x="16" y="625" width="19" height="1" fill="#d4d4d4" fill-opacity="0.32"/><rect x="16" y="626" width="19" height="1" fill="#d4d4d4" fill-opacity="0.16"/>
<rect x="36" y="625" width="12" height="2" fill="#e8940f"/>
<rect x="49" y="625" width="13" height="1" fill="#d4d4d4" fill-opacity="0.32"/><rect x="49" y="626" width="13" height="1" fill="#d4d4d4" fill-opacity="0.16"/>
<rect x="12" y="627" width="3" height="1" fill="#c586c0" fill-opacity="0.42"/><rect x="12" y="628" width="3" height="1" fill="#c586c0" fill-opacity="0.2"/>
<rect x="8" y="629" width="3" height="1" fill="#c586c0" fill-opacity="0.42"/><rect x="8" y="630" width="3" height="1" fill="#c586c0" fill-opacity="0.2"/>
<rect x="8" y="633" width="8" height="1" fill="#c586c0" fill-opacity="0.42"/><rect x="8" y="634" width="8" height="1" fill="#c586c0" fill-opacity="0.2"/>
<rect x="17" y="633" width="14" height="1" fill="#dcdcaa" fill-opacity="0.42"/><rect x="17" y="634" width="14" height="1" fill="#dcdcaa" fill-opacity="0.2"/>
<rect x="12" y="635" width="5" height="1" fill="#c586c0" fill-opacity="0.42"/><rect x="12" y="636" width="5" height="1" fill="#c586c0" fill-opacity="0.2"/>
<rect x="18" y="635" width="10" height="1" fill="#d4d4d4" fill-opacity="0.42"/><rect x="18" y="636" width="10" height="1" fill="#d4d4d4" fill-opacity="0.2"/>
<rect x="29" y="635" width="1" height="1" fill="#d4d4d4" fill-opacity="0.42"/><rect x="29" y="636" width="1" height="1" fill="#d4d4d4" fill-opacity="0.2"/>
<rect x="31" y="635" width="3" height="1" fill="#9cdcfe" fill-opacity="0.42"/><rect x="31" y="636" width="3" height="1" fill="#9cdcfe" fill-opacity="0.2"/>
<rect x="12" y="637" width="10" height="1" fill="#d4d4d4" fill-opacity="0.42"/><rect x="12" y="638" width="10" height="1" fill="#d4d4d4" fill-opacity="0.2"/>
<rect x="23" y="637" width="2" height="1" fill="#d4d4d4" fill-opacity="0.42"/><rect x="23" y="638" width="2" height="1" fill="#d4d4d4" fill-opacity="0.2"/>
<rect x="23" y="637" width="4" height="1" fill="#9cdcfe" fill-opacity="0.42"/><rect x="23" y="638" width="4" height="1" fill="#9cdcfe" fill-opacity="0.2"/>
<rect x="12" y="641" width="3" height="1" fill="#c586c0" fill-opacity="0.42"/><rect x="12" y="642" width="3" height="1" fill="#c586c0" fill-opacity="0.2"/>
<rect x="16" y="641" width="7" height="1" fill="#d4d4d4" fill-opacity="0.42"/><rect x="16" y="642" width="7" height="1" fill="#d4d4d4" fill-opacity="0.2"/>
<rect x="24" y="641" width="25" height="1" fill="#dcdcaa" fill-opacity="0.42"/><rect x="24" y="642" width="25" height="1" fill="#dcdcaa" fill-opacity="0.2"/>
<rect x="50" y="641" width="9" height="1" fill="#9cdcfe" fill-opacity="0.42"/><rect x="50" y="642" width="9" height="1" fill="#9cdcfe" fill-opacity="0.2"/>
<rect x="61" y="641" width="2" height="1" fill="#c586c0" fill-opacity="0.42"/><rect x="61" y="642" width="2" height="1" fill="#c586c0" fill-opacity="0.2"/>
<rect x="16" y="643" width="51" height="1" fill="#6a9955" fill-opacity="0.42"/><rect x="16" y="644" width="51" height="1" fill="#6a9955" fill-opacity="0.2"/>
<rect x="16" y="645" width="5" height="1" fill="#c586c0" fill-opacity="0.42"/><rect x="16" y="646" width="5" height="1" fill="#c586c0" fill-opacity="0.2"/>
<rect x="22" y="645" width="6" height="1" fill="#d4d4d4" fill-opacity="0.42"/><rect x="22" y="646" width="6" height="1" fill="#d4d4d4" fill-opacity="0.2"/>
<rect x="28" y="645" width="8" height="1" fill="#d4d4d4" fill-opacity="0.42"/><rect x="28" y="646" width="8" height="1" fill="#d4d4d4" fill-opacity="0.2"/>
<rect x="37" y="645" width="19" height="1" fill="#9cdcfe" fill-opacity="0.42"/><rect x="37" y="646" width="19" height="1" fill="#9cdcfe" fill-opacity="0.2"/>
<rect x="16" y="647" width="14" height="1" fill="#6a9955" fill-opacity="0.42"/><rect x="16" y="648" width="14" height="1" fill="#6a9955" fill-opacity="0.2"/>
<rect x="16" y="651" width="2" height="1" fill="#c586c0" fill-opacity="0.42"/><rect x="16" y="652" width="2" height="1" fill="#c586c0" fill-opacity="0.2"/>
<rect x="19" y="651" width="11" height="1" fill="#d4d4d4" fill-opacity="0.42"/><rect x="19" y="652" width="11" height="1" fill="#d4d4d4" fill-opacity="0.2"/>
<rect x="31" y="651" width="5" height="1" fill="#9cdcfe" fill-opacity="0.42"/><rect x="31" y="652" width="5" height="1" fill="#9cdcfe" fill-opacity="0.2"/>
<rect x="37" y="651" width="4" height="1" fill="#d4d4d4" fill-opacity="0.42"/><rect x="37" y="652" width="4" height="1" fill="#d4d4d4" fill-opacity="0.2"/>
<rect x="41" y="651" width="4" height="1" fill="#c586c0" fill-opacity="0.42"/><rect x="41" y="652" width="4" height="1" fill="#c586c0" fill-opacity="0.2"/>
<rect x="20" y="653" width="6" height="1" fill="#c586c0" fill-opacity="0.42"/><rect x="20" y="654" width="6" height="1" fill="#c586c0" fill-opacity="0.2"/>
<rect x="27" y="653" width="20" height="1" fill="#d4d4d4" fill-opacity="0.42"/><rect x="27" y="654" width="20" height="1" fill="#d4d4d4" fill-opacity="0.2"/>
<rect x="24" y="655" width="6" height="1" fill="#d4d4d4" fill-opacity="0.42"/><rect x="24" y="656" width="6" height="1" fill="#d4d4d4" fill-opacity="0.2"/>
<rect x="33" y="655" width="10" height="1" fill="#dcdcaa" fill-opacity="0.42"/><rect x="33" y="656" width="10" height="1" fill="#dcdcaa" fill-opacity="0.2"/>
<rect x="43" y="655" width="6" height="1" fill="#9cdcfe" fill-opacity="0.42"/><rect x="43" y="656" width="6" height="1" fill="#9cdcfe" fill-opacity="0.2"/>
<rect x="50" y="655" width="35" height="1" fill="#ce9178" fill-opacity="0.42"/><rect x="50" y="656" width="35" height="1" fill="#ce9178" fill-opacity="0.2"/>
<rect x="87" y="655" width="5" height="1" fill="#d4d4d4" fill-opacity="0.42"/><rect x="87" y="656" width="5" height="1" fill="#d4d4d4" fill-opacity="0.2"/>
<rect x="92" y="655" width="5" height="1" fill="#9cdcfe" fill-opacity="0.42"/><rect x="92" y="656" width="5" height="1" fill="#9cdcfe" fill-opacity="0.2"/>
<rect x="97" y="655" width="23" height="1" fill="#dcdcaa" fill-opacity="0.42"/><rect x="97" y="656" width="23" height="1" fill="#dcdcaa" fill-opacity="0.2"/>
<rect x="24" y="657" width="6" height="1" fill="#d4d4d4" fill-opacity="0.42"/><rect x="24" y="658" width="6" height="1" fill="#d4d4d4" fill-opacity="0.2"/>
<rect x="31" y="657" width="1" height="1" fill="#d4d4d4" fill-opacity="0.42"/><rect x="31" y="658" width="1" height="1" fill="#d4d4d4" fill-opacity="0.2"/>
<rect x="33" y="657" width="5" height="1" fill="#9cdcfe" fill-opacity="0.42"/><rect x="33" y="658" width="5" height="1" fill="#9cdcfe" fill-opacity="0.2"/>
<rect x="24" y="659" width="6" height="1" fill="#d4d4d4" fill-opacity="0.42"/><rect x="24" y="660" width="6" height="1" fill="#d4d4d4" fill-opacity="0.2"/>
<rect x="31" y="659" width="6" height="1" fill="#d4d4d4" fill-opacity="0.42"/><rect x="31" y="660" width="6" height="1" fill="#d4d4d4" fill-opacity="0.2"/>
<rect x="24" y="663" width="17" height="1" fill="#6a9955" fill-opacity="0.42"/><rect x="24" y="664" width="17" height="1" fill="#6a9955" fill-opacity="0.2"/>
<rect x="24" y="665" width="5" height="1" fill="#d4d4d4" fill-opacity="0.42"/><rect x="24" y="666" width="5" height="1" fill="#d4d4d4" fill-opacity="0.2"/>
<rect x="30" y="665" width="1" height="1" fill="#d4d4d4" fill-opacity="0.42"/><rect x="30" y="666" width="1" height="1" fill="#d4d4d4" fill-opacity="0.2"/>
<rect x="32" y="665" width="8" height="1" fill="#ce9178" fill-opacity="0.42"/><rect x="32" y="666" width="8" height="1" fill="#ce9178" fill-opacity="0.2"/>
<rect x="24" y="667" width="5" height="1" fill="#d4d4d4" fill-opacity="0.42"/><rect x="24" y="668" width="5" height="1" fill="#d4d4d4" fill-opacity="0.2"/>
<rect x="30" y="667" width="1" height="1" fill="#d4d4d4" fill-opacity="0.42"/><rect x="30" y="668" width="1" height="1" fill="#d4d4d4" fill-opacity="0.2"/>
<rect x="32" y="667" width="2" height="1" fill="#b5cea8" fill-opacity="0.42"/><rect x="32" y="668" width="2" height="1" fill="#b5cea8" fill-opacity="0.2"/>
<rect x="24" y="669" width="5" height="1" fill="#d4d4d4" fill-opacity="0.42"/><rect x="24" y="670" width="5" height="1" fill="#d4d4d4" fill-opacity="0.2"/>
<rect x="30" y="669" width="1" height="1" fill="#d4d4d4" fill-opacity="0.42"/><rect x="30" y="670" width="1" height="1" fill="#d4d4d4" fill-opacity="0.2"/>
<rect x="32" y="669" width="2" height="1" fill="#b5cea8" fill-opacity="0.42"/><rect x="32" y="670" width="2" height="1" fill="#b5cea8" fill-opacity="0.2"/>
<rect x="24" y="671" width="5" height="1" fill="#d4d4d4" fill-opacity="0.42"/><rect x="24" y="672" width="5" height="1" fill="#d4d4d4" fill-opacity="0.2"/>
<rect x="30" y="671" width="1" height="1" fill="#d4d4d4" fill-opacity="0.42"/><rect x="30" y="672" width="1" height="1" fill="#d4d4d4" fill-opacity="0.2"/>
<rect x="32" y="671" width="6" height="1" fill="#9cdcfe" fill-opacity="0.42"/><rect x="32" y="672" width="6" height="1" fill="#9cdcfe" fill-opacity="0.2"/>
<rect x="20" y="673" width="2" height="1" fill="#d4d4d4" fill-opacity="0.42"/><rect x="20" y="674" width="2" height="1" fill="#d4d4d4" fill-opacity="0.2"/>
<rect x="16" y="675" width="3" height="1" fill="#c586c0" fill-opacity="0.42"/><rect x="16" y="676" width="3" height="1" fill="#c586c0" fill-opacity="0.2"/>
<rect x="12" y="677" width="3" height="1" fill="#c586c0" fill-opacity="0.42"/><rect x="12" y="678" width="3" height="1" fill="#c586c0" fill-opacity="0.2"/>
<rect x="12" y="679" width="3" height="1" fill="#c586c0" fill-opacity="0.42"/><rect x="12" y="680" width="3" height="1" fill="#c586c0" fill-opacity="0.2"/>
<rect x="16" y="679" width="5" height="1" fill="#d4d4d4" fill-opacity="0.42"/><rect x="16" y="680" width="5" height="1" fill="#d4d4d4" fill-opacity="0.2"/>
<rect x="23" y="679" width="9" height="1" fill="#d4d4d4" fill-opacity="0.42"/><rect x="23" y="680" width="9" height="1" fill="#d4d4d4" fill-opacity="0.2"/>
<rect x="32" y="679" width="1" height="1" fill="#d4d4d4" fill-opacity="0.42"/><rect x="32" y="680" width="1" height="1" fill="#d4d4d4" fill-opacity="0.2"/>
<rect x="39" y="679" width="2" height="1" fill="#c586c0" fill-opacity="0.42"/><rect x="39" y="680" width="2" height="1" fill="#c586c0" fill-opacity="0.2"/>
<rect x="12" y="681" width="16" height="1" fill="#dcdcaa" fill-opacity="0.42"/><rect x="12" y="682" width="16" height="1" fill="#dcdcaa" fill-opacity="0.2"/>
<rect x="29" y="681" width="17" height="1" fill="#d4d4d4" fill-opacity="0.42"/><rect x="29" y="682" width="17" height="1" fill="#d4d4d4" fill-opacity="0.2"/>
<rect x="12" y="683" width="3" height="1" fill="#c586c0" fill-opacity="0.42"/><rect x="12" y="684" width="3" height="1" fill="#c586c0" fill-opacity="0.2"/>
<rect x="12" y="685" width="4" height="1" fill="#d4d4d4" fill-opacity="0.42"/><rect x="12" y="686" width="4" height="1" fill="#d4d4d4" fill-opacity="0.2"/>
<rect x="16" y="685" width="2" height="1" fill="#9cdcfe" fill-opacity="0.42"/><rect x="16" y="686" width="2" height="1" fill="#9cdcfe" fill-opacity="0.2"/>
<rect x="18" y="685" width="1" height="1" fill="#d4d4d4" fill-opacity="0.42"/><rect x="18" y="686" width="1" height="1" fill="#d4d4d4" fill-opacity="0.2"/>
<rect x="19" y="685" width="4" height="1" fill="#9cdcfe" fill-opacity="0.42"/><rect x="19" y="686" width="4" height="1" fill="#9cdcfe" fill-opacity="0.2"/>
<rect x="23" y="685" width="1" height="1" fill="#d4d4d4" fill-opacity="0.42"/><rect x="23" y="686" width="1" height="1" fill="#d4d4d4" fill-opacity="0.2"/>
<rect x="24" y="685" width="8" height="1" fill="#dcdcaa" fill-opacity="0.42"/><rect x="24" y="686" width="8" height="1" fill="#dcdcaa" fill-opacity="0.2"/>
<rect x="32" y="685" width="2" height="1" fill="#d4d4d4" fill-opacity="0.42"/><rect x="32" y="686" width="2" height="1" fill="#d4d4d4" fill-opacity="0.2"/>
<rect x="12" y="687" width="4" height="1" fill="#d4d4d4" fill-opacity="0.42"/><rect x="12" y="688" width="4" height="1" fill="#d4d4d4" fill-opacity="0.2"/>
<rect x="16" y="687" width="2" height="1" fill="#9cdcfe" fill-opacity="0.42"/><rect x="16" y="688" width="2" height="1" fill="#9cdcfe" fill-opacity="0.2"/>
<rect x="18" y="687" width="1" height="1" fill="#d4d4d4" fill-opacity="0.42"/><rect x="18" y="688" width="1" height="1" fill="#d4d4d4" fill-opacity="0.2"/>
<rect x="19" y="687" width="4" height="1" fill="#9cdcfe" fill-opacity="0.42"/><rect x="19" y="688" width="4" height="1" fill="#9cdcfe" fill-opacity="0.2"/>
<rect x="23" y="687" width="1" height="1" fill="#d4d4d4" fill-opacity="0.42"/><rect x="23" y="688" width="1" height="1" fill="#d4d4d4" fill-opacity="0.2"/>
<rect x="24" y="687" width="4" height="1" fill="#dcdcaa" fill-opacity="0.42"/><rect x="24" y="688" width="4" height="1" fill="#dcdcaa" fill-opacity="0.2"/>
<rect x="28" y="687" width="1" height="1" fill="#d4d4d4" fill-opacity="0.42"/><rect x="28" y="688" width="1" height="1" fill="#d4d4d4" fill-opacity="0.2"/>
<rect x="29" y="687" width="9" height="1" fill="#ce9178" fill-opacity="0.42"/><rect x="29" y="688" width="9" height="1" fill="#ce9178" fill-opacity="0.2"/>
<rect x="38" y="687" width="1" height="1" fill="#d4d4d4" fill-opacity="0.42"/><rect x="38" y="688" width="1" height="1" fill="#d4d4d4" fill-opacity="0.2"/>
<rect x="40" y="687" width="22" height="1" fill="#dcdcaa" fill-opacity="0.42"/><rect x="40" y="688" width="22" height="1" fill="#dcdcaa" fill-opacity="0.2"/>
<rect x="62" y="687" width="3" height="1" fill="#d4d4d4" fill-opacity="0.42"/><rect x="62" y="688" width="3" height="1" fill="#d4d4d4" fill-opacity="0.2"/>
<rect x="66" y="687" width="14" height="1" fill="#ce9178" fill-opacity="0.42"/><rect x="66" y="688" width="14" height="1" fill="#ce9178" fill-opacity="0.2"/>
<rect x="80" y="687" width="1" height="1" fill="#d4d4d4" fill-opacity="0.42"/><rect x="80" y="688" width="1" height="1" fill="#d4d4d4" fill-opacity="0.2"/>
<rect x="82" y="687" width="1" height="1" fill="#d4d4d4" fill-opacity="0.42"/><rect x="82" y="688" width="1" height="1" fill="#d4d4d4" fill-opacity="0.2"/>
<rect x="16" y="689" width="5" height="1" fill="#d4d4d4" fill-opacity="0.42"/><rect x="16" y="690" width="5" height="1" fill="#d4d4d4" fill-opacity="0.2"/>
<rect x="25" y="689" width="1" height="1" fill="#d4d4d4" fill-opacity="0.42"/><rect x="25" y="690" width="1" height="1" fill="#d4d4d4" fill-opacity="0.2"/>
<rect x="27" y="689" width="2" height="1" fill="#dcdcaa" fill-opacity="0.42"/><rect x="27" y="690" width="2" height="1" fill="#dcdcaa" fill-opacity="0.2"/>
<rect x="29" y="689" width="1" height="1" fill="#d4d4d4" fill-opacity="0.42"/><rect x="29" y="690" width="1" height="1" fill="#d4d4d4" fill-opacity="0.2"/>
<rect x="30" y="689" width="12" height="1" fill="#ce9178" fill-opacity="0.42"/><rect x="30" y="690" width="12" height="1" fill="#ce9178" fill-opacity="0.2"/>
<rect x="42" y="689" width="2" height="1" fill="#d4d4d4" fill-opacity="0.42"/><rect x="42" y="690" width="2" height="1" fill="#d4d4d4" fill-opacity="0.2"/>
<rect x="16" y="691" width="5" height="1" fill="#d4d4d4" fill-opacity="0.42"/><rect x="16" y="692" width="5" height="1" fill="#d4d4d4" fill-opacity="0.2"/>
<rect x="25" y="691" width="1" height="1" fill="#d4d4d4" fill-opacity="0.42"/><rect x="25" y="692" width="1" height="1" fill="#d4d4d4" fill-opacity="0.2"/>
<rect x="27" y="691" width="6" height="1" fill="#ce9178" fill-opacity="0.42"/><rect x="27" y="692" width="6" height="1" fill="#ce9178" fill-opacity="0.2"/>
<rect x="33" y="691" width="1" height="1" fill="#d4d4d4" fill-opacity="0.42"/><rect x="33" y="692" width="1" height="1" fill="#d4d4d4" fill-opacity="0.2"/>
<rect x="16" y="693" width="8" height="1" fill="#d4d4d4" fill-opacity="0.42"/><rect x="16" y="694" width="8" height="1" fill="#d4d4d4" fill-opacity="0.2"/>
<rect x="25" y="693" width="1" height="1" fill="#d4d4d4" fill-opacity="0.42"/><rect x="25" y="694" width="1" height="1" fill="#d4d4d4" fill-opacity="0.2"/>
<rect x="27" y="693" width="11" height="1" fill="#d4d4d4" fill-opacity="0.42"/><rect x="27" y="694" width="11" height="1" fill="#d4d4d4" fill-opacity="0.2"/>
<rect x="12" y="695" width="2" height="1" fill="#d4d4d4" fill-opacity="0.42"/><rect x="12" y="696" width="2" height="1" fill="#d4d4d4" fill-opacity="0.2"/>
<rect x="15" y="695" width="8" height="1" fill="#c586c0" fill-opacity="0.42"/><rect x="15" y="696" width="8" height="1" fill="#c586c0" fill-opacity="0.2"/>
<rect x="23" y="695" width="1" height="1" fill="#d4d4d4" fill-opacity="0.42"/><rect x="23" y="696" width="1" height="1" fill="#d4d4d4" fill-opacity="0.2"/>
<rect x="24" y="695" width="4" height="1" fill="#9cdcfe" fill-opacity="0.42"/><rect x="24" y="696" width="4" height="1" fill="#9cdcfe" fill-opacity="0.2"/>
<rect x="28" y="695" width="1" height="1" fill="#d4d4d4" fill-opacity="0.42"/><rect x="28" y="696" width="1" height="1" fill="#d4d4d4" fill-opacity="0.2"/>
<rect x="30" y="695" width="4" height="1" fill="#9cdcfe" fill-opacity="0.42"/><rect x="30" y="696" width="4" height="1" fill="#9cdcfe" fill-opacity="0.2"/>
<rect x="34" y="695" width="1" height="1" fill="#d4d4d4" fill-opacity="0.42"/><rect x="34" y="696" width="1" height="1" fill="#d4d4d4" fill-opacity="0.2"/>
<rect x="16" y="699" width="4" height="1" fill="#d4d4d4" fill-opacity="0.42"/><rect x="16" y="700" width="4" height="1" fill="#d4d4d4" fill-opacity="0.2"/>
<rect x="20" y="699" width="2" height="1" fill="#9cdcfe" fill-opacity="0.42"/><rect x="20" y="700" width="2" height="1" fill="#9cdcfe" fill-opacity="0.2"/>
<rect x="22" y="699" width="1" height="1" fill="#d4d4d4" fill-opacity="0.42"/><rect x="22" y="700" width="1" height="1" fill="#d4d4d4" fill-opacity="0.2"/>
<rect x="23" y="699" width="4" height="1" fill="#9cdcfe" fill-opacity="0.42"/><rect x="23" y="700" width="4" height="1" fill="#9cdcfe" fill-opacity="0.2"/>
<rect x="27" y="699" width="1" height="1" fill="#d4d4d4" fill-opacity="0.42"/><rect x="27" y="700" width="1" height="1" fill="#d4d4d4" fill-opacity="0.2"/>
<rect x="28" y="699" width="4" height="1" fill="#dcdcaa" fill-opacity="0.42"/><rect x="28" y="700" width="4" height="1" fill="#dcdcaa" fill-opacity="0.2"/>
<rect x="32" y="699" width="1" height="1" fill="#d4d4d4" fill-opacity="0.42"/><rect x="32" y="700" width="1" height="1" fill="#d4d4d4" fill-opacity="0.2"/>
<rect x="33" y="699" width="9" height="1" fill="#ce9178" fill-opacity="0.42"/><rect x="33" y="700" width="9" height="1" fill="#ce9178" fill-opacity="0.2"/>
<rect x="42" y="699" width="1" height="1" fill="#d4d4d4" fill-opacity="0.42"/><rect x="42" y="700" width="1" height="1" fill="#d4d4d4" fill-opacity="0.2"/>
<rect x="44" y="699" width="22" height="1" fill="#dcdcaa" fill-opacity="0.42"/><rect x="44" y="700" width="22" height="1" fill="#dcdcaa" fill-opacity="0.2"/>
<rect x="66" y="699" width="3" height="1" fill="#d4d4d4" fill-opacity="0.42"/><rect x="66" y="700" width="3" height="1" fill="#d4d4d4" fill-opacity="0.2"/>
<rect x="70" y="699" width="14" height="1" fill="#ce9178" fill-opacity="0.42"/><rect x="70" y="700" width="14" height="1" fill="#ce9178" fill-opacity="0.2"/>
<rect x="84" y="699" width="1" height="1" fill="#d4d4d4" fill-opacity="0.42"/><rect x="84" y="700" width="1" height="1" fill="#d4d4d4" fill-opacity="0.2"/>
<rect x="86" y="699" width="1" height="1" fill="#d4d4d4" fill-opacity="0.42"/><rect x="86" y="700" width="1" height="1" fill="#d4d4d4" fill-opacity="0.2"/>
<rect x="20" y="701" width="5" height="1" fill="#d4d4d4" fill-opacity="0.42"/><rect x="20" y="702" width="5" height="1" fill="#d4d4d4" fill-opacity="0.2"/>
<rect x="29" y="701" width="1" height="1" fill="#d4d4d4" fill-opacity="0.42"/><rect x="29" y="702" width="1" height="1" fill="#d4d4d4" fill-opacity="0.2"/>
<rect x="31" y="701" width="2" height="1" fill="#dcdcaa" fill-opacity="0.42"/><rect x="31" y="702" width="2" height="1" fill="#dcdcaa" fill-opacity="0.2"/>
<rect x="33" y="701" width="1" height="1" fill="#d4d4d4" fill-opacity="0.42"/><rect x="33" y="702" width="1" height="1" fill="#d4d4d4" fill-opacity="0.2"/>
<rect x="34" y="701" width="14" height="1" fill="#ce9178" fill-opacity="0.42"/><rect x="34" y="702" width="14" height="1" fill="#ce9178" fill-opacity="0.2"/>
<rect x="48" y="701" width="1" height="1" fill="#d4d4d4" fill-opacity="0.42"/><rect x="48" y="702" width="1" height="1" fill="#d4d4d4" fill-opacity="0.2"/>
<rect x="50" y="701" width="5" height="1" fill="#d4d4d4" fill-opacity="0.42"/><rect x="50" y="702" width="5" height="1" fill="#d4d4d4" fill-opacity="0.2"/>
<rect x="55" y="701" width="7" height="1" fill="#9cdcfe" fill-opacity="0.42"/><rect x="55" y="702" width="7" height="1" fill="#9cdcfe" fill-opacity="0.2"/>
<rect x="62" y="701" width="1" height="1" fill="#d4d4d4" fill-opacity="0.42"/><rect x="62" y="702" width="1" height="1" fill="#d4d4d4" fill-opacity="0.2"/>
<rect x="63" y="701" width="5" height="1" fill="#9cdcfe" fill-opacity="0.42"/><rect x="63" y="702" width="5" height="1" fill="#9cdcfe" fill-opacity="0.2"/>
<rect x="68" y="701" width="1" height="1" fill="#d4d4d4" fill-opacity="0.42"/><rect x="68" y="702" width="1" height="1" fill="#d4d4d4" fill-opacity="0.2"/>
<rect x="70" y="701" width="5" height="1" fill="#d4d4d4" fill-opacity="0.42"/><rect x="70" y="702" width="5" height="1" fill="#d4d4d4" fill-opacity="0.2"/>
<rect x="75" y="701" width="7" height="1" fill="#9cdcfe" fill-opacity="0.42"/><rect x="75" y="702" width="7" height="1" fill="#9cdcfe" fill-opacity="0.2"/>
<rect x="82" y="701" width="1" height="1" fill="#d4d4d4" fill-opacity="0.42"/><rect x="82" y="702" width="1" height="1" fill="#d4d4d4" fill-opacity="0.2"/>
<rect x="83" y="701" width="10" height="1" fill="#9cdcfe" fill-opacity="0.42"/><rect x="83" y="702" width="10" height="1" fill="#9cdcfe" fill-opacity="0.2"/>
<rect x="93" y="701" width="1" height="1" fill="#d4d4d4" fill-opacity="0.42"/><rect x="93" y="702" width="1" height="1" fill="#d4d4d4" fill-opacity="0.2"/>
<rect x="95" y="701" width="4" height="1" fill="#d4d4d4" fill-opacity="0.42"/><rect x="95" y="702" width="4" height="1" fill="#d4d4d4" fill-opacity="0.2"/>
<rect x="99" y="701" width="4" height="1" fill="#9cdcfe" fill-opacity="0.42"/><rect x="99" y="702" width="4" height="1" fill="#9cdcfe" fill-opacity="0.2"/>
<rect x="103" y="701" width="1" height="1" fill="#d4d4d4" fill-opacity="0.42"/><rect x="103" y="702" width="1" height="1" fill="#d4d4d4" fill-opacity="0.2"/>
<rect x="104" y="701" width="11" height="1" fill="#dcdcaa" fill-opacity="0.42"/><rect x="104" y="702" width="11" height="1" fill="#dcdcaa" fill-opacity="0.2"/>
<rect x="115" y="701" width="5" height="1" fill="#d4d4d4" fill-opacity="0.42"/><rect x="115" y="702" width="5" height="1" fill="#d4d4d4" fill-opacity="0.2"/>
<rect x="20" y="703" width="5" height="1" fill="#d4d4d4" fill-opacity="0.42"/><rect x="20" y="704" width="5" height="1" fill="#d4d4d4" fill-opacity="0.2"/>
<rect x="29" y="703" width="1" height="1" fill="#d4d4d4" fill-opacity="0.42"/><rect x="29" y="704" width="1" height="1" fill="#d4d4d4" fill-opacity="0.2"/>
<rect x="31" y="703" width="7" height="1" fill="#ce9178" fill-opacity="0.42"/><rect x="31" y="704" width="7" height="1" fill="#ce9178" fill-opacity="0.2"/>
<rect x="38" y="703" width="1" height="1" fill="#d4d4d4" fill-opacity="0.42"/><rect x="38" y="704" width="1" height="1" fill="#d4d4d4" fill-opacity="0.2"/>
<rect x="20" y="705" width="8" height="1" fill="#d4d4d4" fill-opacity="0.42"/><rect x="20" y="706" width="8" height="1" fill="#d4d4d4" fill-opacity="0.2"/>
<rect x="29" y="705" width="1" height="1" fill="#d4d4d4" fill-opacity="0.42"/><rect x="29" y="706" width="1" height="1" fill="#d4d4d4" fill-opacity="0.2"/>
<rect x="31" y="705" width="1" height="1" fill="#d4d4d4" fill-opacity="0.42"/><rect x="31" y="706" width="1" height="1" fill="#d4d4d4" fill-opacity="0.2"/>
<rect x="24" y="707" width="6" height="1" fill="#d4d4d4" fill-opacity="0.42"/><rect x="24" y="708" width="6" height="1" fill="#d4d4d4" fill-opacity="0.2"/>
<rect x="31" y="707" width="1" height="1" fill="#d4d4d4" fill-opacity="0.42"/><rect x="31" y="708" width="1" height="1" fill="#d4d4d4" fill-opacity="0.2"/>
<rect x="33" y="707" width="2" height="1" fill="#dcdcaa" fill-opacity="0.42"/><rect x="33" y="708" width="2" height="1" fill="#dcdcaa" fill-opacity="0.2"/>
<rect x="35" y="707" width="1" height="1" fill="#d4d4d4" fill-opacity="0.42"/><rect x="35" y="708" width="1" height="1" fill="#d4d4d4" fill-opacity="0.2"/>
<rect x="36" y="707" width="4" height="1" fill="#ce9178" fill-opacity="0.42"/><rect x="36" y="708" width="4" height="1" fill="#ce9178" fill-opacity="0.2"/>
<rect x="40" y="707" width="2" height="1" fill="#d4d4d4" fill-opacity="0.42"/><rect x="40" y="708" width="2" height="1" fill="#d4d4d4" fill-opacity="0.2"/>
<rect x="44" y="707" width="5" height="1" fill="#d4d4d4" fill-opacity="0.42"/><rect x="44" y="708" width="5" height="1" fill="#d4d4d4" fill-opacity="0.2"/>
<rect x="50" y="707" width="1" height="1" fill="#d4d4d4" fill-opacity="0.42"/><rect x="50" y="708" width="1" height="1" fill="#d4d4d4" fill-opacity="0.2"/>
<rect x="52" y="707" width="4" height="1" fill="#ce9178" fill-opacity="0.42"/><rect x="52" y="708" width="4" height="1" fill="#ce9178" fill-opacity="0.2"/>
<rect x="56" y="707" width="2" height="1" fill="#d4d4d4" fill-opacity="0.42"/><rect x="56" y="708" width="2" height="1" fill="#d4d4d4" fill-opacity="0.2"/>
<rect x="24" y="709" width="6" height="1" fill="#d4d4d4" fill-opacity="0.42"/><rect x="24" y="710" width="6" height="1" fill="#d4d4d4" fill-opacity="0.2"/>
<rect x="31" y="709" width="1" height="1" fill="#d4d4d4" fill-opacity="0.42"/><rect x="31" y="710" width="1" height="1" fill="#d4d4d4" fill-opacity="0.2"/>
<rect x="33" y="709" width="2" height="1" fill="#dcdcaa" fill-opacity="0.42"/><rect x="33" y="710" width="2" height="1" fill="#dcdcaa" fill-opacity="0.2"/>
<rect x="35" y="709" width="1" height="1" fill="#d4d4d4" fill-opacity="0.42"/><rect x="35" y="710" width="1" height="1" fill="#d4d4d4" fill-opacity="0.2"/>
<rect x="36" y="709" width="5" height="1" fill="#ce9178" fill-opacity="0.42"/><rect x="36" y="710" width="5" height="1" fill="#ce9178" fill-opacity="0.2"/>
<rect x="41" y="709" width="2" height="1" fill="#d4d4d4" fill-opacity="0.42"/><rect x="41" y="710" width="2" height="1" fill="#d4d4d4" fill-opacity="0.2"/>
<rect x="44" y="709" width="5" height="1" fill="#d4d4d4" fill-opacity="0.42"/><rect x="44" y="710" width="5" height="1" fill="#d4d4d4" fill-opacity="0.2"/>
<rect x="50" y="709" width="1" height="1" fill="#d4d4d4" fill-opacity="0.42"/><rect x="50" y="710" width="1" height="1" fill="#d4d4d4" fill-opacity="0.2"/>
<rect x="52" y="709" width="5" height="1" fill="#ce9178" fill-opacity="0.42"/><rect x="52" y="710" width="5" height="1" fill="#ce9178" fill-opacity="0.2"/>
<rect x="57" y="709" width="1" height="1" fill="#d4d4d4" fill-opacity="0.42"/><rect x="57" y="710" width="1" height="1" fill="#d4d4d4" fill-opacity="0.2"/>
<rect x="20" y="711" width="1" height="1" fill="#d4d4d4" fill-opacity="0.42"/><rect x="20" y="712" width="1" height="1" fill="#d4d4d4" fill-opacity="0.2"/>
<rect x="16" y="713" width="2" height="1" fill="#d4d4d4" fill-opacity="0.42"/><rect x="16" y="714" width="2" height="1" fill="#d4d4d4" fill-opacity="0.2"/>
<rect x="19" y="713" width="8" height="1" fill="#c586c0" fill-opacity="0.42"/><rect x="19" y="714" width="8" height="1" fill="#c586c0" fill-opacity="0.2"/>
<rect x="27" y="713" width="1" height="1" fill="#d4d4d4" fill-opacity="0.42"/><rect x="27" y="714" width="1" height="1" fill="#d4d4d4" fill-opacity="0.2"/>
<rect x="28" y="713" width="5" height="1" fill="#9cdcfe" fill-opacity="0.42"/><rect x="28" y="714" width="5" height="1" fill="#9cdcfe" fill-opacity="0.2"/>
<rect x="33" y="713" width="1" height="1" fill="#d4d4d4" fill-opacity="0.42"/><rect x="33" y="714" width="1" height="1" fill="#d4d4d4" fill-opacity="0.2"/>
<rect x="35" y="713" width="5" height="1" fill="#9cdcfe" fill-opacity="0.42"/><rect x="35" y="714" width="5" height="1" fill="#9cdcfe" fill-opacity="0.2"/>
<rect x="40" y="713" width="1" height="1" fill="#d4d4d4" fill-opacity="0.42"/><rect x="40" y="714" width="1" height="1" fill="#d4d4d4" fill-opacity="0.2"/>
<rect x="20" y="715" width="2" height="1" fill="#c586c0" fill-opacity="0.42"/><rect x="20" y="716" width="2" height="1" fill="#c586c0" fill-opacity="0.2"/>
<rect x="23" y="715" width="6" height="1" fill="#d4d4d4" fill-opacity="0.42"/><rect x="23" y="716" width="6" height="1" fill="#d4d4d4" fill-opacity="0.2"/>
<rect x="29" y="715" width="7" height="1" fill="#9cdcfe" fill-opacity="0.42"/><rect x="29" y="716" width="7" height="1" fill="#9cdcfe" fill-opacity="0.2"/>
<rect x="36" y="715" width="1" height="1" fill="#d4d4d4" fill-opacity="0.42"/><rect x="36" y="716" width="1" height="1" fill="#d4d4d4" fill-opacity="0.2"/>
<rect x="37" y="715" width="5" height="1" fill="#9cdcfe" fill-opacity="0.42"/><rect x="37" y="716" width="5" height="1" fill="#9cdcfe" fill-opacity="0.2"/>
<rect x="43" y="715" width="2" height="1" fill="#d4d4d4" fill-opacity="0.42"/><rect x="43" y="716" width="2" height="1" fill="#d4d4d4" fill-opacity="0.2"/>
<rect x="46" y="715" width="5" height="1" fill="#ce9178" fill-opacity="0.42"/><rect x="46" y="716" width="5" height="1" fill="#ce9178" fill-opacity="0.2"/>
<rect x="52" y="715" width="4" height="1" fill="#c586c0" fill-opacity="0.42"/><rect x="52" y="716" width="4" height="1" fill="#c586c0" fill-opacity="0.2"/>
<rect x="8" y="717" width="112" height="2" fill="#264f78"/>
<rect x="24" y="717" width="18" height="1" fill="#dcdcaa" fill-opacity="0.32"/><rect x="24" y="718" width="18" height="1" fill="#dcdcaa" fill-opacity="0.16"/>
<rect x="42" y="717" width="1" height="1" fill="#d4d4d4" fill-opacity="0.32"/><rect x="42" y="718" width="1" height="1" fill="#d4d4d4" fill-opacity="0.16"/>
<rect x="43" y="717" width="19" height="1" fill="#ce9178" fill-opacity="0.32"/><rect x="43" y="718" width="19" height="1" fill="#ce9178" fill-opacity="0.16"/>
<rect x="62" y="717" width="1" height="1" fill="#d4d4d4" fill-opacity="0.32"/><rect x="62" y="718" width="1" height="1" fill="#d4d4d4" fill-opacity="0.16"/>
<rect x="64" y="717" width="5" height="1" fill="#d4d4d4" fill-opacity="0.32"/><rect x="64" y="718" width="5" height="1" fill="#d4d4d4" fill-opacity="0.16"/>
<rect x="69" y="717" width="7" height="1" fill="#9cdcfe" fill-opacity="0.32"/><rect x="69" y="718" width="7" height="1" fill="#9cdcfe" fill-opacity="0.16"/>
<rect x="76" y="717" width="1" height="1" fill="#d4d4d4" fill-opacity="0.32"/><rect x="76" y="718" width="1" height="1" fill="#d4d4d4" fill-opacity="0.16"/>
<rect x="77" y="717" width="4" height="1" fill="#9cdcfe" fill-opacity="0.32"/><rect x="77" y="718" width="4" height="1" fill="#9cdcfe" fill-opacity="0.16"/>
<rect x="81" y="717" width="1" height="1" fill="#d4d4d4" fill-opacity="0.32"/><rect x="81" y="718" width="1" height="1" fill="#d4d4d4" fill-opacity="0.16"/>
<rect x="83" y="717" width="5" height="1" fill="#d4d4d4" fill-opacity="0.32"/><rect x="83" y="718" width="5" height="1" fill="#d4d4d4" fill-opacity="0.16"/>
<rect x="88" y="717" width="7" height="1" fill="#9cdcfe" fill-opacity="0.32"/><rect x="88" y="718" width="7" height="1" fill="#9cdcfe" fill-opacity="0.16"/>
<rect x="95" y="717" width="1" height="1" fill="#d4d4d4" fill-opacity="0.32"/><rect x="95" y="718" width="1" height="1" fill="#d4d4d4" fill-opacity="0.16"/>
<rect x="96" y="717" width="5" height="1" fill="#9cdcfe" fill-opacity="0.32"/><rect x="96" y="718" width="5" height="1" fill="#9cdcfe" fill-opacity="0.16"/>
<rect x="101" y="717" width="1" height="1" fill="#d4d4d4" fill-opacity="0.32"/><rect x="101" y="718" width="1" height="1" fill="#d4d4d4" fill-opacity="0.16"/>
<rect x="44" y="717" width="12" height="2" fill="#e8940f"/>
<rect x="20" y="719" width="3" height="1" fill="#c586c0" fill-opacity="0.42"/><rect x="20" y="720" width="3" height="1" fill="#c586c0" fill-opacity="0.2"/>
<rect x="20" y="723" width="6" height="1" fill="#d4d4d4" fill-opacity="0.42"/><rect x="20" y="724" width="6" height="1" fill="#d4d4d4" fill-opacity="0.2"/>
<rect x="26" y="723" width="5" height="1" fill="#dcdcaa" fill-opacity="0.42"/><rect x="26" y="724" width="5" height="1" fill="#dcdcaa" fill-opacity="0.2"/>
<rect x="31" y="723" width="2" height="1" fill="#d4d4d4" fill-opacity="0.42"/><rect x="31" y="724" width="2" height="1" fill="#d4d4d4" fill-opacity="0.2"/>
<rect x="16" y="725" width="3" height="1" fill="#c586c0" fill-opacity="0.42"/><rect x="16" y="726" width="3" height="1" fill="#c586c0" fill-opacity="0.2"/>
<rect x="19" y="725" width="1" height="1" fill="#d4d4d4" fill-opacity="0.42"/><rect x="19" y="726" width="1" height="1" fill="#d4d4d4" fill-opacity="0.2"/>
<rect x="21" y="725" width="8" height="1" fill="#c586c0" fill-opacity="0.42"/><rect x="21" y="726" width="8" height="1" fill="#c586c0" fill-opacity="0.2"/>
<rect x="29" y="725" width="1" height="1" fill="#d4d4d4" fill-opacity="0.42"/><rect x="29" y="726" width="1" height="1" fill="#d4d4d4" fill-opacity="0.2"/>
<rect x="30" y="725" width="5" height="1" fill="#9cdcfe" fill-opacity="0.42"/><rect x="30" y="726" width="5" height="1" fill="#9cdcfe" fill-opacity="0.2"/>
<rect x="35" y="725" width="1" height="1" fill="#d4d4d4" fill-opacity="0.42"/><rect x="35" y="726" width="1" height="1" fill="#d4d4d4" fill-opacity="0.2"/>
<rect x="37" y="725" width="5" height="1" fill="#9cdcfe" fill-opacity="0.42"/><rect x="37" y="726" width="5" height="1" fill="#9cdcfe" fill-opacity="0.2"/>
<rect x="42" y="725" width="1" height="1" fill="#d4d4d4" fill-opacity="0.42"/><rect x="42" y="726" width="1" height="1" fill="#d4d4d4" fill-opacity="0.2"/>
<rect x="20" y="727" width="6" height="1" fill="#d4d4d4" fill-opacity="0.42"/><rect x="20" y="728" width="6" height="1" fill="#d4d4d4" fill-opacity="0.2"/>
<rect x="26" y="727" width="5" height="1" fill="#dcdcaa" fill-opacity="0.42"/><rect x="26" y="728" width="5" height="1" fill="#dcdcaa" fill-opacity="0.2"/>
<rect x="31" y="727" width="2" height="1" fill="#d4d4d4" fill-opacity="0.42"/><rect x="31" y="728" width="2" height="1" fill="#d4d4d4" fill-opacity="0.2"/>
<rect x="16" y="729" width="3" height="1" fill="#c586c0" fill-opacity="0.42"/><rect x="16" y="730" width="3" height="1" fill="#c586c0" fill-opacity="0.2"/>
<rect x="19" y="729" width="1" height="1" fill="#d4d4d4" fill-opacity="0.42"/><rect x="19" y="730" width="1" height="1" fill="#d4d4d4" fill-opacity="0.2"/>
<rect x="12" y="731" width="3" height="1" fill="#c586c0" fill-opacity="0.42"/><rect x="12" y="732" width="3" height="1" fill="#c586c0" fill-opacity="0.2"/>
<rect x="15" y="731" width="1" height="1" fill="#d4d4d4" fill-opacity="0.42"/><rect x="15" y="732" width="1" height="1" fill="#d4d4d4" fill-opacity="0.2"/>
<rect x="17" y="731" width="8" height="1" fill="#c586c0" fill-opacity="0.42"/><rect x="17" y="732" width="8" height="1" fill="#c586c0" fill-opacity="0.2"/>
<rect x="25" y="731" width="1" height="1" fill="#d4d4d4" fill-opacity="0.42"/><rect x="25" y="732" width="1" height="1" fill="#d4d4d4" fill-opacity="0.2"/>
<rect x="26" y="731" width="4" height="1" fill="#9cdcfe" fill-opacity="0.42"/><rect x="26" y="732" width="4" height="1" fill="#9cdcfe" fill-opacity="0.2"/>
<rect x="30" y="731" width="1" height="1" fill="#d4d4d4" fill-opacity="0.42"/><rect x="30" y="732" width="1" height="1" fill="#d4d4d4" fill-opacity="0.2"/>
<rect x="32" y="731" width="4" height="1" fill="#9cdcfe" fill-opacity="0.42"/><rect x="32" y="732" width="4" height="1" fill="#9cdcfe" fill-opacity="0.2"/>
<rect x="36" y="731" width="1" height="1" fill="#d4d4d4" fill-opacity="0.42"/><rect x="36" y="732" width="1" height="1" fill="#d4d4d4" fill-opacity="0.2"/>
<rect x="16" y="733" width="5" height="1" fill="#d4d4d4" fill-opacity="0.42"/><rect x="16" y="734" width="5" height="1" fill="#d4d4d4" fill-opacity="0.2"/>
<rect x="21" y="733" width="5" height="1" fill="#dcdcaa" fill-opacity="0.42"/><rect x="21" y="734" width="5" height="1" fill="#dcdcaa" fill-opacity="0.2"/>
<rect x="26" y="733" width="2" height="1" fill="#d4d4d4" fill-opacity="0.42"/><rect x="26" y="734" width="2" height="1" fill="#d4d4d4" fill-opacity="0.2"/>
<rect x="16" y="735" width="8" height="1" fill="#d4d4d4" fill-opacity="0.42"/><rect x="16" y="736" width="8" height="1" fill="#d4d4d4" fill-opacity="0.2"/>
<rect x="25" y="735" width="1" height="1" fill="#d4d4d4" fill-opacity="0.42"/><rect x="25" y="736" width="1" height="1" fill="#d4d4d4" fill-opacity="0.2"/>
<rect x="27" y="735" width="5" height="1" fill="#569cd6" fill-opacity="0.42"/><rect x="27" y="736" width="5" height="1" fill="#569cd6" fill-opacity="0.2"/>
<rect x="16" y="737" width="13" height="1" fill="#d4d4d4" fill-opacity="0.42"/><rect x="16" y="738" width="13" height="1" fill="#d4d4d4" fill-opacity="0.2"/>
<rect x="34" y="737" width="1" height="1" fill="#d4d4d4" fill-opacity="0.42"/><rect x="34" y="738" width="1" height="1" fill="#d4d4d4" fill-opacity="0.2"/>
<rect x="36" y="737" width="13" height="1" fill="#ce9178" fill-opacity="0.42"/><rect x="36" y="738" width="13" height="1" fill="#ce9178" fill-opacity="0.2"/>
<rect x="16" y="739" width="16" height="1" fill="#d4d4d4" fill-opacity="0.42"/><rect x="16" y="740" width="16" height="1" fill="#d4d4d4" fill-opacity="0.2"/>
<rect x="34" y="739" width="1" height="1" fill="#d4d4d4" fill-opacity="0.42"/><rect x="34" y="740" width="1" height="1" fill="#d4d4d4" fill-opacity="0.2"/>
<rect x="36" y="739" width="2" height="1" fill="#dcdcaa" fill-opacity="0.42"/><rect x="36" y="740" width="2" height="1" fill="#dcdcaa" fill-opacity="0.2"/>
<rect x="38" y="739" width="1" height="1" fill="#d4d4d4" fill-opacity="0.42"/><rect x="38" y="740" width="1" height="1" fill="#d4d4d4" fill-opacity="0.2"/>
<rect x="39" y="739" width="11" height="1" fill="#ce9178" fill-opacity="0.42"/><rect x="39" y="740" width="11" height="1" fill="#ce9178" fill-opacity="0.2"/>
<rect x="50" y="739" width="1" height="1" fill="#d4d4d4" fill-opacity="0.42"/><rect x="50" y="740" width="1" height="1" fill="#d4d4d4" fill-opacity="0.2"/>
<rect x="16" y="741" width="17" height="1" fill="#d4d4d4" fill-opacity="0.42"/><rect x="16" y="742" width="17" height="1" fill="#d4d4d4" fill-opacity="0.2"/>
<rect x="34" y="741" width="1" height="1" fill="#d4d4d4" fill-opacity="0.42"/><rect x="34" y="742" width="1" height="1" fill="#d4d4d4" fill-opacity="0.2"/>
<rect x="36" y="741" width="2" height="1" fill="#d4d4d4" fill-opacity="0.42"/><rect x="36" y="742" width="2" height="1" fill="#d4d4d4" fill-opacity="0.2"/>
<rect x="12" y="743" width="3" height="1" fill="#c586c0" fill-opacity="0.42"/><rect x="12" y="744" width="3" height="1" fill="#c586c0" fill-opacity="0.2"/>
<rect x="15" y="743" width="1" height="1" fill="#d4d4d4" fill-opacity="0.42"/><rect x="15" y="744" width="1" height="1" fill="#d4d4d4" fill-opacity="0.2"/>
<rect x="8" y="745" width="3" height="1" fill="#c586c0" fill-opacity="0.42"/><rect x="8" y="746" width="3" height="1" fill="#c586c0" fill-opacity="0.2"/>
<rect x="8" y="749" width="8" height="1" fill="#d4d4d4" fill-opacity="0.42"/><rect x="8" y="750" width="8" height="1" fill="#d4d4d4" fill-opacity="0.2"/>
<rect x="16" y="749" width="12" height="1" fill="#dcdcaa" fill-opacity="0.42"/><rect x="16" y="750" width="12" height="1" fill="#dcdcaa" fill-opacity="0.2"/>
<rect x="28" y="749" width="1" height="1" fill="#d4d4d4" fill-opacity="0.42"/><rect x="28" y="750" width="1" height="1" fill="#d4d4d4" fill-opacity="0.2"/>
<rect x="29" y="749" width="8" height="1" fill="#c586c0" fill-opacity="0.42"/><rect x="29" y="750" width="8" height="1" fill="#c586c0" fill-opacity="0.2"/>
<rect x="37" y="749" width="2" height="1" fill="#d4d4d4" fill-opacity="0.42"/><rect x="37" y="750" width="2" height="1" fill="#d4d4d4" fill-opacity="0.2"/>
<rect x="12" y="751" width="5" height="1" fill="#c586c0" fill-opacity="0.42"/><rect x="12" y="752" width="5" height="1" fill="#c586c0" fill-opacity="0.2"/>
<rect x="18" y="751" width="4" height="1" fill="#569cd6" fill-opacity="0.42"/><rect x="18" y="752" width="4" height="1" fill="#569cd6" fill-opacity="0.2"/>
<rect x="23" y="751" width="2" height="1" fill="#c586c0" fill-opacity="0.42"/><rect x="23" y="752" width="2" height="1" fill="#c586c0" fill-opacity="0.2"/>
<rect x="16" y="753" width="8" height="1" fill="#d4d4d4" fill-opacity="0.42"/><rect x="16" y="754" width="8" height="1" fill="#d4d4d4" fill-opacity="0.2"/>
<rect x="24" y="753" width="4" height="1" fill="#dcdcaa" fill-opacity="0.42"/><rect x="24" y="754" width="4" height="1" fill="#dcdcaa" fill-opacity="0.2"/>
<rect x="28" y="753" width="1" height="1" fill="#d4d4d4" fill-opacity="0.42"/><rect x="28" y="754" width="1" height="1" fill="#d4d4d4" fill-opacity="0.2"/>
<rect x="29" y="753" width="1" height="1" fill="#b5cea8" fill-opacity="0.42"/><rect x="29" y="754" width="1" height="1" fill="#b5cea8" fill-opacity="0.2"/>
<rect x="30" y="753" width="1" height="1" fill="#d4d4d4" fill-opacity="0.42"/><rect x="30" y="754" width="1" height="1" fill="#d4d4d4" fill-opacity="0.2"/>
<rect x="16" y="757" width="5" height="1" fill="#c586c0" fill-opacity="0.42"/><rect x="16" y="758" width="5" height="1" fill="#c586c0" fill-opacity="0.2"/>
<rect x="22" y="757" width="9" height="1" fill="#d4d4d4" fill-opacity="0.42"/><rect x="22" y="758" width="9" height="1" fill="#d4d4d4" fill-opacity="0.2"/>
<rect x="32" y="757" width="1" height="1" fill="#d4d4d4" fill-opacity="0.42"/><rect x="32" y="758" width="1" height="1" fill="#d4d4d4" fill-opacity="0.2"/>
<rect x="34" y="757" width="11" height="1" fill="#dcdcaa" fill-opacity="0.42"/><rect x="34" y="758" width="11" height="1" fill="#dcdcaa" fill-opacity="0.2"/>
<rect x="45" y="757" width="2" height="1" fill="#d4d4d4" fill-opacity="0.42"/><rect x="45" y="758" width="2" height="1" fill="#d4d4d4" fill-opacity="0.2"/>
<rect x="16" y="759" width="5" height="1" fill="#c586c0" fill-opacity="0.42"/><rect x="16" y="760" width="5" height="1" fill="#c586c0" fill-opacity="0.2"/>
<rect x="22" y="759" width="12" height="1" fill="#d4d4d4" fill-opacity="0.42"/><rect x="22" y="760" width="12" height="1" fill="#d4d4d4" fill-opacity="0.2"/>
<rect x="35" y="759" width="1" height="1" fill="#d4d4d4" fill-opacity="0.42"/><rect x="35" y="760" width="1" height="1" fill="#d4d4d4" fill-opacity="0.2"/>
<rect x="37" y="759" width="15" height="1" fill="#dcdcaa" fill-opacity="0.42"/><rect x="37" y="760" width="15" height="1" fill="#dcdcaa" fill-opacity="0.2"/>
<rect x="52" y="759" width="11" height="1" fill="#d4d4d4" fill-opacity="0.42"/><rect x="52" y="760" width="11" height="1" fill="#d4d4d4" fill-opacity="0.2"/>
<rect x="16" y="763" width="8" height="1" fill="#d4d4d4" fill-opacity="0.42"/><rect x="16" y="764" width="8" height="1" fill="#d4d4d4" fill-opacity="0.2"/>
<rect x="24" y="763" width="4" height="1" fill="#dcdcaa" fill-opacity="0.42"/><rect x="24" y="764" width="4" height="1" fill="#dcdcaa" fill-opacity="0.2"/>
<rect x="28" y="763" width="1" height="1" fill="#d4d4d4" fill-opacity="0.42"/><rect x="28" y="764" width="1" height="1" fill="#d4d4d4" fill-opacity="0.2"/>
<rect x="29" y="763" width="4" height="1" fill="#b5cea8" fill-opacity="0.42"/><rect x="29" y="764" width="4" height="1" fill="#b5cea8" fill-opacity="0.2"/>
<rect x="33" y="763" width="1" height="1" fill="#d4d4d4" fill-opacity="0.42"/><rect x="33" y="764" width="1" height="1" fill="#d4d4d4" fill-opacity="0.2"/>
<rect x="16" y="765" width="2" height="1" fill="#c586c0" fill-opacity="0.42"/><rect x="16" y="766" width="2" height="1" fill="#c586c0" fill-opacity="0.2"/>
<rect x="19" y="765" width="24" height="1" fill="#d4d4d4" fill-opacity="0.42"/><rect x="19" y="766" width="24" height="1" fill="#d4d4d4" fill-opacity="0.2"/>
<rect x="44" y="765" width="4" height="1" fill="#c586c0" fill-opacity="0.42"/><rect x="44" y="766" width="4" height="1" fill="#c586c0" fill-opacity="0.2"/>
<rect x="20" y="767" width="2" height="1" fill="#c586c0" fill-opacity="0.42"/><rect x="20" y="768" width="2" height="1" fill="#c586c0" fill-opacity="0.2"/>
<rect x="23" y="767" width="20" height="1" fill="#d4d4d4" fill-opacity="0.42"/><rect x="23" y="768" width="20" height="1" fill="#d4d4d4" fill-opacity="0.2"/>
<rect x="44" y="767" width="3" height="1" fill="#d4d4d4" fill-opacity="0.42"/><rect x="44" y="768" width="3" height="1" fill="#d4d4d4" fill-opacity="0.2"/>
<rect x="48" y="767" width="7" height="1" fill="#d4d4d4" fill-opacity="0.42"/><rect x="48" y="768" width="7" height="1" fill="#d4d4d4" fill-opacity="0.2"/>
<rect x="55" y="767" width="17" height="1" fill="#9cdcfe" fill-opacity="0.42"/><rect x="55" y="768" width="17" height="1" fill="#9cdcfe" fill-opacity="0.2"/>
<rect x="72" y="767" width="1" height="1" fill="#d4d4d4" fill-opacity="0.42"/><rect x="72" y="768" width="1" height="1" fill="#d4d4d4" fill-opacity="0.2"/>
<rect x="74" y="767" width="2" height="1" fill="#d4d4d4" fill-opacity="0.42"/><rect x="74" y="768" width="2" height="1" fill="#d4d4d4" fill-opacity="0.2"/>
<rect x="77" y="767" width="3" height="1" fill="#d4d4d4" fill-opacity="0.42"/><rect x="77" y="768" width="3" height="1" fill="#d4d4d4" fill-opacity="0.2"/>
<rect x="81" y="767" width="19" height="1" fill="#d4d4d4" fill-opacity="0.42"/><rect x="81" y="768" width="19" height="1" fill="#d4d4d4" fill-opacity="0.2"/>
<rect x="101" y="767" width="3" height="1" fill="#d4d4d4" fill-opacity="0.42"/><rect x="101" y="768" width="3" height="1" fill="#d4d4d4" fill-opacity="0.2"/>
<rect x="105" y="767" width="3" height="1" fill="#d4d4d4" fill-opacity="0.42"/><rect x="105" y="768" width="3" height="1" fill="#d4d4d4" fill-opacity="0.2"/>
<rect x="109" y="767" width="10" height="1" fill="#d4d4d4" fill-opacity="0.42"/><rect x="109" y="768" width="10" height="1" fill="#d4d4d4" fill-opacity="0.2"/>
<rect x="24" y="769" width="11" height="1" fill="#dcdcaa" fill-opacity="0.42"/><rect x="24" y="770" width="11" height="1" fill="#dcdcaa" fill-opacity="0.2"/>
<rect x="35" y="769" width="11" height="1" fill="#d4d4d4" fill-opacity="0.42"/><rect x="35" y="770" width="11" height="1" fill="#d4d4d4" fill-opacity="0.2"/>
<rect x="47" y="769" width="10" height="1" fill="#ce9178" fill-opacity="0.42"/><rect x="47" y="770" width="10" height="1" fill="#ce9178" fill-opacity="0.2"/>
<rect x="57" y="769" width="1" height="1" fill="#d4d4d4" fill-opacity="0.42"/><rect x="57" y="770" width="1" height="1" fill="#d4d4d4" fill-opacity="0.2"/>
<rect x="59" y="769" width="1" height="1" fill="#b5cea8" fill-opacity="0.42"/><rect x="59" y="770" width="1" height="1" fill="#b5cea8" fill-opacity="0.2"/>
<rect x="60" y="769" width="1" height="1" fill="#d4d4d4" fill-opacity="0.42"/><rect x="60" y="770" width="1" height="1" fill="#d4d4d4" fill-opacity="0.2"/>
<rect x="28" y="773" width="12" height="1" fill="#d4d4d4" fill-opacity="0.42"/><rect x="28" y="774" width="12" height="1" fill="#d4d4d4" fill-opacity="0.2"/>
<rect x="41" y="773" width="1" height="1" fill="#d4d4d4" fill-opacity="0.42"/><rect x="41" y="774" width="1" height="1" fill="#d4d4d4" fill-opacity="0.2"/>
<rect x="43" y="773" width="15" height="1" fill="#dcdcaa" fill-opacity="0.42"/><rect x="43" y="774" width="15" height="1" fill="#dcdcaa" fill-opacity="0.2"/>
<rect x="58" y="773" width="11" height="1" fill="#d4d4d4" fill-opacity="0.42"/><rect x="58" y="774" width="11" height="1" fill="#d4d4d4" fill-opacity="0.2"/>
<rect x="8" y="775" width="112" height="2" fill="#264f78"/>
<rect x="28" y="775" width="18" height="1" fill="#dcdcaa" fill-opacity="0.32"/><rect x="28" y="776" width="18" height="1" fill="#dcdcaa" fill-opacity="0.16"/>
<rect x="46" y="775" width="1" height="1" fill="#d4d4d4" fill-opacity="0.32"/><rect x="46" y="776" width="1" height="1" fill="#d4d4d4" fill-opacity="0.16"/>
<rect x="47" y="775" width="23" height="1" fill="#ce9178" fill-opacity="0.32"/><rect x="47" y="776" width="23" height="1" fill="#ce9178" fill-opacity="0.16"/>
<rect x="70" y="775" width="1" height="1" fill="#d4d4d4" fill-opacity="0.32"/><rect x="70" y="776" width="1" height="1" fill="#d4d4d4" fill-opacity="0.16"/>
<rect x="72" y="775" width="1" height="1" fill="#d4d4d4" fill-opacity="0.32"/><rect x="72" y="776" width="1" height="1" fill="#d4d4d4" fill-opacity="0.16"/>
<rect x="48" y="775" width="12" height="2" fill="#e8940f"/>
<rect x="32" y="777" width="1" height="1" fill="#d4d4d4" fill-opacity="0.42"/><rect x="32" y="778" width="1" height="1" fill="#d4d4d4" fill-opacity="0.2"/>
<rect x="34" y="777" width="1" height="1" fill="#d4d4d4" fill-opacity="0.42"/><rect x="34" y="778" width="1" height="1" fill="#d4d4d4" fill-opacity="0.2"/>
<rect x="36" y="777" width="4" height="1" fill="#d4d4d4" fill-opacity="0.42"/><rect x="36" y="778" width="4" height="1" fill="#d4d4d4" fill-opacity="0.2"/>
<rect x="40" y="777" width="4" height="1" fill="#9cdcfe" fill-opacity="0.42"/><rect x="40" y="778" width="4" height="1" fill="#9cdcfe" fill-opacity="0.2"/>
<rect x="44" y="777" width="1" height="1" fill="#d4d4d4" fill-opacity="0.42"/><rect x="44" y="778" width="1" height="1" fill="#d4d4d4" fill-opacity="0.2"/>
<rect x="45" y="777" width="5" height="1" fill="#dcdcaa" fill-opacity="0.42"/><rect x="45" y="778" width="5" height="1" fill="#dcdcaa" fill-opacity="0.2"/>
<rect x="50" y="777" width="14" height="1" fill="#d4d4d4" fill-opacity="0.42"/><rect x="50" y="778" width="14" height="1" fill="#d4d4d4" fill-opacity="0.2"/>
<rect x="64" y="777" width="1" height="1" fill="#9cdcfe" fill-opacity="0.42"/><rect x="64" y="778" width="1" height="1" fill="#9cdcfe" fill-opacity="0.2"/>
<rect x="65" y="777" width="1" height="1" fill="#d4d4d4" fill-opacity="0.42"/><rect x="65" y="778" width="1" height="1" fill="#d4d4d4" fill-opacity="0.2"/>
<rect x="67" y="777" width="1" height="1" fill="#b5cea8" fill-opacity="0.42"/><rect x="67" y="778" width="1" height="1" fill="#b5cea8" fill-opacity="0.2"/>
<rect x="68" y="777" width="2" height="1" fill="#d4d4d4" fill-opacity="0.42"/><rect x="68" y="778" width="2" height="1" fill="#d4d4d4" fill-opacity="0.2"/>
<rect x="32" y="779" width="1" height="1" fill="#d4d4d4" fill-opacity="0.42"/><rect x="32" y="780" width="1" height="1" fill="#d4d4d4" fill-opacity="0.2"/>
<rect x="34" y="779" width="1" height="1" fill="#d4d4d4" fill-opacity="0.42"/><rect x="34" y="780" width="1" height="1" fill="#d4d4d4" fill-opacity="0.2"/>
<rect x="36" y="779" width="4" height="1" fill="#d4d4d4" fill-opacity="0.42"/><rect x="36" y="780" width="4" height="1" fill="#d4d4d4" fill-opacity="0.2"/>
<rect x="40" y="779" width="4" height="1" fill="#9cdcfe" fill-opacity="0.42"/><rect x="40" y="780" width="4" height="1" fill="#9cdcfe" fill-opacity="0.2"/>
<rect x="44" y="779" width="1" height="1" fill="#d4d4d4" fill-opacity="0.42"/><rect x="44" y="780" width="1" height="1" fill="#d4d4d4" fill-opacity="0.2"/>
<rect x="45" y="779" width="5" height="1" fill="#dcdcaa" fill-opacity="0.42"/><rect x="45" y="780" width="5" height="1" fill="#dcdcaa" fill-opacity="0.2"/>
<rect x="50" y="779" width="14" height="1" fill="#d4d4d4" fill-opacity="0.42"/><rect x="50" y="780" width="14" height="1" fill="#d4d4d4" fill-opacity="0.2"/>
<rect x="64" y="779" width="1" height="1" fill="#9cdcfe" fill-opacity="0.42"/><rect x="64" y="780" width="1" height="1" fill="#9cdcfe" fill-opacity="0.2"/>
<rect x="65" y="779" width="1" height="1" fill="#d4d4d4" fill-opacity="0.42"/><rect x="65" y="780" width="1" height="1" fill="#d4d4d4" fill-opacity="0.2"/>
<rect x="67" y="779" width="1" height="1" fill="#b5cea8" fill-opacity="0.42"/><rect x="67" y="780" width="1" height="1" fill="#b5cea8" fill-opacity="0.2"/>
<rect x="68" y="779" width="2" height="1" fill="#d4d4d4" fill-opacity="0.42"/><rect x="68" y="780" width="2" height="1" fill="#d4d4d4" fill-opacity="0.2"/>
<rect x="32" y="781" width="1" height="1" fill="#d4d4d4" fill-opacity="0.42"/><rect x="32" y="782" width="1" height="1" fill="#d4d4d4" fill-opacity="0.2"/>
<rect x="34" y="781" width="1" height="1" fill="#d4d4d4" fill-opacity="0.42"/><rect x="34" y="782" width="1" height="1" fill="#d4d4d4" fill-opacity="0.2"/>
<rect x="36" y="781" width="4" height="1" fill="#d4d4d4" fill-opacity="0.42"/><rect x="36" y="782" width="4" height="1" fill="#d4d4d4" fill-opacity="0.2"/>
<rect x="40" y="781" width="4" height="1" fill="#9cdcfe" fill-opacity="0.42"/><rect x="40" y="782" width="4" height="1" fill="#9cdcfe" fill-opacity="0.2"/>
<rect x="44" y="781" width="1" height="1" fill="#d4d4d4" fill-opacity="0.42"/><rect x="44" y="782" width="1" height="1" fill="#d4d4d4" fill-opacity="0.2"/>
<rect x="45" y="781" width="5" height="1" fill="#dcdcaa" fill-opacity="0.42"/><rect x="45" y="782" width="5" height="1" fill="#dcdcaa" fill-opacity="0.2"/>
<rect x="50" y="781" width="14" height="1" fill="#d4d4d4" fill-opacity="0.42"/><rect x="50" y="782" width="14" height="1" fill="#d4d4d4" fill-opacity="0.2"/>
<rect x="64" y="781" width="1" height="1" fill="#9cdcfe" fill-opacity="0.42"/><rect x="64" y="782" width="1" height="1" fill="#9cdcfe" fill-opacity="0.2"/>
<rect x="65" y="781" width="1" height="1" fill="#d4d4d4" fill-opacity="0.42"/><rect x="65" y="782" width="1" height="1" fill="#d4d4d4" fill-opacity="0.2"/>
<rect x="67" y="781" width="1" height="1" fill="#b5cea8" fill-opacity="0.42"/><rect x="67" y="782" width="1" height="1" fill="#b5cea8" fill-opacity="0.2"/>
<rect x="68" y="781" width="1" height="1" fill="#d4d4d4" fill-opacity="0.42"/><rect x="68" y="782" width="1" height="1" fill="#d4d4d4" fill-opacity="0.2"/>
<rect x="28" y="783" width="2" height="1" fill="#d4d4d4" fill-opacity="0.42"/><rect x="28" y="784" width="2" height="1" fill="#d4d4d4" fill-opacity="0.2"/>
<rect x="28" y="785" width="11" height="1" fill="#d4d4d4" fill-opacity="0.42"/><rect x="28" y="786" width="11" height="1" fill="#d4d4d4" fill-opacity="0.2"/>
<rect x="39" y="785" width="1" height="1" fill="#d4d4d4" fill-opacity="0.42"/><rect x="39" y="786" width="1" height="1" fill="#d4d4d4" fill-opacity="0.2"/>
<rect x="41" y="785" width="4" height="1" fill="#9cdcfe" fill-opacity="0.42"/><rect x="41" y="786" width="4" height="1" fill="#9cdcfe" fill-opacity="0.2"/>
<rect x="20" y="787" width="3" height="1" fill="#c586c0" fill-opacity="0.42"/><rect x="20" y="788" width="3" height="1" fill="#c586c0" fill-opacity="0.2"/>
<rect x="16" y="789" width="3" height="1" fill="#c586c0" fill-opacity="0.42"/><rect x="16" y="790" width="3" height="1" fill="#c586c0" fill-opacity="0.2"/>
<rect x="12" y="791" width="3" height="1" fill="#c586c0" fill-opacity="0.42"/><rect x="12" y="792" width="3" height="1" fill="#c586c0" fill-opacity="0.2"/>
<rect x="8" y="793" width="4" height="1" fill="#c586c0" fill-opacity="0.42"/><rect x="8" y="794" width="4" height="1" fill="#c586c0" fill-opacity="0.2"/>
<rect x="8" y="797" width="7" height="1" fill="#d4d4d4" fill-opacity="0.42"/><rect x="8" y="798" width="7" height="1" fill="#d4d4d4" fill-opacity="0.2"/>
<rect x="16" y="797" width="12" height="1" fill="#dcdcaa" fill-opacity="0.42"/><rect x="16" y="798" width="12" height="1" fill="#dcdcaa" fill-opacity="0.2"/>
<rect x="29" y="797" width="10" height="1" fill="#c586c0" fill-opacity="0.42"/><rect x="29" y="798" width="10" height="1" fill="#c586c0" fill-opacity="0.2"/>
<rect x="38" y="797" width="1" height="1" fill="#d4d4d4" fill-opacity="0.42"/><rect x="38" y="798" width="1" height="1" fill="#d4d4d4" fill-opacity="0.2"/>
<rect x="12" y="799" width="5" height="1" fill="#c586c0" fill-opacity="0.42"/><rect x="12" y="800" width="5" height="1" fill="#c586c0" fill-opacity="0.2"/>
<rect x="18" y="799" width="4" height="1" fill="#9cdcfe" fill-opacity="0.42"/><rect x="18" y="800" width="4" height="1" fill="#9cdcfe" fill-opacity="0.2"/>
<rect x="23" y="799" width="1" height="1" fill="#c586c0" fill-opacity="0.42"/><rect x="23" y="800" width="1" height="1" fill="#c586c0" fill-opacity="0.2"/>
<rect x="16" y="801" width="7" height="1" fill="#d4d4d4" fill-opacity="0.42"/><rect x="16" y="802" width="7" height="1" fill="#d4d4d4" fill-opacity="0.2"/>
<rect x="24" y="801" width="9" height="1" fill="#dcdcaa" fill-opacity="0.42"/><rect x="24" y="802" width="9" height="1" fill="#dcdcaa" fill-opacity="0.2"/>
<rect x="16" y="805" width="2" height="1" fill="#c586c0" fill-opacity="0.42"/><rect x="16" y="806" width="2" height="1" fill="#c586c0" fill-opacity="0.2"/>
<rect x="19" y="805" width="24" height="1" fill="#dcdcaa" fill-opacity="0.42"/><rect x="19" y="806" width="24" height="1" fill="#dcdcaa" fill-opacity="0.2"/>
<rect x="45" y="805" width="4" height="1" fill="#c586c0" fill-opacity="0.42"/><rect x="45" y="806" width="4" height="1" fill="#c586c0" fill-opacity="0.2"/>
<rect x="20" y="807" width="3" height="1" fill="#d4d4d4" fill-opacity="0.42"/><rect x="20" y="808" width="3" height="1" fill="#d4d4d4" fill-opacity="0.2"/>
<rect x="24" y="807" width="9" height="1" fill="#dcdcaa" fill-opacity="0.42"/><rect x="24" y="808" width="9" height="1" fill="#dcdcaa" fill-opacity="0.2"/>
<rect x="34" y="807" width="9" height="1" fill="#ce9178" fill-opacity="0.42"/><rect x="34" y="808" width="9" height="1" fill="#ce9178" fill-opacity="0.2"/>
<rect x="44" y="807" width="3" height="1" fill="#d4d4d4" fill-opacity="0.42"/><rect x="44" y="808" width="3" height="1" fill="#d4d4d4" fill-opacity="0.2"/>
<rect x="20" y="809" width="10" height="1" fill="#dcdcaa" fill-opacity="0.42"/><rect x="20" y="810" width="10" height="1" fill="#dcdcaa" fill-opacity="0.2"/>
<rect x="30" y="809" width="16" height="1" fill="#d4d4d4" fill-opacity="0.42"/><rect x="30" y="810" width="16" height="1" fill="#d4d4d4" fill-opacity="0.2"/>
<rect x="47" y="809" width="9" height="1" fill="#ce9178" fill-opacity="0.42"/><rect x="47" y="810" width="9" height="1" fill="#ce9178" fill-opacity="0.2"/>
<rect x="57" y="809" width="4" height="1" fill="#d4d4d4" fill-opacity="0.42"/><rect x="57" y="810" width="4" height="1" fill="#d4d4d4" fill-opacity="0.2"/>
<rect x="20" y="813" width="6" height="1" fill="#c586c0" fill-opacity="0.42"/><rect x="20" y="814" width="6" height="1" fill="#c586c0" fill-opacity="0.2"/>
<rect x="16" y="815" width="3" height="1" fill="#c586c0" fill-opacity="0.42"/><rect x="16" y="816" width="3" height="1" fill="#c586c0" fill-opacity="0.2"/>
<rect x="12" y="817" width="3" height="1" fill="#c586c0" fill-opacity="0.42"/><rect x="12" y="818" width="3" height="1" fill="#c586c0" fill-opacity="0.2"/>
<rect x="8" y="819" width="4" height="1" fill="#c586c0" fill-opacity="0.42"/><rect x="8" y="820" width="4" height="1" fill="#c586c0" fill-opacity="0.2"/>
<rect x="8" y="829" width="112" height="2" fill="#264f78"/>
<rect x="8" y="829" width="18" height="1" fill="#d4d4d4" fill-opacity="0.32"/><rect x="8" y="830" width="18" height="1" fill="#d4d4d4" fill-opacity="0.16"/>
<rect x="26" y="829" width="12" height="2" fill="#e8940f"/>
<rect x="39" y="829" width="15" height="1" fill="#d4d4d4" fill-opacity="0.32"/><rect x="39" y="830" width="15" height="1" fill="#d4d4d4" fill-opacity="0.16"/>
<rect x="8" y="831" width="112" height="2" fill="#264f78"/>
<rect x="8" y="831" width="17" height="1" fill="#d4d4d4" fill-opacity="0.32"/><rect x="8" y="832" width="17" height="1" fill="#d4d4d4" fill-opacity="0.16"/>
<rect x="25" y="831" width="12" height="2" fill="#e8940f"/>
<rect x="38" y="831" width="17" height="1" fill="#d4d4d4" fill-opacity="0.32"/><rect x="38" y="832" width="17" height="1" fill="#d4d4d4" fill-opacity="0.16"/>
<rect x="56" y="831" width="15" height="1" fill="#9cdcfe" fill-opacity="0.32"/><rect x="56" y="832" width="15" height="1" fill="#9cdcfe" fill-opacity="0.16"/>
<rect x="12" y="833" width="5" height="1" fill="#c586c0" fill-opacity="0.42"/><rect x="12" y="834" width="5" height="1" fill="#c586c0" fill-opacity="0.2"/>
<rect x="18" y="833" width="10" height="1" fill="#d4d4d4" fill-opacity="0.42"/><rect x="18" y="834" width="10" height="1" fill="#d4d4d4" fill-opacity="0.2"/>
<rect x="29" y="833" width="33" height="1" fill="#dcdcaa" fill-opacity="0.42"/><rect x="29" y="834" width="33" height="1" fill="#dcdcaa" fill-opacity="0.2"/>
<rect x="63" y="833" width="11" height="1" fill="#d4d4d4" fill-opacity="0.42"/><rect x="63" y="834" width="11" height="1" fill="#d4d4d4" fill-opacity="0.2"/>
<rect x="12" y="835" width="5" height="1" fill="#c586c0" fill-opacity="0.42"/><rect x="12" y="836" width="5" height="1" fill="#c586c0" fill-opacity="0.2"/>
<rect x="18" y="835" width="7" height="1" fill="#d4d4d4" fill-opacity="0.42"/><rect x="18" y="836" width="7" height="1" fill="#d4d4d4" fill-opacity="0.2"/>
<rect x="26" y="835" width="8" height="1" fill="#d4d4d4" fill-opacity="0.42"/><rect x="26" y="836" width="8" height="1" fill="#d4d4d4" fill-opacity="0.2"/>
<rect x="34" y="835" width="10" height="1" fill="#d4d4d4" fill-opacity="0.42"/><rect x="34" y="836" width="10" height="1" fill="#d4d4d4" fill-opacity="0.2"/>
<rect x="44" y="835" width="4" height="1" fill="#9cdcfe" fill-opacity="0.42"/><rect x="44" y="836" width="4" height="1" fill="#9cdcfe" fill-opacity="0.2"/>
<rect x="48" y="835" width="23" height="1" fill="#dcdcaa" fill-opacity="0.42"/><rect x="48" y="836" width="23" height="1" fill="#dcdcaa" fill-opacity="0.2"/>
<rect x="12" y="837" width="3" height="1" fill="#d4d4d4" fill-opacity="0.42"/><rect x="12" y="838" width="3" height="1" fill="#d4d4d4" fill-opacity="0.2"/>
<rect x="16" y="837" width="18" height="1" fill="#dcdcaa" fill-opacity="0.42"/><rect x="16" y="838" width="18" height="1" fill="#dcdcaa" fill-opacity="0.2"/>
<rect x="35" y="837" width="19" height="1" fill="#ce9178" fill-opacity="0.42"/><rect x="35" y="838" width="19" height="1" fill="#ce9178" fill-opacity="0.2"/>
<rect x="54" y="837" width="2" height="1" fill="#d4d4d4" fill-opacity="0.42"/><rect x="54" y="838" width="2" height="1" fill="#d4d4d4" fill-opacity="0.2"/>
<rect x="58" y="837" width="4" height="1" fill="#ce9178" fill-opacity="0.42"/><rect x="58" y="838" width="4" height="1" fill="#ce9178" fill-opacity="0.2"/>
<rect x="69" y="837" width="12" height="1" fill="#ce9178" fill-opacity="0.42"/><rect x="69" y="838" width="12" height="1" fill="#ce9178" fill-opacity="0.2"/>
<rect x="84" y="837" width="2" height="1" fill="#b5cea8" fill-opacity="0.42"/><rect x="84" y="838" width="2" height="1" fill="#b5cea8" fill-opacity="0.2"/>
<rect x="12" y="839" width="19" height="1" fill="#dcdcaa" fill-opacity="0.42"/><rect x="12" y="840" width="19" height="1" fill="#dcdcaa" fill-opacity="0.2"/>
<rect x="34" y="839" width="17" height="1" fill="#ce9178" fill-opacity="0.42"/><rect x="34" y="840" width="17" height="1" fill="#ce9178" fill-opacity="0.2"/>
<rect x="54" y="839" width="24" height="1" fill="#ce9178" fill-opacity="0.42"/><rect x="54" y="840" width="24" height="1" fill="#ce9178" fill-opacity="0.2"/>
<rect x="81" y="839" width="2" height="1" fill="#b5cea8" fill-opacity="0.42"/><rect x="81" y="840" width="2" height="1" fill="#b5cea8" fill-opacity="0.2"/>
<rect x="12" y="841" width="20" height="1" fill="#dcdcaa" fill-opacity="0.42"/><rect x="12" y="842" width="20" height="1" fill="#dcdcaa" fill-opacity="0.2"/>
<rect x="33" y="841" width="9" height="1" fill="#d4d4d4" fill-opacity="0.42"/><rect x="33" y="842" width="9" height="1" fill="#d4d4d4" fill-opacity="0.2"/>
<rect x="8" y="843" width="4" height="1" fill="#c586c0" fill-opacity="0.42"/><rect x="8" y="844" width="4" height="1" fill="#c586c0" fill-opacity="0.2"/>
<rect x="8" y="847" width="112" height="2" fill="#264f78"/>
<rect x="8" y="847" width="18" height="1" fill="#d4d4d4" fill-opacity="0.32"/><rect x="8" y="848" width="18" height="1" fill="#d4d4d4" fill-opacity="0.16"/>
<rect x="26" y="847" width="12" height="2" fill="#e8940f"/>
<rect x="39" y="847" width="18" height="1" fill="#d4d4d4" fill-opacity="0.32"/><rect x="39" y="848" width="18" height="1" fill="#d4d4d4" fill-opacity="0.16"/>
<rect x="8" y="849" width="112" height="2" fill="#264f78"/>
<rect x="8" y="849" width="17" height="1" fill="#d4d4d4" fill-opacity="0.32"/><rect x="8" y="850" width="17" height="1" fill="#d4d4d4" fill-opacity="0.16"/>
<rect x="25" y="849" width="12" height="2" fill="#e8940f"/>
<rect x="38" y="849" width="19" height="1" fill="#d4d4d4" fill-opacity="0.32"/><rect x="38" y="850" width="19" height="1" fill="#d4d4d4" fill-opacity="0.16"/>
<rect x="57" y="849" width="22" height="1" fill="#9cdcfe" fill-opacity="0.32"/><rect x="57" y="850" width="22" height="1" fill="#9cdcfe" fill-opacity="0.16"/>
<rect x="12" y="851" width="2" height="1" fill="#c586c0" fill-opacity="0.42"/><rect x="12" y="852" width="2" height="1" fill="#c586c0" fill-opacity="0.2"/>
<rect x="15" y="851" width="19" height="1" fill="#d4d4d4" fill-opacity="0.42"/><rect x="15" y="852" width="19" height="1" fill="#d4d4d4" fill-opacity="0.2"/>
<rect x="36" y="851" width="3" height="1" fill="#c586c0" fill-opacity="0.42"/><rect x="36" y="852" width="3" height="1" fill="#c586c0" fill-opacity="0.2"/>
<rect x="16" y="853" width="5" height="1" fill="#c586c0" fill-opacity="0.42"/><rect x="16" y="854" width="5" height="1" fill="#c586c0" fill-opacity="0.2"/>
<rect x="22" y="853" width="5" height="1" fill="#d4d4d4" fill-opacity="0.42"/><rect x="22" y="854" width="5" height="1" fill="#d4d4d4" fill-opacity="0.2"/>
<rect x="29" y="853" width="15" height="1" fill="#dcdcaa" fill-opacity="0.42"/><rect x="29" y="854" width="15" height="1" fill="#dcdcaa" fill-opacity="0.2"/>
<rect x="44" y="853" width="13" height="1" fill="#d4d4d4" fill-opacity="0.42"/><rect x="44" y="854" width="13" height="1" fill="#d4d4d4" fill-opacity="0.2"/>
<rect x="58" y="853" width="2" height="1" fill="#9cdcfe" fill-opacity="0.42"/><rect x="58" y="854" width="2" height="1" fill="#9cdcfe" fill-opacity="0.2"/>
<rect x="60" y="853" width="12" height="1" fill="#d4d4d4" fill-opacity="0.42"/><rect x="60" y="854" width="12" height="1" fill="#d4d4d4" fill-opacity="0.2"/>
<rect x="74" y="853" width="2" height="1" fill="#9cdcfe" fill-opacity="0.42"/><rect x="74" y="854" width="2" height="1" fill="#9cdcfe" fill-opacity="0.2"/>
<rect x="77" y="853" width="13" height="1" fill="#d4d4d4" fill-opacity="0.42"/><rect x="77" y="854" width="13" height="1" fill="#d4d4d4" fill-opacity="0.2"/>
<rect x="90" y="853" width="2" height="1" fill="#9cdcfe" fill-opacity="0.42"/><rect x="90" y="854" width="2" height="1" fill="#9cdcfe" fill-opacity="0.2"/>
<rect x="16" y="855" width="13" height="1" fill="#dcdcaa" fill-opacity="0.42"/><rect x="16" y="856" width="13" height="1" fill="#dcdcaa" fill-opacity="0.2"/>
<rect x="30" y="855" width="5" height="1" fill="#d4d4d4" fill-opacity="0.42"/><rect x="30" y="856" width="5" height="1" fill="#d4d4d4" fill-opacity="0.2"/>
<rect x="35" y="855" width="6" height="1" fill="#b5cea8" fill-opacity="0.42"/><rect x="35" y="856" width="6" height="1" fill="#b5cea8" fill-opacity="0.2"/>
<rect x="16" y="857" width="13" height="1" fill="#dcdcaa" fill-opacity="0.42"/><rect x="16" y="858" width="13" height="1" fill="#dcdcaa" fill-opacity="0.2"/>
<rect x="30" y="857" width="5" height="1" fill="#d4d4d4" fill-opacity="0.42"/><rect x="30" y="858" width="5" height="1" fill="#d4d4d4" fill-opacity="0.2"/>
<rect x="35" y="857" width="6" height="1" fill="#b5cea8" fill-opacity="0.42"/><rect x="35" y="858" width="6" height="1" fill="#b5cea8" fill-opacity="0.2"/>
<rect x="16" y="859" width="13" height="1" fill="#dcdcaa" fill-opacity="0.42"/><rect x="16" y="860" width="13" height="1" fill="#dcdcaa" fill-opacity="0.2"/>
<rect x="30" y="859" width="5" height="1" fill="#d4d4d4" fill-opacity="0.42"/><rect x="30" y="860" width="5" height="1" fill="#d4d4d4" fill-opacity="0.2"/>
<rect x="35" y="859" width="5" height="1" fill="#b5cea8" fill-opacity="0.42"/><rect x="35" y="860" width="5" height="1" fill="#b5cea8" fill-opacity="0.2"/>
<rect x="16" y="861" width="9" height="1" fill="#dcdcaa" fill-opacity="0.42"/><rect x="16" y="862" width="9" height="1" fill="#dcdcaa" fill-opacity="0.2"/>
<rect x="26" y="861" width="12" height="1" fill="#d4d4d4" fill-opacity="0.42"/><rect x="26" y="862" width="12" height="1" fill="#d4d4d4" fill-opacity="0.2"/>
<rect x="16" y="863" width="7" height="1" fill="#d4d4d4" fill-opacity="0.42"/><rect x="16" y="864" width="7" height="1" fill="#d4d4d4" fill-opacity="0.2"/>
<rect x="24" y="863" width="10" height="1" fill="#dcdcaa" fill-opacity="0.42"/><rect x="24" y="864" width="10" height="1" fill="#dcdcaa" fill-opacity="0.2"/>
<rect x="16" y="865" width="9" height="1" fill="#dcdcaa" fill-opacity="0.42"/><rect x="16" y="866" width="9" height="1" fill="#dcdcaa" fill-opacity="0.2"/>
<rect x="26" y="865" width="6" height="1" fill="#d4d4d4" fill-opacity="0.42"/><rect x="26" y="866" width="6" height="1" fill="#d4d4d4" fill-opacity="0.2"/>
<rect x="16" y="869" width="10" height="1" fill="#d4d4d4" fill-opacity="0.42"/><rect x="16" y="870" width="10" height="1" fill="#d4d4d4" fill-opacity="0.2"/>
<rect x="27" y="869" width="1" height="1" fill="#d4d4d4" fill-opacity="0.42"/><rect x="27" y="870" width="1" height="1" fill="#d4d4d4" fill-opacity="0.2"/>
<rect x="29" y="869" width="5" height="1" fill="#9cdcfe" fill-opacity="0.42"/><rect x="29" y="870" width="5" height="1" fill="#9cdcfe" fill-opacity="0.2"/>
<rect x="12" y="871" width="3" height="1" fill="#c586c0" fill-opacity="0.42"/><rect x="12" y="872" width="3" height="1" fill="#c586c0" fill-opacity="0.2"/>
<rect x="8" y="873" width="4" height="1" fill="#c586c0" fill-opacity="0.42"/><rect x="8" y="874" width="4" height="1" fill="#c586c0" fill-opacity="0.2"/>
<rect x="8" y="877" width="7" height="1" fill="#d4d4d4" fill-opacity="0.42"/><rect x="8" y="878" width="7" height="1" fill="#d4d4d4" fill-opacity="0.2"/>
<rect x="16" y="877" width="12" height="1" fill="#dcdcaa" fill-opacity="0.42"/><rect x="16" y="878" width="12" height="1" fill="#dcdcaa" fill-opacity="0.2"/>
<rect x="29" y="877" width="10" height="1" fill="#c586c0" fill-opacity="0.42"/><rect x="29" y="878" width="10" height="1" fill="#c586c0" fill-opacity="0.2"/>
<rect x="38" y="877" width="1" height="1" fill="#d4d4d4" fill-opacity="0.42"/><rect x="38" y="878" width="1" height="1" fill="#d4d4d4" fill-opacity="0.2"/>
<rect x="12" y="879" width="5" height="1" fill="#c586c0" fill-opacity="0.42"/><rect x="12" y="880" width="5" height="1" fill="#c586c0" fill-opacity="0.2"/>
<rect x="18" y="879" width="4" height="1" fill="#9cdcfe" fill-opacity="0.42"/><rect x="18" y="880" width="4" height="1" fill="#9cdcfe" fill-opacity="0.2"/>
<rect x="23" y="879" width="1" height="1" fill="#c586c0" fill-opacity="0.42"/><rect x="23" y="880" width="1" height="1" fill="#c586c0" fill-opacity="0.2"/>
<rect x="16" y="881" width="7" height="1" fill="#d4d4d4" fill-opacity="0.42"/><rect x="16" y="882" width="7" height="1" fill="#d4d4d4" fill-opacity="0.2"/>
<rect x="24" y="881" width="9" height="1" fill="#dcdcaa" fill-opacity="0.42"/><rect x="24" y="882" width="9" height="1" fill="#dcdcaa" fill-opacity="0.2"/>
<rect x="16" y="885" width="2" height="1" fill="#c586c0" fill-opacity="0.42"/><rect x="16" y="886" width="2" height="1" fill="#c586c0" fill-opacity="0.2"/>
<rect x="19" y="885" width="23" height="1" fill="#dcdcaa" fill-opacity="0.42"/><rect x="19" y="886" width="23" height="1" fill="#dcdcaa" fill-opacity="0.2"/>
<rect x="46" y="885" width="9" height="1" fill="#ce9178" fill-opacity="0.42"/><rect x="46" y="886" width="9" height="1" fill="#ce9178" fill-opacity="0.2"/>
<rect x="56" y="885" width="6" height="1" fill="#d4d4d4" fill-opacity="0.42"/><rect x="56" y="886" width="6" height="1" fill="#d4d4d4" fill-opacity="0.2"/>
<rect x="63" y="885" width="4" height="1" fill="#c586c0" fill-opacity="0.42"/><rect x="63" y="886" width="4" height="1" fill="#c586c0" fill-opacity="0.2"/>
<rect x="20" y="887" width="7" height="1" fill="#d4d4d4" fill-opacity="0.42"/><rect x="20" y="888" width="7" height="1" fill="#d4d4d4" fill-opacity="0.2"/>
<rect x="28" y="887" width="12" height="1" fill="#dcdcaa" fill-opacity="0.42"/><rect x="28" y="888" width="12" height="1" fill="#dcdcaa" fill-opacity="0.2"/>
<rect x="20" y="889" width="24" height="1" fill="#dcdcaa" fill-opacity="0.42"/><rect x="20" y="890" width="24" height="1" fill="#dcdcaa" fill-opacity="0.2"/>
<rect x="47" y="889" width="9" height="1" fill="#ce9178" fill-opacity="0.42"/><rect x="47" y="890" width="9" height="1" fill="#ce9178" fill-opacity="0.2"/>
<rect x="57" y="889" width="4" height="1" fill="#d4d4d4" fill-opacity="0.42"/><rect x="57" y="890" width="4" height="1" fill="#d4d4d4" fill-opacity="0.2"/>
<rect x="16" y="891" width="3" height="1" fill="#c586c0" fill-opacity="0.42"/><rect x="16" y="892" width="3" height="1" fill="#c586c0" fill-opacity="0.2"/>
<rect x="12" y="893" width="3" height="1" fill="#c586c0" fill-opacity="0.42"/><rect x="12" y="894" width="3" height="1" fill="#c586c0" fill-opacity="0.2"/>
<rect x="8" y="895" width="4" height="1" fill="#c586c0" fill-opacity="0.42"/><rect x="8" y="896" width="4" height="1" fill="#c586c0" fill-opacity="0.2"/>
</svg></div>
<div id="vs"><div class="bd"></div><div class="sl"></div><div style="position:absolute;left:5px;top:240.3px;width:5px;height:6px;background:#d18616;opacity:0.6"></div><div style="position:absolute;left:5px;top:249.2px;width:5px;height:6px;background:#d18616;opacity:0.6"></div><div style="position:absolute;left:5px;top:258.2px;width:5px;height:6px;background:#d18616;opacity:0.6"></div><div style="position:absolute;left:5px;top:279.6px;width:5px;height:6px;background:#d18616;opacity:0.6"></div><div style="position:absolute;left:5px;top:365.2px;width:5px;height:6px;background:#d18616;opacity:0.6"></div><div style="position:absolute;left:5px;top:383.0px;width:5px;height:6px;background:#d18616;opacity:0.6"></div><div style="position:absolute;left:5px;top:393.7px;width:5px;height:6px;background:#d18616;opacity:0.6"></div><div style="position:absolute;left:5px;top:397.3px;width:5px;height:6px;background:#d18616;opacity:0.6"></div><div style="position:absolute;left:5px;top:614.9px;width:5px;height:6px;background:#d18616;opacity:0.6"></div><div style="position:absolute;left:5px;top:632.7px;width:5px;height:6px;background:#d18616;opacity:0.6"></div><div style="position:absolute;left:5px;top:714.8px;width:5px;height:6px;background:#d18616;opacity:0.6"></div><div style="position:absolute;left:5px;top:766.5px;width:5px;height:6px;background:#d18616;opacity:0.6"></div><div style="position:absolute;left:5px;top:814.7px;width:5px;height:6px;background:#d18616;opacity:0.6"></div><div style="position:absolute;left:5px;top:816.5px;width:5px;height:6px;background:#d18616;opacity:0.6"></div><div style="position:absolute;left:5px;top:830.7px;width:5px;height:6px;background:#d18616;opacity:0.6"></div><div style="position:absolute;left:5px;top:832.5px;width:5px;height:6px;background:#d18616;opacity:0.6"></div><div style="position:absolute;left:1px;top:242.3px;width:13px;height:2px;background:#c0c0c0;opacity:0.65"></div><div style="position:absolute;left:1px;top:251.2px;width:13px;height:2px;background:#c0c0c0;opacity:0.65"></div><div style="position:absolute;left:1px;top:260.2px;width:13px;height:2px;background:#c0c0c0;opacity:0.65"></div><div style="position:absolute;left:1px;top:281.6px;width:13px;height:2px;background:#c0c0c0;opacity:0.65"></div><div style="position:absolute;left:1px;top:367.2px;width:13px;height:2px;background:#c0c0c0;opacity:0.65"></div><div style="position:absolute;left:1px;top:385.0px;width:13px;height:2px;background:#c0c0c0;opacity:0.65"></div><div style="position:absolute;left:1px;top:395.7px;width:13px;height:2px;background:#c0c0c0;opacity:0.65"></div><div style="position:absolute;left:1px;top:399.3px;width:13px;height:2px;background:#c0c0c0;opacity:0.65"></div><div style="position:absolute;left:1px;top:616.9px;width:13px;height:2px;background:#c0c0c0;opacity:0.65"></div><div style="position:absolute;left:1px;top:634.7px;width:13px;height:2px;background:#c0c0c0;opacity:0.65"></div><div style="position:absolute;left:1px;top:716.8px;width:13px;height:2px;background:#c0c0c0;opacity:0.65"></div><div style="position:absolute;left:1px;top:768.5px;width:13px;height:2px;background:#c0c0c0;opacity:0.65"></div><div style="position:absolute;left:1px;top:816.7px;width:13px;height:2px;background:#c0c0c0;opacity:0.65"></div><div style="position:absolute;left:1px;top:818.5px;width:13px;height:2px;background:#c0c0c0;opacity:0.65"></div><div style="position:absolute;left:1px;top:832.7px;width:13px;height:2px;background:#c0c0c0;opacity:0.65"></div><div style="position:absolute;left:1px;top:834.5px;width:13px;height:2px;background:#c0c0c0;opacity:0.65"></div></div>
<div id="hs"><div class="sl"></div></div>
<div id="find">
 <div class="sash"></div>
 <svg style="position:absolute;left:6px;top:9px" width="10" height="14" viewBox="0 0 10 14"><path d="M2.5 2 L7.5 7 L2.5 12" stroke="#c5c5c5" stroke-width="1.2" fill="none"/></svg>
 <div class="inp"></div>
 <div class="txt">esx_chopshop</div>
 <div style="position:absolute;left:183px;top:6px;width:20px;height:20px;background:#245479;"></div>
 <div style="position:absolute;left:185px;top:9px;font-size:12px;color:#fff;">Aa</div>
 <div style="position:absolute;left:208px;top:10px;width:14px;height:1px;background:#c5c5c5"></div><div style="position:absolute;left:209px;top:10px;font-size:10px;color:#c5c5c5;letter-spacing:-0.5px">Abl</div><div style="position:absolute;left:208px;top:21px;width:14px;height:1px;background:#c5c5c5"></div>
 <div style="position:absolute;left:231px;top:17px;width:4px;height:4px;background:#c5c5c5"></div><svg style="position:absolute;left:235px;top:9px" width="9" height="9" viewBox="0 0 9 9"><path d="M4.5 0.5 V8 M1 2.5 L8 6 M8 2.5 L1 6" stroke="#c5c5c5" stroke-width="1.2" fill="none"/></svg>
 <div style="position:absolute;left:255px;top:9px;font-size:13px;color:#cccccc;letter-spacing:-0.6px">12 of 16</div>
 <svg style="position:absolute;left:329px;top:8px" width="14" height="16" viewBox="0 0 14 16"><path d="M7 2 V14 M2 7 L7 2 L12 7" stroke="#c5c5c5" stroke-width="1.3" fill="none"/></svg>
 <svg style="position:absolute;left:352px;top:8px" width="14" height="16" viewBox="0 0 14 16"><path d="M7 2 V14 M2 9 L7 14 L12 9" stroke="#c5c5c5" stroke-width="1.3" fill="none"/></svg>
 <div style="position:absolute;left:371px;top:6px;width:18px;height:18px;border:1px solid #007fd4;"></div>
 <svg style="position:absolute;left:374px;top:10px" width="14" height="12" viewBox="0 0 14 12"><path d="M1 1.5 H11 M1 5.5 H13 M1 9.5 H9" stroke="#c5c5c5" stroke-width="1" fill="none"/></svg>
 <svg style="position:absolute;left:398px;top:10px" width="12" height="12" viewBox="0 0 12 12"><path d="M1.5 1.5 L10 10 M10 1.5 L1.5 10" stroke="#c5c5c5" stroke-width="1.2" fill="none"/></svg>
</div>
<div id="sb">
 <span style="left:955px;letter-spacing:-0.13px">16 selections (192 characters selected)</span>
 <span style="left:1172px">Spaces: 4</span>
 <span style="left:1237px;letter-spacing:-0.1px">UTF-8</span>
 <span style="left:1284px;letter-spacing:-0.8px">CRLF</span>
 <span style="left:1327px">Lua</span>

 <svg style="position:absolute;left:1362px;top:4px" width="16" height="15" viewBox="0 0 16 15"><path d="M4.5 1.5 H13.5 V7.5 H11 L9.5 9" stroke="#fff" stroke-width="1.1" fill="none"/><circle cx="5.5" cy="8" r="2.4" stroke="#fff" stroke-width="1.1" fill="none"/><path d="M1 14 Q1 10.5 5.5 10.5 Q10 10.5 10 14" stroke="#fff" stroke-width="1.1" fill="none"/></svg>
 <svg style="position:absolute;left:1392px;top:4px" width="14" height="15" viewBox="0 0 14 15"><path d="M2 11.5 H12 L11 10 V6 Q11 1.8 7 1.8 Q3 1.8 3 6 V10 Z" stroke="#fff" stroke-width="1.1" fill="none"/><path d="M5.5 12.5 Q7 14.5 8.5 12.5" stroke="#fff" stroke-width="1.1" fill="none"/></svg>
</div>
</body></html>
